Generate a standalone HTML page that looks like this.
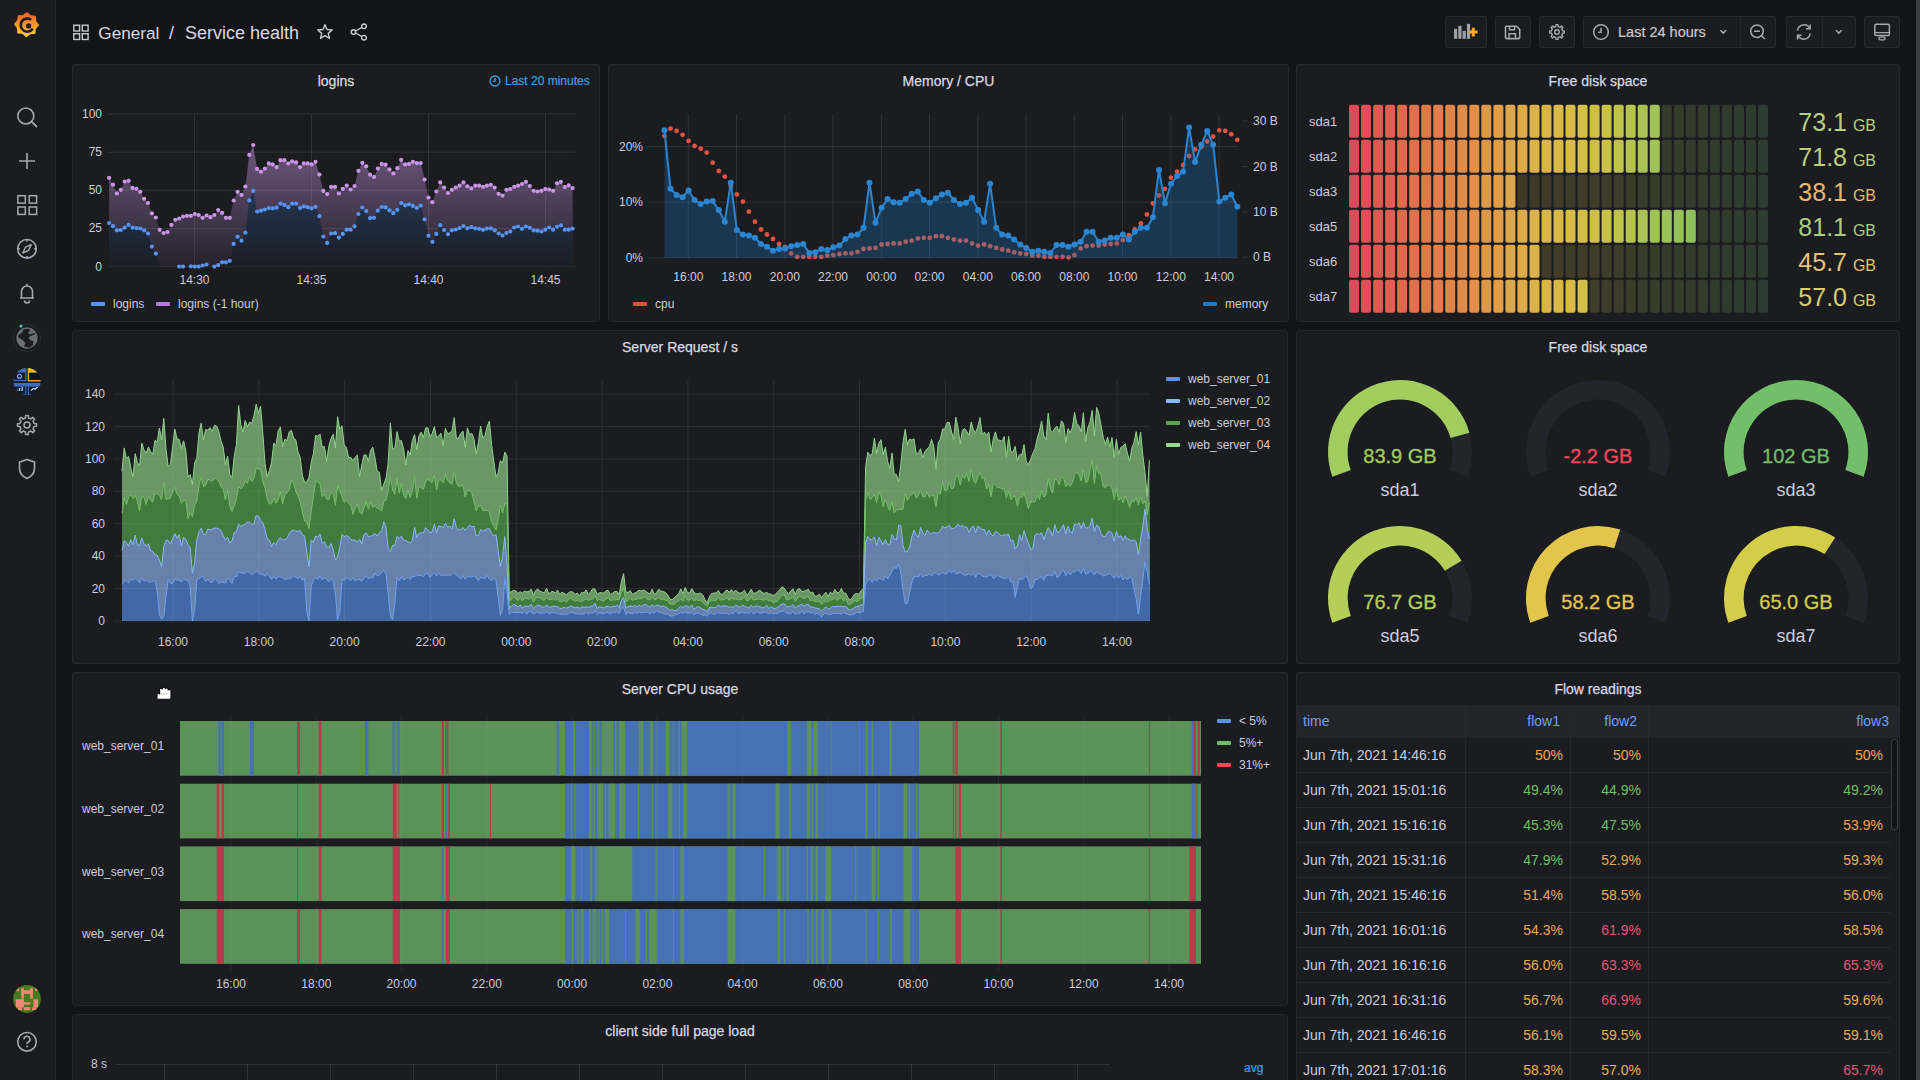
<!DOCTYPE html><html><head><meta charset="utf-8"><title>Service health - Grafana</title><style>
html,body{margin:0;padding:0;width:1920px;height:1080px;overflow:hidden;background:#131418;font-family:"Liberation Sans", sans-serif;color:#ccccdc}
.abs{position:absolute}
.panel{position:absolute;background:#1b1c20;border:1px solid #25272b;border-radius:3px;box-sizing:border-box}
.ptitle{position:absolute;text-align:center;font-size:14px;line-height:18px;height:18px;color:#d8d9e3;-webkit-text-stroke:0.25px #d8d9e3;white-space:nowrap}
.lbl{position:absolute;font-size:12px;line-height:14px;color:#ccccdc;white-space:nowrap}
svg{position:absolute;overflow:visible}
.btn{position:absolute;top:16px;height:32px;box-sizing:border-box;background:#1b1c20;border:1px solid #27292d;border-radius:2px}
</style></head><body>
<div class="abs" style="left:0;top:0;width:55px;height:1080px;background:#1b1c20;border-right:1px solid #26282c"></div>
<div class="abs" style="left:1916px;top:0;width:4px;height:1080px;background:#3e3f44"></div>
<div class="panel" style="left:72px;top:64px;width:528px;height:258px"></div>
<div class="ptitle" style="left:136.0px;top:72px;width:400px">logins</div>
<div class="panel" style="left:608px;top:64px;width:681px;height:258px"></div>
<div class="ptitle" style="left:748.5px;top:72px;width:400px">Memory / CPU</div>
<div class="panel" style="left:1296px;top:64px;width:604px;height:258px"></div>
<div class="ptitle" style="left:1398.0px;top:72px;width:400px">Free disk space</div>
<div class="panel" style="left:72px;top:330px;width:1216px;height:334px"></div>
<div class="ptitle" style="left:480.0px;top:338px;width:400px">Server Request / s</div>
<div class="panel" style="left:1296px;top:330px;width:604px;height:334px"></div>
<div class="ptitle" style="left:1398.0px;top:338px;width:400px">Free disk space</div>
<div class="panel" style="left:72px;top:672px;width:1216px;height:334px"></div>
<div class="ptitle" style="left:480.0px;top:680px;width:400px">Server CPU usage</div>
<div class="panel" style="left:1296px;top:672px;width:604px;height:420px"></div>
<div class="ptitle" style="left:1398.0px;top:680px;width:400px">Flow readings</div>
<div class="panel" style="left:72px;top:1014px;width:1216px;height:200px"></div>
<div class="ptitle" style="left:480.0px;top:1022px;width:400px">client side full page load</div>
<div class="abs" style="left:98.3px;top:22px;font-size:17.2px;line-height:22px;color:#d8d9e3;white-space:nowrap">General</div>
<div class="abs" style="left:169px;top:22px;font-size:18px;line-height:22px;color:#d8d9e3;white-space:nowrap">/</div>
<div class="abs" style="left:185px;top:22px;font-size:18px;line-height:22px;color:#d8d9e3;white-space:nowrap">Service health</div>
<svg style="left:0;top:0" width="1920" height="1080"><defs><linearGradient id="gp" gradientUnits="userSpaceOnUse" x1="0" y1="140" x2="0" y2="267"><stop offset="0" stop-color="#ca95e5" stop-opacity="0.5"/><stop offset="1" stop-color="#ca95e5" stop-opacity="0.05"/></linearGradient><linearGradient id="gb" gradientUnits="userSpaceOnUse" x1="0" y1="114" x2="0" y2="267"><stop offset="0" stop-color="#2d5080"/><stop offset="1" stop-color="#1a1d24"/></linearGradient></defs><line x1="108" x2="575" y1="266.6" y2="266.6" stroke="rgba(204,204,220,0.12)" stroke-width="1"/><line x1="108" x2="575" y1="228.5" y2="228.5" stroke="rgba(204,204,220,0.12)" stroke-width="1"/><line x1="108" x2="575" y1="190.3" y2="190.3" stroke="rgba(204,204,220,0.12)" stroke-width="1"/><line x1="108" x2="575" y1="152.2" y2="152.2" stroke="rgba(204,204,220,0.12)" stroke-width="1"/><line x1="108" x2="575" y1="114.0" y2="114.0" stroke="rgba(204,204,220,0.12)" stroke-width="1"/><line x1="194.5" x2="194.5" y1="114" y2="267" stroke="rgba(204,204,220,0.12)" stroke-width="1"/><line x1="311.5" x2="311.5" y1="114" y2="267" stroke="rgba(204,204,220,0.12)" stroke-width="1"/><line x1="428.5" x2="428.5" y1="114" y2="267" stroke="rgba(204,204,220,0.12)" stroke-width="1"/><line x1="545.5" x2="545.5" y1="114" y2="267" stroke="rgba(204,204,220,0.12)" stroke-width="1"/><polygon points="109.1,266.6 109.1,177.9 113.0,184.7 116.9,193.4 120.8,189.8 124.7,181.6 128.6,180.8 132.5,187.9 136.4,188.8 140.3,191.8 144.2,198.8 148.0,203.0 151.9,213.3 155.8,217.5 159.7,229.8 163.6,233.0 167.5,232.1 171.4,224.9 175.3,219.8 179.2,218.5 183.1,216.5 187.0,215.8 190.9,215.8 194.8,214.0 198.7,215.0 202.6,217.8 206.5,215.5 210.4,217.2 214.3,215.0 218.2,210.0 222.1,212.9 225.9,217.8 229.8,217.8 233.7,200.5 237.6,191.8 241.5,194.9 245.4,186.6 249.3,154.9 253.2,145.0 257.1,168.9 261.0,171.7 264.9,168.6 268.8,163.4 272.7,164.4 276.6,167.1 280.5,160.2 284.4,160.2 288.3,163.4 292.2,161.3 296.1,162.4 300.0,167.1 303.8,163.4 307.7,163.4 311.6,164.4 315.5,161.8 319.4,174.6 323.3,190.9 327.2,194.1 331.1,186.9 335.0,186.9 338.9,193.4 342.8,188.8 346.7,185.6 350.6,189.5 354.5,186.0 358.4,170.8 362.3,162.8 366.2,166.3 370.1,174.7 374.0,176.9 377.9,168.6 381.7,163.9 385.6,164.7 389.5,169.4 393.4,173.4 397.3,168.2 401.2,159.9 405.1,164.4 409.0,163.9 412.9,161.8 416.8,163.1 420.7,163.1 424.6,179.6 428.5,197.5 432.4,202.2 436.3,191.5 440.2,182.4 444.1,187.6 448.0,193.0 451.9,189.8 455.8,187.6 459.6,185.6 463.5,182.4 467.4,186.3 471.3,188.3 475.2,185.7 479.1,185.6 483.0,186.8 486.9,185.7 490.8,184.8 494.7,187.6 498.6,193.8 502.5,195.6 506.4,189.8 510.3,189.1 514.2,186.8 518.1,185.7 522.0,184.0 525.9,181.8 529.8,186.0 533.7,190.8 537.5,191.5 541.4,190.8 545.3,189.1 549.2,189.5 553.1,190.8 557.0,183.3 560.9,181.8 564.8,187.1 568.7,185.3 572.6,188.0 572.6,266.6" fill="url(#gp)"/><polygon points="109.1,266.6 109.1,223.0 113.0,226.2 116.9,230.3 120.8,230.0 124.7,227.7 128.6,224.9 132.5,227.7 136.4,228.1 140.3,228.5 144.2,230.4 148.0,233.5 151.9,246.6 155.8,253.6 159.7,266.6 163.6,266.6 167.5,266.6 171.4,266.6 175.3,266.6 179.2,266.6 183.1,266.6 187.0,266.6 190.9,266.3 194.8,266.6 198.7,266.6 202.6,265.5 206.5,264.5 210.4,266.6 214.3,266.6 218.2,265.2 222.1,262.3 225.9,262.3 229.8,260.8 233.7,243.9 237.6,236.8 241.5,240.7 245.4,232.7 249.3,200.4 253.2,190.9 257.1,211.5 261.0,210.7 264.9,209.5 268.8,208.0 272.7,208.3 276.6,207.7 280.5,203.7 284.4,204.9 288.3,207.2 292.2,203.7 296.1,203.7 300.0,208.0 303.8,206.3 307.7,207.2 311.6,208.3 315.5,206.8 319.4,216.2 323.3,236.5 327.2,242.9 331.1,233.5 335.0,233.2 338.9,237.6 342.8,233.9 346.7,229.7 350.6,229.7 354.5,226.3 358.4,214.0 362.3,207.5 366.2,211.1 370.1,218.2 374.0,217.8 377.9,210.6 381.7,207.1 385.6,207.4 389.5,210.3 393.4,213.2 397.3,209.8 401.2,203.1 405.1,205.3 409.0,204.3 412.9,205.9 416.8,208.0 420.7,205.6 424.6,219.3 428.5,235.8 432.4,241.9 436.3,233.9 440.2,225.2 444.1,230.0 448.0,234.2 451.9,230.3 455.8,229.5 459.6,228.0 463.5,226.0 467.4,228.3 471.3,227.2 475.2,228.3 479.1,228.8 483.0,229.8 486.9,228.6 490.8,228.3 494.7,230.3 498.6,233.5 502.5,235.5 506.4,233.0 510.3,231.5 514.2,227.5 518.1,226.5 522.0,228.8 525.9,226.5 529.8,227.8 533.7,230.3 537.5,230.7 541.4,231.5 545.3,229.7 549.2,227.5 553.1,229.7 557.0,226.8 560.9,225.4 564.8,229.7 568.7,229.7 572.6,228.6 572.6,266.6" fill="url(#gb)"/><circle cx="109.1" cy="177.9" r="2.1" fill="#ca95e5"/><circle cx="113.0" cy="184.7" r="2.1" fill="#ca95e5"/><circle cx="116.9" cy="193.4" r="2.1" fill="#ca95e5"/><circle cx="120.8" cy="189.8" r="2.1" fill="#ca95e5"/><circle cx="124.7" cy="181.6" r="2.1" fill="#ca95e5"/><circle cx="128.6" cy="180.8" r="2.1" fill="#ca95e5"/><circle cx="132.5" cy="187.9" r="2.1" fill="#ca95e5"/><circle cx="136.4" cy="188.8" r="2.1" fill="#ca95e5"/><circle cx="140.3" cy="191.8" r="2.1" fill="#ca95e5"/><circle cx="144.2" cy="198.8" r="2.1" fill="#ca95e5"/><circle cx="148.0" cy="203.0" r="2.1" fill="#ca95e5"/><circle cx="151.9" cy="213.3" r="2.1" fill="#ca95e5"/><circle cx="155.8" cy="217.5" r="2.1" fill="#ca95e5"/><circle cx="159.7" cy="229.8" r="2.1" fill="#ca95e5"/><circle cx="163.6" cy="233.0" r="2.1" fill="#ca95e5"/><circle cx="167.5" cy="232.1" r="2.1" fill="#ca95e5"/><circle cx="171.4" cy="224.9" r="2.1" fill="#ca95e5"/><circle cx="175.3" cy="219.8" r="2.1" fill="#ca95e5"/><circle cx="179.2" cy="218.5" r="2.1" fill="#ca95e5"/><circle cx="183.1" cy="216.5" r="2.1" fill="#ca95e5"/><circle cx="187.0" cy="215.8" r="2.1" fill="#ca95e5"/><circle cx="190.9" cy="215.8" r="2.1" fill="#ca95e5"/><circle cx="194.8" cy="214.0" r="2.1" fill="#ca95e5"/><circle cx="198.7" cy="215.0" r="2.1" fill="#ca95e5"/><circle cx="202.6" cy="217.8" r="2.1" fill="#ca95e5"/><circle cx="206.5" cy="215.5" r="2.1" fill="#ca95e5"/><circle cx="210.4" cy="217.2" r="2.1" fill="#ca95e5"/><circle cx="214.3" cy="215.0" r="2.1" fill="#ca95e5"/><circle cx="218.2" cy="210.0" r="2.1" fill="#ca95e5"/><circle cx="222.1" cy="212.9" r="2.1" fill="#ca95e5"/><circle cx="225.9" cy="217.8" r="2.1" fill="#ca95e5"/><circle cx="229.8" cy="217.8" r="2.1" fill="#ca95e5"/><circle cx="233.7" cy="200.5" r="2.1" fill="#ca95e5"/><circle cx="237.6" cy="191.8" r="2.1" fill="#ca95e5"/><circle cx="241.5" cy="194.9" r="2.1" fill="#ca95e5"/><circle cx="245.4" cy="186.6" r="2.1" fill="#ca95e5"/><circle cx="249.3" cy="154.9" r="2.1" fill="#ca95e5"/><circle cx="253.2" cy="145.0" r="2.1" fill="#ca95e5"/><circle cx="257.1" cy="168.9" r="2.1" fill="#ca95e5"/><circle cx="261.0" cy="171.7" r="2.1" fill="#ca95e5"/><circle cx="264.9" cy="168.6" r="2.1" fill="#ca95e5"/><circle cx="268.8" cy="163.4" r="2.1" fill="#ca95e5"/><circle cx="272.7" cy="164.4" r="2.1" fill="#ca95e5"/><circle cx="276.6" cy="167.1" r="2.1" fill="#ca95e5"/><circle cx="280.5" cy="160.2" r="2.1" fill="#ca95e5"/><circle cx="284.4" cy="160.2" r="2.1" fill="#ca95e5"/><circle cx="288.3" cy="163.4" r="2.1" fill="#ca95e5"/><circle cx="292.2" cy="161.3" r="2.1" fill="#ca95e5"/><circle cx="296.1" cy="162.4" r="2.1" fill="#ca95e5"/><circle cx="300.0" cy="167.1" r="2.1" fill="#ca95e5"/><circle cx="303.8" cy="163.4" r="2.1" fill="#ca95e5"/><circle cx="307.7" cy="163.4" r="2.1" fill="#ca95e5"/><circle cx="311.6" cy="164.4" r="2.1" fill="#ca95e5"/><circle cx="315.5" cy="161.8" r="2.1" fill="#ca95e5"/><circle cx="319.4" cy="174.6" r="2.1" fill="#ca95e5"/><circle cx="323.3" cy="190.9" r="2.1" fill="#ca95e5"/><circle cx="327.2" cy="194.1" r="2.1" fill="#ca95e5"/><circle cx="331.1" cy="186.9" r="2.1" fill="#ca95e5"/><circle cx="335.0" cy="186.9" r="2.1" fill="#ca95e5"/><circle cx="338.9" cy="193.4" r="2.1" fill="#ca95e5"/><circle cx="342.8" cy="188.8" r="2.1" fill="#ca95e5"/><circle cx="346.7" cy="185.6" r="2.1" fill="#ca95e5"/><circle cx="350.6" cy="189.5" r="2.1" fill="#ca95e5"/><circle cx="354.5" cy="186.0" r="2.1" fill="#ca95e5"/><circle cx="358.4" cy="170.8" r="2.1" fill="#ca95e5"/><circle cx="362.3" cy="162.8" r="2.1" fill="#ca95e5"/><circle cx="366.2" cy="166.3" r="2.1" fill="#ca95e5"/><circle cx="370.1" cy="174.7" r="2.1" fill="#ca95e5"/><circle cx="374.0" cy="176.9" r="2.1" fill="#ca95e5"/><circle cx="377.9" cy="168.6" r="2.1" fill="#ca95e5"/><circle cx="381.7" cy="163.9" r="2.1" fill="#ca95e5"/><circle cx="385.6" cy="164.7" r="2.1" fill="#ca95e5"/><circle cx="389.5" cy="169.4" r="2.1" fill="#ca95e5"/><circle cx="393.4" cy="173.4" r="2.1" fill="#ca95e5"/><circle cx="397.3" cy="168.2" r="2.1" fill="#ca95e5"/><circle cx="401.2" cy="159.9" r="2.1" fill="#ca95e5"/><circle cx="405.1" cy="164.4" r="2.1" fill="#ca95e5"/><circle cx="409.0" cy="163.9" r="2.1" fill="#ca95e5"/><circle cx="412.9" cy="161.8" r="2.1" fill="#ca95e5"/><circle cx="416.8" cy="163.1" r="2.1" fill="#ca95e5"/><circle cx="420.7" cy="163.1" r="2.1" fill="#ca95e5"/><circle cx="424.6" cy="179.6" r="2.1" fill="#ca95e5"/><circle cx="428.5" cy="197.5" r="2.1" fill="#ca95e5"/><circle cx="432.4" cy="202.2" r="2.1" fill="#ca95e5"/><circle cx="436.3" cy="191.5" r="2.1" fill="#ca95e5"/><circle cx="440.2" cy="182.4" r="2.1" fill="#ca95e5"/><circle cx="444.1" cy="187.6" r="2.1" fill="#ca95e5"/><circle cx="448.0" cy="193.0" r="2.1" fill="#ca95e5"/><circle cx="451.9" cy="189.8" r="2.1" fill="#ca95e5"/><circle cx="455.8" cy="187.6" r="2.1" fill="#ca95e5"/><circle cx="459.6" cy="185.6" r="2.1" fill="#ca95e5"/><circle cx="463.5" cy="182.4" r="2.1" fill="#ca95e5"/><circle cx="467.4" cy="186.3" r="2.1" fill="#ca95e5"/><circle cx="471.3" cy="188.3" r="2.1" fill="#ca95e5"/><circle cx="475.2" cy="185.7" r="2.1" fill="#ca95e5"/><circle cx="479.1" cy="185.6" r="2.1" fill="#ca95e5"/><circle cx="483.0" cy="186.8" r="2.1" fill="#ca95e5"/><circle cx="486.9" cy="185.7" r="2.1" fill="#ca95e5"/><circle cx="490.8" cy="184.8" r="2.1" fill="#ca95e5"/><circle cx="494.7" cy="187.6" r="2.1" fill="#ca95e5"/><circle cx="498.6" cy="193.8" r="2.1" fill="#ca95e5"/><circle cx="502.5" cy="195.6" r="2.1" fill="#ca95e5"/><circle cx="506.4" cy="189.8" r="2.1" fill="#ca95e5"/><circle cx="510.3" cy="189.1" r="2.1" fill="#ca95e5"/><circle cx="514.2" cy="186.8" r="2.1" fill="#ca95e5"/><circle cx="518.1" cy="185.7" r="2.1" fill="#ca95e5"/><circle cx="522.0" cy="184.0" r="2.1" fill="#ca95e5"/><circle cx="525.9" cy="181.8" r="2.1" fill="#ca95e5"/><circle cx="529.8" cy="186.0" r="2.1" fill="#ca95e5"/><circle cx="533.7" cy="190.8" r="2.1" fill="#ca95e5"/><circle cx="537.5" cy="191.5" r="2.1" fill="#ca95e5"/><circle cx="541.4" cy="190.8" r="2.1" fill="#ca95e5"/><circle cx="545.3" cy="189.1" r="2.1" fill="#ca95e5"/><circle cx="549.2" cy="189.5" r="2.1" fill="#ca95e5"/><circle cx="553.1" cy="190.8" r="2.1" fill="#ca95e5"/><circle cx="557.0" cy="183.3" r="2.1" fill="#ca95e5"/><circle cx="560.9" cy="181.8" r="2.1" fill="#ca95e5"/><circle cx="564.8" cy="187.1" r="2.1" fill="#ca95e5"/><circle cx="568.7" cy="185.3" r="2.1" fill="#ca95e5"/><circle cx="572.6" cy="188.0" r="2.1" fill="#ca95e5"/><circle cx="109.1" cy="223.0" r="2.1" fill="#5794f2"/><circle cx="113.0" cy="226.2" r="2.1" fill="#5794f2"/><circle cx="116.9" cy="230.3" r="2.1" fill="#5794f2"/><circle cx="120.8" cy="230.0" r="2.1" fill="#5794f2"/><circle cx="124.7" cy="227.7" r="2.1" fill="#5794f2"/><circle cx="128.6" cy="224.9" r="2.1" fill="#5794f2"/><circle cx="132.5" cy="227.7" r="2.1" fill="#5794f2"/><circle cx="136.4" cy="228.1" r="2.1" fill="#5794f2"/><circle cx="140.3" cy="228.5" r="2.1" fill="#5794f2"/><circle cx="144.2" cy="230.4" r="2.1" fill="#5794f2"/><circle cx="148.0" cy="233.5" r="2.1" fill="#5794f2"/><circle cx="151.9" cy="246.6" r="2.1" fill="#5794f2"/><circle cx="155.8" cy="253.6" r="2.1" fill="#5794f2"/><circle cx="179.2" cy="266.6" r="2.1" fill="#5794f2"/><circle cx="183.1" cy="266.6" r="2.1" fill="#5794f2"/><circle cx="190.9" cy="266.3" r="2.1" fill="#5794f2"/><circle cx="194.8" cy="266.6" r="2.1" fill="#5794f2"/><circle cx="198.7" cy="266.6" r="2.1" fill="#5794f2"/><circle cx="202.6" cy="265.5" r="2.1" fill="#5794f2"/><circle cx="206.5" cy="264.5" r="2.1" fill="#5794f2"/><circle cx="214.3" cy="266.6" r="2.1" fill="#5794f2"/><circle cx="218.2" cy="265.2" r="2.1" fill="#5794f2"/><circle cx="222.1" cy="262.3" r="2.1" fill="#5794f2"/><circle cx="225.9" cy="262.3" r="2.1" fill="#5794f2"/><circle cx="229.8" cy="260.8" r="2.1" fill="#5794f2"/><circle cx="233.7" cy="243.9" r="2.1" fill="#5794f2"/><circle cx="237.6" cy="236.8" r="2.1" fill="#5794f2"/><circle cx="241.5" cy="240.7" r="2.1" fill="#5794f2"/><circle cx="245.4" cy="232.7" r="2.1" fill="#5794f2"/><circle cx="249.3" cy="200.4" r="2.1" fill="#5794f2"/><circle cx="253.2" cy="190.9" r="2.1" fill="#5794f2"/><circle cx="257.1" cy="211.5" r="2.1" fill="#5794f2"/><circle cx="261.0" cy="210.7" r="2.1" fill="#5794f2"/><circle cx="264.9" cy="209.5" r="2.1" fill="#5794f2"/><circle cx="268.8" cy="208.0" r="2.1" fill="#5794f2"/><circle cx="272.7" cy="208.3" r="2.1" fill="#5794f2"/><circle cx="276.6" cy="207.7" r="2.1" fill="#5794f2"/><circle cx="280.5" cy="203.7" r="2.1" fill="#5794f2"/><circle cx="284.4" cy="204.9" r="2.1" fill="#5794f2"/><circle cx="288.3" cy="207.2" r="2.1" fill="#5794f2"/><circle cx="292.2" cy="203.7" r="2.1" fill="#5794f2"/><circle cx="296.1" cy="203.7" r="2.1" fill="#5794f2"/><circle cx="300.0" cy="208.0" r="2.1" fill="#5794f2"/><circle cx="303.8" cy="206.3" r="2.1" fill="#5794f2"/><circle cx="307.7" cy="207.2" r="2.1" fill="#5794f2"/><circle cx="311.6" cy="208.3" r="2.1" fill="#5794f2"/><circle cx="315.5" cy="206.8" r="2.1" fill="#5794f2"/><circle cx="319.4" cy="216.2" r="2.1" fill="#5794f2"/><circle cx="323.3" cy="236.5" r="2.1" fill="#5794f2"/><circle cx="327.2" cy="242.9" r="2.1" fill="#5794f2"/><circle cx="331.1" cy="233.5" r="2.1" fill="#5794f2"/><circle cx="335.0" cy="233.2" r="2.1" fill="#5794f2"/><circle cx="338.9" cy="237.6" r="2.1" fill="#5794f2"/><circle cx="342.8" cy="233.9" r="2.1" fill="#5794f2"/><circle cx="346.7" cy="229.7" r="2.1" fill="#5794f2"/><circle cx="350.6" cy="229.7" r="2.1" fill="#5794f2"/><circle cx="354.5" cy="226.3" r="2.1" fill="#5794f2"/><circle cx="358.4" cy="214.0" r="2.1" fill="#5794f2"/><circle cx="362.3" cy="207.5" r="2.1" fill="#5794f2"/><circle cx="366.2" cy="211.1" r="2.1" fill="#5794f2"/><circle cx="370.1" cy="218.2" r="2.1" fill="#5794f2"/><circle cx="374.0" cy="217.8" r="2.1" fill="#5794f2"/><circle cx="377.9" cy="210.6" r="2.1" fill="#5794f2"/><circle cx="381.7" cy="207.1" r="2.1" fill="#5794f2"/><circle cx="385.6" cy="207.4" r="2.1" fill="#5794f2"/><circle cx="389.5" cy="210.3" r="2.1" fill="#5794f2"/><circle cx="393.4" cy="213.2" r="2.1" fill="#5794f2"/><circle cx="397.3" cy="209.8" r="2.1" fill="#5794f2"/><circle cx="401.2" cy="203.1" r="2.1" fill="#5794f2"/><circle cx="405.1" cy="205.3" r="2.1" fill="#5794f2"/><circle cx="409.0" cy="204.3" r="2.1" fill="#5794f2"/><circle cx="412.9" cy="205.9" r="2.1" fill="#5794f2"/><circle cx="416.8" cy="208.0" r="2.1" fill="#5794f2"/><circle cx="420.7" cy="205.6" r="2.1" fill="#5794f2"/><circle cx="424.6" cy="219.3" r="2.1" fill="#5794f2"/><circle cx="428.5" cy="235.8" r="2.1" fill="#5794f2"/><circle cx="432.4" cy="241.9" r="2.1" fill="#5794f2"/><circle cx="436.3" cy="233.9" r="2.1" fill="#5794f2"/><circle cx="440.2" cy="225.2" r="2.1" fill="#5794f2"/><circle cx="444.1" cy="230.0" r="2.1" fill="#5794f2"/><circle cx="448.0" cy="234.2" r="2.1" fill="#5794f2"/><circle cx="451.9" cy="230.3" r="2.1" fill="#5794f2"/><circle cx="455.8" cy="229.5" r="2.1" fill="#5794f2"/><circle cx="459.6" cy="228.0" r="2.1" fill="#5794f2"/><circle cx="463.5" cy="226.0" r="2.1" fill="#5794f2"/><circle cx="467.4" cy="228.3" r="2.1" fill="#5794f2"/><circle cx="471.3" cy="227.2" r="2.1" fill="#5794f2"/><circle cx="475.2" cy="228.3" r="2.1" fill="#5794f2"/><circle cx="479.1" cy="228.8" r="2.1" fill="#5794f2"/><circle cx="483.0" cy="229.8" r="2.1" fill="#5794f2"/><circle cx="486.9" cy="228.6" r="2.1" fill="#5794f2"/><circle cx="490.8" cy="228.3" r="2.1" fill="#5794f2"/><circle cx="494.7" cy="230.3" r="2.1" fill="#5794f2"/><circle cx="498.6" cy="233.5" r="2.1" fill="#5794f2"/><circle cx="502.5" cy="235.5" r="2.1" fill="#5794f2"/><circle cx="506.4" cy="233.0" r="2.1" fill="#5794f2"/><circle cx="510.3" cy="231.5" r="2.1" fill="#5794f2"/><circle cx="514.2" cy="227.5" r="2.1" fill="#5794f2"/><circle cx="518.1" cy="226.5" r="2.1" fill="#5794f2"/><circle cx="522.0" cy="228.8" r="2.1" fill="#5794f2"/><circle cx="525.9" cy="226.5" r="2.1" fill="#5794f2"/><circle cx="529.8" cy="227.8" r="2.1" fill="#5794f2"/><circle cx="533.7" cy="230.3" r="2.1" fill="#5794f2"/><circle cx="537.5" cy="230.7" r="2.1" fill="#5794f2"/><circle cx="541.4" cy="231.5" r="2.1" fill="#5794f2"/><circle cx="545.3" cy="229.7" r="2.1" fill="#5794f2"/><circle cx="549.2" cy="227.5" r="2.1" fill="#5794f2"/><circle cx="553.1" cy="229.7" r="2.1" fill="#5794f2"/><circle cx="557.0" cy="226.8" r="2.1" fill="#5794f2"/><circle cx="560.9" cy="225.4" r="2.1" fill="#5794f2"/><circle cx="564.8" cy="229.7" r="2.1" fill="#5794f2"/><circle cx="568.7" cy="229.7" r="2.1" fill="#5794f2"/><circle cx="572.6" cy="228.6" r="2.1" fill="#5794f2"/></svg>
<div class="lbl" style="left:72px;width:30px;text-align:right;top:107px">100</div>
<div class="lbl" style="left:72px;width:30px;text-align:right;top:145px">75</div>
<div class="lbl" style="left:72px;width:30px;text-align:right;top:183px">50</div>
<div class="lbl" style="left:72px;width:30px;text-align:right;top:221px">25</div>
<div class="lbl" style="left:72px;width:30px;text-align:right;top:260px">0</div>
<div class="lbl" style="left:164.5px;width:60px;text-align:center;top:273px">14:30</div>
<div class="lbl" style="left:281.5px;width:60px;text-align:center;top:273px">14:35</div>
<div class="lbl" style="left:398.5px;width:60px;text-align:center;top:273px">14:40</div>
<div class="lbl" style="left:515.5px;width:60px;text-align:center;top:273px">14:45</div>
<div class="abs" style="left:91px;top:302px;width:14px;height:4px;border-radius:1px;background:#5794f2"></div>
<div class="lbl" style="left:113px;top:297px">logins</div>
<div class="abs" style="left:156px;top:302px;width:14px;height:4px;border-radius:1px;background:#b877d9"></div>
<div class="lbl" style="left:178px;top:297px">logins (-1 hour)</div>
<div class="abs" style="left:489px;top:74px;font-size:12px;line-height:14px;color:#33a2e5;white-space:nowrap;-webkit-text-stroke:0.2px #33a2e5"><svg style="position:relative;display:inline-block;vertical-align:-2px;margin-right:4px" width="12" height="12" viewBox="0 0 12 12"><circle cx="6" cy="6" r="5" fill="none" stroke="#33a2e5" stroke-width="1.3"/><path d="M6 3v3.2H3.8" fill="none" stroke="#33a2e5" stroke-width="1.3"/></svg>Last 20 minutes</div>
<svg style="left:0;top:0" width="1920" height="1080"><line x1="647" x2="1238" y1="257.9" y2="257.9" stroke="rgba(204,204,220,0.12)"/><line x1="647" x2="1238" y1="202.2" y2="202.2" stroke="rgba(204,204,220,0.12)"/><line x1="647" x2="1238" y1="146.5" y2="146.5" stroke="rgba(204,204,220,0.12)"/><line x1="688.3" x2="688.3" y1="114" y2="258" stroke="rgba(204,204,220,0.12)"/><line x1="736.5" x2="736.5" y1="114" y2="258" stroke="rgba(204,204,220,0.12)"/><line x1="784.8" x2="784.8" y1="114" y2="258" stroke="rgba(204,204,220,0.12)"/><line x1="833.0" x2="833.0" y1="114" y2="258" stroke="rgba(204,204,220,0.12)"/><line x1="881.3" x2="881.3" y1="114" y2="258" stroke="rgba(204,204,220,0.12)"/><line x1="929.5" x2="929.5" y1="114" y2="258" stroke="rgba(204,204,220,0.12)"/><line x1="977.8" x2="977.8" y1="114" y2="258" stroke="rgba(204,204,220,0.12)"/><line x1="1026.0" x2="1026.0" y1="114" y2="258" stroke="rgba(204,204,220,0.12)"/><line x1="1074.3" x2="1074.3" y1="114" y2="258" stroke="rgba(204,204,220,0.12)"/><line x1="1122.5" x2="1122.5" y1="114" y2="258" stroke="rgba(204,204,220,0.12)"/><line x1="1170.8" x2="1170.8" y1="114" y2="258" stroke="rgba(204,204,220,0.12)"/><line x1="1219.0" x2="1219.0" y1="114" y2="258" stroke="rgba(204,204,220,0.12)"/><line x1="1242" x2="1248" y1="120.9" y2="120.9" stroke="rgba(204,204,220,0.12)"/><line x1="1242" x2="1248" y1="166.5" y2="166.5" stroke="rgba(204,204,220,0.12)"/><line x1="1242" x2="1248" y1="212" y2="212" stroke="rgba(204,204,220,0.12)"/><line x1="1242" x2="1248" y1="257.2" y2="257.2" stroke="rgba(204,204,220,0.12)"/><circle cx="664.5" cy="135.9" r="2.4" fill="#e0533f"/><circle cx="670.5" cy="128.7" r="2.4" fill="#e0533f"/><circle cx="676.6" cy="130.9" r="2.4" fill="#e0533f"/><circle cx="682.6" cy="134.8" r="2.4" fill="#e0533f"/><circle cx="688.6" cy="140.9" r="2.4" fill="#e0533f"/><circle cx="694.6" cy="145.9" r="2.4" fill="#e0533f"/><circle cx="700.7" cy="148.7" r="2.4" fill="#e0533f"/><circle cx="706.7" cy="152.6" r="2.4" fill="#e0533f"/><circle cx="712.7" cy="162.7" r="2.4" fill="#e0533f"/><circle cx="718.8" cy="171.0" r="2.4" fill="#e0533f"/><circle cx="724.8" cy="176.6" r="2.4" fill="#e0533f"/><circle cx="730.8" cy="186.0" r="2.4" fill="#e0533f"/><circle cx="736.9" cy="194.4" r="2.4" fill="#e0533f"/><circle cx="742.9" cy="201.6" r="2.4" fill="#e0533f"/><circle cx="748.9" cy="211.7" r="2.4" fill="#e0533f"/><circle cx="755.0" cy="221.7" r="2.4" fill="#e0533f"/><circle cx="761.0" cy="229.5" r="2.4" fill="#e0533f"/><circle cx="767.0" cy="234.5" r="2.4" fill="#e0533f"/><circle cx="773.0" cy="239.0" r="2.4" fill="#e0533f"/><circle cx="779.1" cy="244.0" r="2.4" fill="#e0533f"/><circle cx="785.1" cy="246.8" r="2.4" fill="#e0533f"/><circle cx="791.1" cy="253.4" r="2.4" fill="#e0533f"/><circle cx="797.2" cy="256.8" r="2.4" fill="#e0533f"/><circle cx="803.2" cy="256.8" r="2.4" fill="#e0533f"/><circle cx="809.2" cy="256.8" r="2.4" fill="#e0533f"/><circle cx="815.2" cy="256.8" r="2.4" fill="#e0533f"/><circle cx="821.3" cy="256.8" r="2.4" fill="#e0533f"/><circle cx="827.3" cy="255.7" r="2.4" fill="#e0533f"/><circle cx="833.3" cy="255.1" r="2.4" fill="#e0533f"/><circle cx="839.4" cy="254.0" r="2.4" fill="#e0533f"/><circle cx="845.4" cy="253.4" r="2.4" fill="#e0533f"/><circle cx="851.4" cy="253.4" r="2.4" fill="#e0533f"/><circle cx="857.5" cy="251.8" r="2.4" fill="#e0533f"/><circle cx="863.5" cy="249.0" r="2.4" fill="#e0533f"/><circle cx="869.5" cy="248.4" r="2.4" fill="#e0533f"/><circle cx="875.5" cy="247.9" r="2.4" fill="#e0533f"/><circle cx="881.6" cy="244.5" r="2.4" fill="#e0533f"/><circle cx="887.6" cy="244.0" r="2.4" fill="#e0533f"/><circle cx="893.6" cy="243.4" r="2.4" fill="#e0533f"/><circle cx="899.7" cy="243.4" r="2.4" fill="#e0533f"/><circle cx="905.7" cy="241.7" r="2.4" fill="#e0533f"/><circle cx="911.7" cy="240.6" r="2.4" fill="#e0533f"/><circle cx="917.8" cy="238.4" r="2.4" fill="#e0533f"/><circle cx="923.8" cy="237.8" r="2.4" fill="#e0533f"/><circle cx="929.8" cy="237.8" r="2.4" fill="#e0533f"/><circle cx="935.9" cy="236.2" r="2.4" fill="#e0533f"/><circle cx="941.9" cy="236.2" r="2.4" fill="#e0533f"/><circle cx="947.9" cy="237.8" r="2.4" fill="#e0533f"/><circle cx="953.9" cy="239.5" r="2.4" fill="#e0533f"/><circle cx="960.0" cy="240.6" r="2.4" fill="#e0533f"/><circle cx="966.0" cy="240.6" r="2.4" fill="#e0533f"/><circle cx="972.0" cy="243.4" r="2.4" fill="#e0533f"/><circle cx="978.1" cy="245.6" r="2.4" fill="#e0533f"/><circle cx="984.1" cy="244.5" r="2.4" fill="#e0533f"/><circle cx="990.1" cy="246.2" r="2.4" fill="#e0533f"/><circle cx="996.2" cy="247.9" r="2.4" fill="#e0533f"/><circle cx="1002.2" cy="249.5" r="2.4" fill="#e0533f"/><circle cx="1008.2" cy="250.7" r="2.4" fill="#e0533f"/><circle cx="1014.2" cy="252.3" r="2.4" fill="#e0533f"/><circle cx="1020.3" cy="253.4" r="2.4" fill="#e0533f"/><circle cx="1026.3" cy="254.0" r="2.4" fill="#e0533f"/><circle cx="1032.3" cy="255.7" r="2.4" fill="#e0533f"/><circle cx="1038.4" cy="255.7" r="2.4" fill="#e0533f"/><circle cx="1044.4" cy="256.8" r="2.4" fill="#e0533f"/><circle cx="1050.4" cy="256.8" r="2.4" fill="#e0533f"/><circle cx="1056.5" cy="256.8" r="2.4" fill="#e0533f"/><circle cx="1062.5" cy="256.8" r="2.4" fill="#e0533f"/><circle cx="1068.5" cy="257.3" r="2.4" fill="#e0533f"/><circle cx="1074.5" cy="255.1" r="2.4" fill="#e0533f"/><circle cx="1080.6" cy="248.4" r="2.4" fill="#e0533f"/><circle cx="1086.6" cy="246.2" r="2.4" fill="#e0533f"/><circle cx="1092.6" cy="245.6" r="2.4" fill="#e0533f"/><circle cx="1098.7" cy="245.6" r="2.4" fill="#e0533f"/><circle cx="1104.7" cy="244.5" r="2.4" fill="#e0533f"/><circle cx="1110.7" cy="244.0" r="2.4" fill="#e0533f"/><circle cx="1116.8" cy="243.4" r="2.4" fill="#e0533f"/><circle cx="1122.8" cy="240.1" r="2.4" fill="#e0533f"/><circle cx="1128.8" cy="235.1" r="2.4" fill="#e0533f"/><circle cx="1134.8" cy="229.5" r="2.4" fill="#e0533f"/><circle cx="1140.9" cy="223.4" r="2.4" fill="#e0533f"/><circle cx="1146.9" cy="214.5" r="2.4" fill="#e0533f"/><circle cx="1152.9" cy="203.3" r="2.4" fill="#e0533f"/><circle cx="1159.0" cy="195.5" r="2.4" fill="#e0533f"/><circle cx="1165.0" cy="188.8" r="2.4" fill="#e0533f"/><circle cx="1171.0" cy="177.7" r="2.4" fill="#e0533f"/><circle cx="1177.1" cy="171.6" r="2.4" fill="#e0533f"/><circle cx="1183.1" cy="164.9" r="2.4" fill="#e0533f"/><circle cx="1189.1" cy="156.0" r="2.4" fill="#e0533f"/><circle cx="1195.1" cy="149.3" r="2.4" fill="#e0533f"/><circle cx="1201.2" cy="147.1" r="2.4" fill="#e0533f"/><circle cx="1207.2" cy="141.5" r="2.4" fill="#e0533f"/><circle cx="1213.2" cy="136.5" r="2.4" fill="#e0533f"/><circle cx="1219.3" cy="130.3" r="2.4" fill="#e0533f"/><circle cx="1225.3" cy="130.9" r="2.4" fill="#e0533f"/><circle cx="1231.3" cy="134.2" r="2.4" fill="#e0533f"/><circle cx="1237.3" cy="139.8" r="2.4" fill="#e0533f"/><polygon points="664.5,257.9 664.5,130.3 670.5,188.8 676.6,195.0 682.6,197.2 688.6,190.5 694.6,200.0 700.7,203.9 706.7,201.6 712.7,201.1 718.8,210.0 724.8,221.7 730.8,182.7 736.9,230.0 742.9,234.5 748.9,235.6 755.0,237.8 761.0,244.0 767.0,246.8 773.0,250.7 779.1,249.0 785.1,248.4 791.1,246.2 797.2,245.1 803.2,244.0 809.2,252.9 815.2,252.3 821.3,249.0 827.3,250.1 833.3,247.3 839.4,245.6 845.4,239.0 851.4,235.6 857.5,234.5 863.5,227.8 869.5,182.7 875.5,222.8 881.6,207.8 887.6,198.9 893.6,202.2 899.7,202.8 905.7,198.9 911.7,193.8 917.8,191.6 923.8,200.0 929.8,202.8 935.9,198.3 941.9,194.4 947.9,192.7 953.9,200.0 960.0,203.9 966.0,202.8 972.0,197.7 978.1,210.0 984.1,221.7 990.1,183.8 996.2,227.8 1002.2,234.5 1008.2,235.6 1014.2,239.5 1020.3,244.5 1026.3,247.9 1032.3,251.8 1038.4,250.7 1044.4,251.8 1050.4,252.9 1056.5,245.1 1062.5,245.1 1068.5,246.8 1074.5,244.5 1080.6,241.7 1086.6,231.7 1092.6,231.7 1098.7,241.7 1104.7,240.6 1110.7,237.8 1116.8,237.8 1122.8,234.5 1128.8,239.5 1134.8,231.7 1140.9,227.8 1146.9,227.8 1152.9,217.2 1159.0,169.9 1165.0,203.3 1171.0,183.8 1177.1,176.0 1183.1,171.6 1189.1,127.6 1195.1,162.1 1201.2,144.8 1207.2,130.9 1213.2,144.8 1219.3,201.6 1225.3,197.7 1231.3,194.4 1237.3,206.7 1237.3,257.9" fill="#1f78c1" fill-opacity="0.3"/><polyline points="664.5,130.3 670.5,188.8 676.6,195.0 682.6,197.2 688.6,190.5 694.6,200.0 700.7,203.9 706.7,201.6 712.7,201.1 718.8,210.0 724.8,221.7 730.8,182.7 736.9,230.0 742.9,234.5 748.9,235.6 755.0,237.8 761.0,244.0 767.0,246.8 773.0,250.7 779.1,249.0 785.1,248.4 791.1,246.2 797.2,245.1 803.2,244.0 809.2,252.9 815.2,252.3 821.3,249.0 827.3,250.1 833.3,247.3 839.4,245.6 845.4,239.0 851.4,235.6 857.5,234.5 863.5,227.8 869.5,182.7 875.5,222.8 881.6,207.8 887.6,198.9 893.6,202.2 899.7,202.8 905.7,198.9 911.7,193.8 917.8,191.6 923.8,200.0 929.8,202.8 935.9,198.3 941.9,194.4 947.9,192.7 953.9,200.0 960.0,203.9 966.0,202.8 972.0,197.7 978.1,210.0 984.1,221.7 990.1,183.8 996.2,227.8 1002.2,234.5 1008.2,235.6 1014.2,239.5 1020.3,244.5 1026.3,247.9 1032.3,251.8 1038.4,250.7 1044.4,251.8 1050.4,252.9 1056.5,245.1 1062.5,245.1 1068.5,246.8 1074.5,244.5 1080.6,241.7 1086.6,231.7 1092.6,231.7 1098.7,241.7 1104.7,240.6 1110.7,237.8 1116.8,237.8 1122.8,234.5 1128.8,239.5 1134.8,231.7 1140.9,227.8 1146.9,227.8 1152.9,217.2 1159.0,169.9 1165.0,203.3 1171.0,183.8 1177.1,176.0 1183.1,171.6 1189.1,127.6 1195.1,162.1 1201.2,144.8 1207.2,130.9 1213.2,144.8 1219.3,201.6 1225.3,197.7 1231.3,194.4 1237.3,206.7" fill="none" stroke="#2b85d0" stroke-width="2" stroke-linejoin="round"/><circle cx="664.5" cy="130.3" r="3" fill="#2b85d0"/><circle cx="670.5" cy="188.8" r="3" fill="#2b85d0"/><circle cx="676.6" cy="195.0" r="3" fill="#2b85d0"/><circle cx="682.6" cy="197.2" r="3" fill="#2b85d0"/><circle cx="688.6" cy="190.5" r="3" fill="#2b85d0"/><circle cx="694.6" cy="200.0" r="3" fill="#2b85d0"/><circle cx="700.7" cy="203.9" r="3" fill="#2b85d0"/><circle cx="706.7" cy="201.6" r="3" fill="#2b85d0"/><circle cx="712.7" cy="201.1" r="3" fill="#2b85d0"/><circle cx="718.8" cy="210.0" r="3" fill="#2b85d0"/><circle cx="724.8" cy="221.7" r="3" fill="#2b85d0"/><circle cx="730.8" cy="182.7" r="3" fill="#2b85d0"/><circle cx="736.9" cy="230.0" r="3" fill="#2b85d0"/><circle cx="742.9" cy="234.5" r="3" fill="#2b85d0"/><circle cx="748.9" cy="235.6" r="3" fill="#2b85d0"/><circle cx="755.0" cy="237.8" r="3" fill="#2b85d0"/><circle cx="761.0" cy="244.0" r="3" fill="#2b85d0"/><circle cx="767.0" cy="246.8" r="3" fill="#2b85d0"/><circle cx="773.0" cy="250.7" r="3" fill="#2b85d0"/><circle cx="779.1" cy="249.0" r="3" fill="#2b85d0"/><circle cx="785.1" cy="248.4" r="3" fill="#2b85d0"/><circle cx="791.1" cy="246.2" r="3" fill="#2b85d0"/><circle cx="797.2" cy="245.1" r="3" fill="#2b85d0"/><circle cx="803.2" cy="244.0" r="3" fill="#2b85d0"/><circle cx="809.2" cy="252.9" r="3" fill="#2b85d0"/><circle cx="815.2" cy="252.3" r="3" fill="#2b85d0"/><circle cx="821.3" cy="249.0" r="3" fill="#2b85d0"/><circle cx="827.3" cy="250.1" r="3" fill="#2b85d0"/><circle cx="833.3" cy="247.3" r="3" fill="#2b85d0"/><circle cx="839.4" cy="245.6" r="3" fill="#2b85d0"/><circle cx="845.4" cy="239.0" r="3" fill="#2b85d0"/><circle cx="851.4" cy="235.6" r="3" fill="#2b85d0"/><circle cx="857.5" cy="234.5" r="3" fill="#2b85d0"/><circle cx="863.5" cy="227.8" r="3" fill="#2b85d0"/><circle cx="869.5" cy="182.7" r="3" fill="#2b85d0"/><circle cx="875.5" cy="222.8" r="3" fill="#2b85d0"/><circle cx="881.6" cy="207.8" r="3" fill="#2b85d0"/><circle cx="887.6" cy="198.9" r="3" fill="#2b85d0"/><circle cx="893.6" cy="202.2" r="3" fill="#2b85d0"/><circle cx="899.7" cy="202.8" r="3" fill="#2b85d0"/><circle cx="905.7" cy="198.9" r="3" fill="#2b85d0"/><circle cx="911.7" cy="193.8" r="3" fill="#2b85d0"/><circle cx="917.8" cy="191.6" r="3" fill="#2b85d0"/><circle cx="923.8" cy="200.0" r="3" fill="#2b85d0"/><circle cx="929.8" cy="202.8" r="3" fill="#2b85d0"/><circle cx="935.9" cy="198.3" r="3" fill="#2b85d0"/><circle cx="941.9" cy="194.4" r="3" fill="#2b85d0"/><circle cx="947.9" cy="192.7" r="3" fill="#2b85d0"/><circle cx="953.9" cy="200.0" r="3" fill="#2b85d0"/><circle cx="960.0" cy="203.9" r="3" fill="#2b85d0"/><circle cx="966.0" cy="202.8" r="3" fill="#2b85d0"/><circle cx="972.0" cy="197.7" r="3" fill="#2b85d0"/><circle cx="978.1" cy="210.0" r="3" fill="#2b85d0"/><circle cx="984.1" cy="221.7" r="3" fill="#2b85d0"/><circle cx="990.1" cy="183.8" r="3" fill="#2b85d0"/><circle cx="996.2" cy="227.8" r="3" fill="#2b85d0"/><circle cx="1002.2" cy="234.5" r="3" fill="#2b85d0"/><circle cx="1008.2" cy="235.6" r="3" fill="#2b85d0"/><circle cx="1014.2" cy="239.5" r="3" fill="#2b85d0"/><circle cx="1020.3" cy="244.5" r="3" fill="#2b85d0"/><circle cx="1026.3" cy="247.9" r="3" fill="#2b85d0"/><circle cx="1032.3" cy="251.8" r="3" fill="#2b85d0"/><circle cx="1038.4" cy="250.7" r="3" fill="#2b85d0"/><circle cx="1044.4" cy="251.8" r="3" fill="#2b85d0"/><circle cx="1050.4" cy="252.9" r="3" fill="#2b85d0"/><circle cx="1056.5" cy="245.1" r="3" fill="#2b85d0"/><circle cx="1062.5" cy="245.1" r="3" fill="#2b85d0"/><circle cx="1068.5" cy="246.8" r="3" fill="#2b85d0"/><circle cx="1074.5" cy="244.5" r="3" fill="#2b85d0"/><circle cx="1080.6" cy="241.7" r="3" fill="#2b85d0"/><circle cx="1086.6" cy="231.7" r="3" fill="#2b85d0"/><circle cx="1092.6" cy="231.7" r="3" fill="#2b85d0"/><circle cx="1098.7" cy="241.7" r="3" fill="#2b85d0"/><circle cx="1104.7" cy="240.6" r="3" fill="#2b85d0"/><circle cx="1110.7" cy="237.8" r="3" fill="#2b85d0"/><circle cx="1116.8" cy="237.8" r="3" fill="#2b85d0"/><circle cx="1122.8" cy="234.5" r="3" fill="#2b85d0"/><circle cx="1128.8" cy="239.5" r="3" fill="#2b85d0"/><circle cx="1134.8" cy="231.7" r="3" fill="#2b85d0"/><circle cx="1140.9" cy="227.8" r="3" fill="#2b85d0"/><circle cx="1146.9" cy="227.8" r="3" fill="#2b85d0"/><circle cx="1152.9" cy="217.2" r="3" fill="#2b85d0"/><circle cx="1159.0" cy="169.9" r="3" fill="#2b85d0"/><circle cx="1165.0" cy="203.3" r="3" fill="#2b85d0"/><circle cx="1171.0" cy="183.8" r="3" fill="#2b85d0"/><circle cx="1177.1" cy="176.0" r="3" fill="#2b85d0"/><circle cx="1183.1" cy="171.6" r="3" fill="#2b85d0"/><circle cx="1189.1" cy="127.6" r="3" fill="#2b85d0"/><circle cx="1195.1" cy="162.1" r="3" fill="#2b85d0"/><circle cx="1201.2" cy="144.8" r="3" fill="#2b85d0"/><circle cx="1207.2" cy="130.9" r="3" fill="#2b85d0"/><circle cx="1213.2" cy="144.8" r="3" fill="#2b85d0"/><circle cx="1219.3" cy="201.6" r="3" fill="#2b85d0"/><circle cx="1225.3" cy="197.7" r="3" fill="#2b85d0"/><circle cx="1231.3" cy="194.4" r="3" fill="#2b85d0"/><circle cx="1237.3" cy="206.7" r="3" fill="#2b85d0"/></svg>
<div class="lbl" style="left:600px;width:43px;text-align:right;top:139.5px">20%</div>
<div class="lbl" style="left:600px;width:43px;text-align:right;top:195.3px">10%</div>
<div class="lbl" style="left:600px;width:43px;text-align:right;top:250.9px">0%</div>
<div class="lbl" style="left:1253px;top:113.9px">30 B</div>
<div class="lbl" style="left:1253px;top:159.5px">20 B</div>
<div class="lbl" style="left:1253px;top:205.0px">10 B</div>
<div class="lbl" style="left:1253px;top:250.2px">0 B</div>
<div class="lbl" style="left:658.3px;width:60px;text-align:center;top:270px">16:00</div>
<div class="lbl" style="left:706.5px;width:60px;text-align:center;top:270px">18:00</div>
<div class="lbl" style="left:754.8px;width:60px;text-align:center;top:270px">20:00</div>
<div class="lbl" style="left:803.0px;width:60px;text-align:center;top:270px">22:00</div>
<div class="lbl" style="left:851.3px;width:60px;text-align:center;top:270px">00:00</div>
<div class="lbl" style="left:899.5px;width:60px;text-align:center;top:270px">02:00</div>
<div class="lbl" style="left:947.8px;width:60px;text-align:center;top:270px">04:00</div>
<div class="lbl" style="left:996.0px;width:60px;text-align:center;top:270px">06:00</div>
<div class="lbl" style="left:1044.3px;width:60px;text-align:center;top:270px">08:00</div>
<div class="lbl" style="left:1092.5px;width:60px;text-align:center;top:270px">10:00</div>
<div class="lbl" style="left:1140.8px;width:60px;text-align:center;top:270px">12:00</div>
<div class="lbl" style="left:1189.0px;width:60px;text-align:center;top:270px">14:00</div>
<div class="abs" style="left:633px;top:302px;width:14px;height:4px;border-radius:1px;background:#e0533f"></div>
<div class="lbl" style="left:655px;top:297px">cpu</div>
<div class="abs" style="left:1203px;top:302px;width:14px;height:4px;border-radius:1px;background:#1f78c1"></div>
<div class="lbl" style="left:1225px;top:297px">memory</div>
<svg style="left:0;top:0" width="1920" height="1080"><rect x="1349.0" y="104.7" width="10" height="33" rx="2" fill="#dd4a5a"/><rect x="1361.0" y="104.7" width="10" height="33" rx="2" fill="#dd5156"/><rect x="1373.1" y="104.7" width="10" height="33" rx="2" fill="#de5953"/><rect x="1385.1" y="104.7" width="10" height="33" rx="2" fill="#de614f"/><rect x="1397.1" y="104.7" width="10" height="33" rx="2" fill="#df694c"/><rect x="1409.2" y="104.7" width="10" height="33" rx="2" fill="#e07149"/><rect x="1421.2" y="104.7" width="10" height="33" rx="2" fill="#e07749"/><rect x="1433.2" y="104.7" width="10" height="33" rx="2" fill="#e17e49"/><rect x="1445.2" y="104.7" width="10" height="33" rx="2" fill="#e18448"/><rect x="1457.3" y="104.7" width="10" height="33" rx="2" fill="#e28a48"/><rect x="1469.3" y="104.7" width="10" height="33" rx="2" fill="#e29048"/><rect x="1481.3" y="104.7" width="10" height="33" rx="2" fill="#e19748"/><rect x="1493.4" y="104.7" width="10" height="33" rx="2" fill="#e09e48"/><rect x="1505.4" y="104.7" width="10" height="33" rx="2" fill="#dfa549"/><rect x="1517.4" y="104.7" width="10" height="33" rx="2" fill="#ddab49"/><rect x="1529.5" y="104.7" width="10" height="33" rx="2" fill="#dcb149"/><rect x="1541.5" y="104.7" width="10" height="33" rx="2" fill="#dbb449"/><rect x="1553.5" y="104.7" width="10" height="33" rx="2" fill="#d9b848"/><rect x="1565.5" y="104.7" width="10" height="33" rx="2" fill="#d8bb48"/><rect x="1577.6" y="104.7" width="10" height="33" rx="2" fill="#d4be48"/><rect x="1589.6" y="104.7" width="10" height="33" rx="2" fill="#cfbf49"/><rect x="1601.6" y="104.7" width="10" height="33" rx="2" fill="#cac149"/><rect x="1613.7" y="104.7" width="10" height="33" rx="2" fill="#c1c24c"/><rect x="1625.7" y="104.7" width="10" height="33" rx="2" fill="#b5c350"/><rect x="1637.7" y="104.7" width="10" height="33" rx="2" fill="#a9c355"/><rect x="1649.8" y="104.7" width="10" height="33" rx="2" fill="#a2c357"/><rect x="1661.8" y="104.7" width="10" height="33" rx="2" fill="#343d2b"/><rect x="1673.8" y="104.7" width="10" height="33" rx="2" fill="#333d2b"/><rect x="1685.8" y="104.7" width="10" height="33" rx="2" fill="#323c2c"/><rect x="1697.9" y="104.7" width="10" height="33" rx="2" fill="#303c2c"/><rect x="1709.9" y="104.7" width="10" height="33" rx="2" fill="#2f3c2c"/><rect x="1721.9" y="104.7" width="10" height="33" rx="2" fill="#2f3c2d"/><rect x="1734.0" y="104.7" width="10" height="33" rx="2" fill="#2e3c2d"/><rect x="1746.0" y="104.7" width="10" height="33" rx="2" fill="#2d3c2e"/><rect x="1758.0" y="104.7" width="10" height="33" rx="2" fill="#2c3c2e"/><rect x="1349.0" y="139.7" width="10" height="33" rx="2" fill="#dd4a5a"/><rect x="1361.0" y="139.7" width="10" height="33" rx="2" fill="#dd5156"/><rect x="1373.1" y="139.7" width="10" height="33" rx="2" fill="#de5953"/><rect x="1385.1" y="139.7" width="10" height="33" rx="2" fill="#de614f"/><rect x="1397.1" y="139.7" width="10" height="33" rx="2" fill="#df694c"/><rect x="1409.2" y="139.7" width="10" height="33" rx="2" fill="#e07149"/><rect x="1421.2" y="139.7" width="10" height="33" rx="2" fill="#e07749"/><rect x="1433.2" y="139.7" width="10" height="33" rx="2" fill="#e17e49"/><rect x="1445.2" y="139.7" width="10" height="33" rx="2" fill="#e18448"/><rect x="1457.3" y="139.7" width="10" height="33" rx="2" fill="#e28a48"/><rect x="1469.3" y="139.7" width="10" height="33" rx="2" fill="#e29048"/><rect x="1481.3" y="139.7" width="10" height="33" rx="2" fill="#e19748"/><rect x="1493.4" y="139.7" width="10" height="33" rx="2" fill="#e09e48"/><rect x="1505.4" y="139.7" width="10" height="33" rx="2" fill="#dfa549"/><rect x="1517.4" y="139.7" width="10" height="33" rx="2" fill="#ddab49"/><rect x="1529.5" y="139.7" width="10" height="33" rx="2" fill="#dcb149"/><rect x="1541.5" y="139.7" width="10" height="33" rx="2" fill="#dbb449"/><rect x="1553.5" y="139.7" width="10" height="33" rx="2" fill="#d9b848"/><rect x="1565.5" y="139.7" width="10" height="33" rx="2" fill="#d8bb48"/><rect x="1577.6" y="139.7" width="10" height="33" rx="2" fill="#d4be48"/><rect x="1589.6" y="139.7" width="10" height="33" rx="2" fill="#cfbf49"/><rect x="1601.6" y="139.7" width="10" height="33" rx="2" fill="#cac149"/><rect x="1613.7" y="139.7" width="10" height="33" rx="2" fill="#c1c24c"/><rect x="1625.7" y="139.7" width="10" height="33" rx="2" fill="#b5c350"/><rect x="1637.7" y="139.7" width="10" height="33" rx="2" fill="#a9c355"/><rect x="1649.8" y="139.7" width="10" height="33" rx="2" fill="#a2c357"/><rect x="1661.8" y="139.7" width="10" height="33" rx="2" fill="#343d2b"/><rect x="1673.8" y="139.7" width="10" height="33" rx="2" fill="#333d2b"/><rect x="1685.8" y="139.7" width="10" height="33" rx="2" fill="#323c2c"/><rect x="1697.9" y="139.7" width="10" height="33" rx="2" fill="#303c2c"/><rect x="1709.9" y="139.7" width="10" height="33" rx="2" fill="#2f3c2c"/><rect x="1721.9" y="139.7" width="10" height="33" rx="2" fill="#2f3c2d"/><rect x="1734.0" y="139.7" width="10" height="33" rx="2" fill="#2e3c2d"/><rect x="1746.0" y="139.7" width="10" height="33" rx="2" fill="#2d3c2e"/><rect x="1758.0" y="139.7" width="10" height="33" rx="2" fill="#2c3c2e"/><rect x="1349.0" y="174.7" width="10" height="33" rx="2" fill="#dd4a5a"/><rect x="1361.0" y="174.7" width="10" height="33" rx="2" fill="#dd5156"/><rect x="1373.1" y="174.7" width="10" height="33" rx="2" fill="#de5953"/><rect x="1385.1" y="174.7" width="10" height="33" rx="2" fill="#de614f"/><rect x="1397.1" y="174.7" width="10" height="33" rx="2" fill="#df694c"/><rect x="1409.2" y="174.7" width="10" height="33" rx="2" fill="#e07149"/><rect x="1421.2" y="174.7" width="10" height="33" rx="2" fill="#e07749"/><rect x="1433.2" y="174.7" width="10" height="33" rx="2" fill="#e17e49"/><rect x="1445.2" y="174.7" width="10" height="33" rx="2" fill="#e18448"/><rect x="1457.3" y="174.7" width="10" height="33" rx="2" fill="#e28a48"/><rect x="1469.3" y="174.7" width="10" height="33" rx="2" fill="#e29048"/><rect x="1481.3" y="174.7" width="10" height="33" rx="2" fill="#e19748"/><rect x="1493.4" y="174.7" width="10" height="33" rx="2" fill="#e09e48"/><rect x="1505.4" y="174.7" width="10" height="33" rx="2" fill="#dfa549"/><rect x="1517.4" y="174.7" width="10" height="33" rx="2" fill="#413828"/><rect x="1529.5" y="174.7" width="10" height="33" rx="2" fill="#413928"/><rect x="1541.5" y="174.7" width="10" height="33" rx="2" fill="#413a28"/><rect x="1553.5" y="174.7" width="10" height="33" rx="2" fill="#413b28"/><rect x="1565.5" y="174.7" width="10" height="33" rx="2" fill="#403b28"/><rect x="1577.6" y="174.7" width="10" height="33" rx="2" fill="#403c28"/><rect x="1589.6" y="174.7" width="10" height="33" rx="2" fill="#3f3c28"/><rect x="1601.6" y="174.7" width="10" height="33" rx="2" fill="#3e3d28"/><rect x="1613.7" y="174.7" width="10" height="33" rx="2" fill="#3c3d28"/><rect x="1625.7" y="174.7" width="10" height="33" rx="2" fill="#393d29"/><rect x="1637.7" y="174.7" width="10" height="33" rx="2" fill="#373d2a"/><rect x="1649.8" y="174.7" width="10" height="33" rx="2" fill="#363d2b"/><rect x="1661.8" y="174.7" width="10" height="33" rx="2" fill="#343d2b"/><rect x="1673.8" y="174.7" width="10" height="33" rx="2" fill="#333d2b"/><rect x="1685.8" y="174.7" width="10" height="33" rx="2" fill="#323c2c"/><rect x="1697.9" y="174.7" width="10" height="33" rx="2" fill="#303c2c"/><rect x="1709.9" y="174.7" width="10" height="33" rx="2" fill="#2f3c2c"/><rect x="1721.9" y="174.7" width="10" height="33" rx="2" fill="#2f3c2d"/><rect x="1734.0" y="174.7" width="10" height="33" rx="2" fill="#2e3c2d"/><rect x="1746.0" y="174.7" width="10" height="33" rx="2" fill="#2d3c2e"/><rect x="1758.0" y="174.7" width="10" height="33" rx="2" fill="#2c3c2e"/><rect x="1349.0" y="209.7" width="10" height="33" rx="2" fill="#dd4a5a"/><rect x="1361.0" y="209.7" width="10" height="33" rx="2" fill="#dd5156"/><rect x="1373.1" y="209.7" width="10" height="33" rx="2" fill="#de5953"/><rect x="1385.1" y="209.7" width="10" height="33" rx="2" fill="#de614f"/><rect x="1397.1" y="209.7" width="10" height="33" rx="2" fill="#df694c"/><rect x="1409.2" y="209.7" width="10" height="33" rx="2" fill="#e07149"/><rect x="1421.2" y="209.7" width="10" height="33" rx="2" fill="#e07749"/><rect x="1433.2" y="209.7" width="10" height="33" rx="2" fill="#e17e49"/><rect x="1445.2" y="209.7" width="10" height="33" rx="2" fill="#e18448"/><rect x="1457.3" y="209.7" width="10" height="33" rx="2" fill="#e28a48"/><rect x="1469.3" y="209.7" width="10" height="33" rx="2" fill="#e29048"/><rect x="1481.3" y="209.7" width="10" height="33" rx="2" fill="#e19748"/><rect x="1493.4" y="209.7" width="10" height="33" rx="2" fill="#e09e48"/><rect x="1505.4" y="209.7" width="10" height="33" rx="2" fill="#dfa549"/><rect x="1517.4" y="209.7" width="10" height="33" rx="2" fill="#ddab49"/><rect x="1529.5" y="209.7" width="10" height="33" rx="2" fill="#dcb149"/><rect x="1541.5" y="209.7" width="10" height="33" rx="2" fill="#dbb449"/><rect x="1553.5" y="209.7" width="10" height="33" rx="2" fill="#d9b848"/><rect x="1565.5" y="209.7" width="10" height="33" rx="2" fill="#d8bb48"/><rect x="1577.6" y="209.7" width="10" height="33" rx="2" fill="#d4be48"/><rect x="1589.6" y="209.7" width="10" height="33" rx="2" fill="#cfbf49"/><rect x="1601.6" y="209.7" width="10" height="33" rx="2" fill="#cac149"/><rect x="1613.7" y="209.7" width="10" height="33" rx="2" fill="#c1c24c"/><rect x="1625.7" y="209.7" width="10" height="33" rx="2" fill="#b5c350"/><rect x="1637.7" y="209.7" width="10" height="33" rx="2" fill="#a9c355"/><rect x="1649.8" y="209.7" width="10" height="33" rx="2" fill="#a2c357"/><rect x="1661.8" y="209.7" width="10" height="33" rx="2" fill="#9bc259"/><rect x="1673.8" y="209.7" width="10" height="33" rx="2" fill="#94c15a"/><rect x="1685.8" y="209.7" width="10" height="33" rx="2" fill="#8ec05c"/><rect x="1697.9" y="209.7" width="10" height="33" rx="2" fill="#303c2c"/><rect x="1709.9" y="209.7" width="10" height="33" rx="2" fill="#2f3c2c"/><rect x="1721.9" y="209.7" width="10" height="33" rx="2" fill="#2f3c2d"/><rect x="1734.0" y="209.7" width="10" height="33" rx="2" fill="#2e3c2d"/><rect x="1746.0" y="209.7" width="10" height="33" rx="2" fill="#2d3c2e"/><rect x="1758.0" y="209.7" width="10" height="33" rx="2" fill="#2c3c2e"/><rect x="1349.0" y="244.7" width="10" height="33" rx="2" fill="#dd4a5a"/><rect x="1361.0" y="244.7" width="10" height="33" rx="2" fill="#dd5156"/><rect x="1373.1" y="244.7" width="10" height="33" rx="2" fill="#de5953"/><rect x="1385.1" y="244.7" width="10" height="33" rx="2" fill="#de614f"/><rect x="1397.1" y="244.7" width="10" height="33" rx="2" fill="#df694c"/><rect x="1409.2" y="244.7" width="10" height="33" rx="2" fill="#e07149"/><rect x="1421.2" y="244.7" width="10" height="33" rx="2" fill="#e07749"/><rect x="1433.2" y="244.7" width="10" height="33" rx="2" fill="#e17e49"/><rect x="1445.2" y="244.7" width="10" height="33" rx="2" fill="#e18448"/><rect x="1457.3" y="244.7" width="10" height="33" rx="2" fill="#e28a48"/><rect x="1469.3" y="244.7" width="10" height="33" rx="2" fill="#e29048"/><rect x="1481.3" y="244.7" width="10" height="33" rx="2" fill="#e19748"/><rect x="1493.4" y="244.7" width="10" height="33" rx="2" fill="#e09e48"/><rect x="1505.4" y="244.7" width="10" height="33" rx="2" fill="#dfa549"/><rect x="1517.4" y="244.7" width="10" height="33" rx="2" fill="#ddab49"/><rect x="1529.5" y="244.7" width="10" height="33" rx="2" fill="#dcb149"/><rect x="1541.5" y="244.7" width="10" height="33" rx="2" fill="#413a28"/><rect x="1553.5" y="244.7" width="10" height="33" rx="2" fill="#413b28"/><rect x="1565.5" y="244.7" width="10" height="33" rx="2" fill="#403b28"/><rect x="1577.6" y="244.7" width="10" height="33" rx="2" fill="#403c28"/><rect x="1589.6" y="244.7" width="10" height="33" rx="2" fill="#3f3c28"/><rect x="1601.6" y="244.7" width="10" height="33" rx="2" fill="#3e3d28"/><rect x="1613.7" y="244.7" width="10" height="33" rx="2" fill="#3c3d28"/><rect x="1625.7" y="244.7" width="10" height="33" rx="2" fill="#393d29"/><rect x="1637.7" y="244.7" width="10" height="33" rx="2" fill="#373d2a"/><rect x="1649.8" y="244.7" width="10" height="33" rx="2" fill="#363d2b"/><rect x="1661.8" y="244.7" width="10" height="33" rx="2" fill="#343d2b"/><rect x="1673.8" y="244.7" width="10" height="33" rx="2" fill="#333d2b"/><rect x="1685.8" y="244.7" width="10" height="33" rx="2" fill="#323c2c"/><rect x="1697.9" y="244.7" width="10" height="33" rx="2" fill="#303c2c"/><rect x="1709.9" y="244.7" width="10" height="33" rx="2" fill="#2f3c2c"/><rect x="1721.9" y="244.7" width="10" height="33" rx="2" fill="#2f3c2d"/><rect x="1734.0" y="244.7" width="10" height="33" rx="2" fill="#2e3c2d"/><rect x="1746.0" y="244.7" width="10" height="33" rx="2" fill="#2d3c2e"/><rect x="1758.0" y="244.7" width="10" height="33" rx="2" fill="#2c3c2e"/><rect x="1349.0" y="279.7" width="10" height="33" rx="2" fill="#dd4a5a"/><rect x="1361.0" y="279.7" width="10" height="33" rx="2" fill="#dd5156"/><rect x="1373.1" y="279.7" width="10" height="33" rx="2" fill="#de5953"/><rect x="1385.1" y="279.7" width="10" height="33" rx="2" fill="#de614f"/><rect x="1397.1" y="279.7" width="10" height="33" rx="2" fill="#df694c"/><rect x="1409.2" y="279.7" width="10" height="33" rx="2" fill="#e07149"/><rect x="1421.2" y="279.7" width="10" height="33" rx="2" fill="#e07749"/><rect x="1433.2" y="279.7" width="10" height="33" rx="2" fill="#e17e49"/><rect x="1445.2" y="279.7" width="10" height="33" rx="2" fill="#e18448"/><rect x="1457.3" y="279.7" width="10" height="33" rx="2" fill="#e28a48"/><rect x="1469.3" y="279.7" width="10" height="33" rx="2" fill="#e29048"/><rect x="1481.3" y="279.7" width="10" height="33" rx="2" fill="#e19748"/><rect x="1493.4" y="279.7" width="10" height="33" rx="2" fill="#e09e48"/><rect x="1505.4" y="279.7" width="10" height="33" rx="2" fill="#dfa549"/><rect x="1517.4" y="279.7" width="10" height="33" rx="2" fill="#ddab49"/><rect x="1529.5" y="279.7" width="10" height="33" rx="2" fill="#dcb149"/><rect x="1541.5" y="279.7" width="10" height="33" rx="2" fill="#dbb449"/><rect x="1553.5" y="279.7" width="10" height="33" rx="2" fill="#d9b848"/><rect x="1565.5" y="279.7" width="10" height="33" rx="2" fill="#d8bb48"/><rect x="1577.6" y="279.7" width="10" height="33" rx="2" fill="#d4be48"/><rect x="1589.6" y="279.7" width="10" height="33" rx="2" fill="#3f3c28"/><rect x="1601.6" y="279.7" width="10" height="33" rx="2" fill="#3e3d28"/><rect x="1613.7" y="279.7" width="10" height="33" rx="2" fill="#3c3d28"/><rect x="1625.7" y="279.7" width="10" height="33" rx="2" fill="#393d29"/><rect x="1637.7" y="279.7" width="10" height="33" rx="2" fill="#373d2a"/><rect x="1649.8" y="279.7" width="10" height="33" rx="2" fill="#363d2b"/><rect x="1661.8" y="279.7" width="10" height="33" rx="2" fill="#343d2b"/><rect x="1673.8" y="279.7" width="10" height="33" rx="2" fill="#333d2b"/><rect x="1685.8" y="279.7" width="10" height="33" rx="2" fill="#323c2c"/><rect x="1697.9" y="279.7" width="10" height="33" rx="2" fill="#303c2c"/><rect x="1709.9" y="279.7" width="10" height="33" rx="2" fill="#2f3c2c"/><rect x="1721.9" y="279.7" width="10" height="33" rx="2" fill="#2f3c2d"/><rect x="1734.0" y="279.7" width="10" height="33" rx="2" fill="#2e3c2d"/><rect x="1746.0" y="279.7" width="10" height="33" rx="2" fill="#2d3c2e"/><rect x="1758.0" y="279.7" width="10" height="33" rx="2" fill="#2c3c2e"/></svg>
<div class="abs" style="left:1309px;top:113.7px;font-size:13px;line-height:16px;color:#ccccdc">sda1</div>
<div class="abs" style="left:1701px;width:146px;text-align:right;top:106.7px;font-size:25px;line-height:30px;white-space:nowrap;color:#b7d07b">73.1</div>
<div class="abs" style="left:1826px;width:50px;text-align:right;top:116.2px;font-size:16px;line-height:20px;white-space:nowrap;color:#b7d07b">GB</div>
<div class="abs" style="left:1309px;top:148.7px;font-size:13px;line-height:16px;color:#ccccdc">sda2</div>
<div class="abs" style="left:1701px;width:146px;text-align:right;top:141.7px;font-size:25px;line-height:30px;white-space:nowrap;color:#b9d07b">71.8</div>
<div class="abs" style="left:1826px;width:50px;text-align:right;top:151.2px;font-size:16px;line-height:20px;white-space:nowrap;color:#b9d07b">GB</div>
<div class="abs" style="left:1309px;top:183.7px;font-size:13px;line-height:16px;color:#ccccdc">sda3</div>
<div class="abs" style="left:1701px;width:146px;text-align:right;top:176.7px;font-size:25px;line-height:30px;white-space:nowrap;color:#e6b871">38.1</div>
<div class="abs" style="left:1826px;width:50px;text-align:right;top:186.2px;font-size:16px;line-height:20px;white-space:nowrap;color:#e6b871">GB</div>
<div class="abs" style="left:1309px;top:218.7px;font-size:13px;line-height:16px;color:#ccccdc">sda5</div>
<div class="abs" style="left:1701px;width:146px;text-align:right;top:211.7px;font-size:25px;line-height:30px;white-space:nowrap;color:#a8ce7f">81.1</div>
<div class="abs" style="left:1826px;width:50px;text-align:right;top:221.2px;font-size:16px;line-height:20px;white-space:nowrap;color:#a8ce7f">GB</div>
<div class="abs" style="left:1309px;top:253.7px;font-size:13px;line-height:16px;color:#ccccdc">sda6</div>
<div class="abs" style="left:1701px;width:146px;text-align:right;top:246.7px;font-size:25px;line-height:30px;white-space:nowrap;color:#e2c371">45.7</div>
<div class="abs" style="left:1826px;width:50px;text-align:right;top:256.2px;font-size:16px;line-height:20px;white-space:nowrap;color:#e2c371">GB</div>
<div class="abs" style="left:1309px;top:288.7px;font-size:13px;line-height:16px;color:#ccccdc">sda7</div>
<div class="abs" style="left:1701px;width:146px;text-align:right;top:281.7px;font-size:25px;line-height:30px;white-space:nowrap;color:#dbcc70">57.0</div>
<div class="abs" style="left:1826px;width:50px;text-align:right;top:291.2px;font-size:16px;line-height:20px;white-space:nowrap;color:#dbcc70">GB</div>
<svg style="left:0;top:0" width="1920" height="1080"><path d="M1332.34,476.63 A72,72 0 1 1 1467.66,476.63 L1449.24,469.92 A52.4,52.4 0 1 0 1350.76,469.92 Z" fill="#22252b"/><path d="M1332.34,476.63 A72,72 0 1 1 1469.41,432.86 L1450.51,438.07 A52.4,52.4 0 1 0 1350.76,469.92 Z" fill="#a1cd5e"/><path d="M1530.34,476.63 A72,72 0 1 1 1665.66,476.63 L1647.24,469.92 A52.4,52.4 0 1 0 1548.76,469.92 Z" fill="#22252b"/><path d="M1728.34,476.63 A72,72 0 1 1 1863.66,476.63 L1845.24,469.92 A52.4,52.4 0 1 0 1746.76,469.92 Z" fill="#22252b"/><path d="M1728.34,476.63 A72,72 0 1 1 1863.66,476.63 L1845.24,469.92 A52.4,52.4 0 1 0 1746.76,469.92 Z" fill="#73bf69"/><path d="M1332.34,622.63 A72,72 0 1 1 1467.66,622.63 L1449.24,615.92 A52.4,52.4 0 1 0 1350.76,615.92 Z" fill="#22252b"/><path d="M1332.34,622.63 A72,72 0 0 1 1461.55,560.64 L1444.79,570.81 A52.4,52.4 0 0 0 1350.76,615.92 Z" fill="#b3cf58"/><path d="M1530.34,622.63 A72,72 0 1 1 1665.66,622.63 L1647.24,615.92 A52.4,52.4 0 1 0 1548.76,615.92 Z" fill="#22252b"/><path d="M1530.34,622.63 A72,72 0 0 1 1620.30,529.54 L1614.23,548.18 A52.4,52.4 0 0 0 1548.76,615.92 Z" fill="#e2c54a"/><path d="M1728.34,622.63 A72,72 0 1 1 1863.66,622.63 L1845.24,615.92 A52.4,52.4 0 1 0 1746.76,615.92 Z" fill="#22252b"/><path d="M1728.34,622.63 A72,72 0 0 1 1835.21,537.62 L1824.54,554.05 A52.4,52.4 0 0 0 1746.76,615.92 Z" fill="#d3cd4a"/></svg>
<div class="abs" style="left:1320px;width:160px;text-align:center;top:445px;font-size:20px;line-height:22px;color:#a1cd5e;-webkit-text-stroke:0.3px #a1cd5e">83.9 GB</div>
<div class="abs" style="left:1320px;width:160px;text-align:center;top:479px;font-size:18px;line-height:22px;color:#ccccdc">sda1</div>
<div class="abs" style="left:1518px;width:160px;text-align:center;top:445px;font-size:20px;line-height:22px;color:#f2495c;-webkit-text-stroke:0.3px #f2495c">-2.2 GB</div>
<div class="abs" style="left:1518px;width:160px;text-align:center;top:479px;font-size:18px;line-height:22px;color:#ccccdc">sda2</div>
<div class="abs" style="left:1716px;width:160px;text-align:center;top:445px;font-size:20px;line-height:22px;color:#73bf69;-webkit-text-stroke:0.3px #73bf69">102 GB</div>
<div class="abs" style="left:1716px;width:160px;text-align:center;top:479px;font-size:18px;line-height:22px;color:#ccccdc">sda3</div>
<div class="abs" style="left:1320px;width:160px;text-align:center;top:591px;font-size:20px;line-height:22px;color:#b3cf58;-webkit-text-stroke:0.3px #b3cf58">76.7 GB</div>
<div class="abs" style="left:1320px;width:160px;text-align:center;top:625px;font-size:18px;line-height:22px;color:#ccccdc">sda5</div>
<div class="abs" style="left:1518px;width:160px;text-align:center;top:591px;font-size:20px;line-height:22px;color:#e2c54a;-webkit-text-stroke:0.3px #e2c54a">58.2 GB</div>
<div class="abs" style="left:1518px;width:160px;text-align:center;top:625px;font-size:18px;line-height:22px;color:#ccccdc">sda6</div>
<div class="abs" style="left:1716px;width:160px;text-align:center;top:591px;font-size:20px;line-height:22px;color:#d3cd4a;-webkit-text-stroke:0.3px #d3cd4a">65.0 GB</div>
<div class="abs" style="left:1716px;width:160px;text-align:center;top:625px;font-size:18px;line-height:22px;color:#ccccdc">sda7</div>
<svg style="left:0;top:0" width="1920" height="1080"><polygon points="122,621 122.0,471.3 124.2,447.9 126.4,458.7 128.6,456.5 130.8,467.7 133.0,477.0 135.2,453.6 137.4,462.5 139.6,465.7 141.8,443.0 144.0,449.9 146.2,453.1 148.4,447.0 150.6,451.6 152.8,454.4 155.0,440.2 157.2,442.1 159.4,428.0 161.6,439.7 163.8,418.3 166.0,449.1 168.2,466.5 170.4,464.5 172.6,447.2 174.8,429.0 177.0,438.8 179.2,439.4 181.4,448.5 183.6,440.8 185.8,450.4 188.0,477.0 190.2,474.6 192.4,484.7 194.6,463.0 196.8,458.1 199.0,432.6 201.2,423.2 203.4,440.1 205.6,429.5 207.8,430.2 210.0,427.7 212.2,431.2 214.4,425.5 216.6,426.0 218.8,431.3 221.0,440.9 223.2,447.1 225.4,464.6 227.6,456.0 229.8,474.5 232.0,477.7 234.2,456.4 236.4,445.0 238.6,405.2 240.8,424.8 243.0,432.0 245.2,420.4 247.4,426.7 249.6,422.1 251.8,423.4 254.0,415.4 256.2,404.1 258.4,413.3 260.6,406.3 262.8,432.9 265.0,463.4 267.2,476.7 269.4,470.5 271.6,462.1 273.8,443.1 276.0,445.5 278.2,430.6 280.4,426.9 282.6,446.9 284.8,439.2 287.0,440.5 289.2,431.8 291.4,430.3 293.6,438.0 295.8,439.7 298.0,451.9 300.2,457.3 302.4,475.4 304.6,482.6 306.8,481.8 309.0,477.2 311.2,462.4 313.4,453.8 315.6,435.4 317.8,436.3 320.0,434.0 322.2,447.1 324.4,446.6 326.6,461.3 328.8,446.3 331.0,438.4 333.2,434.3 335.4,447.8 337.6,416.7 339.8,429.3 342.0,425.8 344.2,445.1 346.4,447.5 348.6,457.7 350.8,457.3 353.0,460.7 355.2,457.4 357.4,454.9 359.6,476.5 361.8,465.0 364.0,454.9 366.2,455.0 368.4,461.3 370.6,450.5 372.8,447.1 375.0,458.1 377.2,471.2 379.4,472.3 381.6,490.6 383.8,483.9 386.0,478.2 388.2,462.6 390.4,423.0 392.6,449.3 394.8,448.3 397.0,431.6 399.2,441.2 401.4,440.6 403.6,449.0 405.8,465.0 408.0,450.5 410.2,455.0 412.4,440.3 414.6,434.6 416.8,449.8 419.0,435.9 421.2,432.1 423.4,437.6 425.6,428.0 427.8,427.7 430.0,436.8 432.2,433.5 434.4,426.6 436.6,438.0 438.8,435.8 441.0,433.2 443.2,445.4 445.4,428.3 447.6,433.8 449.8,432.8 452.0,430.8 454.2,417.6 456.4,438.5 458.6,438.1 460.8,433.3 463.0,431.2 465.2,447.3 467.4,427.8 469.6,434.6 471.8,433.5 474.0,439.1 476.2,453.7 478.4,442.6 480.6,426.0 482.8,438.0 485.0,435.4 487.2,426.4 489.4,421.0 491.6,444.8 493.8,461.5 496.0,476.9 498.2,472.7 500.4,460.6 502.6,463.2 504.8,452.1 507.0,455.9 509.2,592.6 511.4,591.5 513.6,590.4 515.8,590.9 518.0,593.5 520.2,591.6 522.4,593.3 524.6,590.9 526.8,591.8 529.0,591.6 531.2,589.0 533.4,595.3 535.6,590.5 537.8,589.1 540.0,591.2 542.2,592.1 544.4,592.9 546.6,588.2 548.8,594.0 551.0,591.8 553.2,591.5 555.4,593.1 557.6,590.0 559.8,594.5 562.0,592.4 564.2,593.3 566.4,594.8 568.6,592.6 570.8,591.5 573.0,592.3 575.2,594.4 577.4,593.0 579.6,595.8 581.8,592.2 584.0,592.9 586.2,589.9 588.4,594.2 590.6,591.8 592.8,588.6 595.0,589.1 597.2,594.4 599.4,592.7 601.6,592.7 603.8,593.1 606.0,590.7 608.2,590.4 610.4,594.7 612.6,593.1 614.8,591.5 617.0,591.5 619.2,594.5 621.4,581.8 623.6,573.6 625.8,592.0 628.0,592.5 630.2,590.5 632.4,594.3 634.6,593.1 636.8,592.0 639.0,590.2 641.2,591.0 643.4,590.2 645.6,590.9 647.8,593.1 650.0,593.7 652.2,589.2 654.4,594.8 656.6,592.3 658.8,589.3 661.0,591.2 663.2,591.5 665.4,592.5 667.6,594.9 669.8,598.9 672.0,599.8 674.2,597.8 676.4,595.5 678.6,594.1 680.8,588.9 683.0,594.0 685.2,587.4 687.4,592.5 689.6,593.2 691.8,588.6 694.0,592.2 696.2,593.8 698.4,593.7 700.6,592.9 702.8,595.1 705.0,599.7 707.2,602.9 709.4,596.8 711.6,593.5 713.8,593.1 716.0,593.0 718.2,590.6 720.4,593.9 722.6,594.6 724.8,591.7 727.0,589.9 729.2,592.3 731.4,589.6 733.6,592.4 735.8,590.1 738.0,592.6 740.2,593.3 742.4,592.0 744.6,590.2 746.8,595.6 749.0,592.8 751.2,589.2 753.4,593.3 755.6,592.8 757.8,591.5 760.0,590.1 762.2,592.4 764.4,593.4 766.6,592.3 768.8,594.0 771.0,593.9 773.2,595.8 775.4,594.2 777.6,592.1 779.8,589.6 782.0,586.9 784.2,588.1 786.4,591.9 788.6,593.5 790.8,591.0 793.0,588.7 795.2,594.7 797.4,589.5 799.6,588.6 801.8,591.5 804.0,591.2 806.2,590.3 808.4,589.4 810.6,593.2 812.8,592.1 815.0,596.3 817.2,595.9 819.4,593.9 821.6,597.8 823.8,594.7 826.0,592.2 828.2,596.8 830.4,592.0 832.6,594.0 834.8,589.4 837.0,592.8 839.2,592.7 841.4,588.4 843.6,593.2 845.8,593.2 848.0,597.7 850.2,599.9 852.4,597.6 854.6,594.1 856.8,593.4 859.0,594.3 861.2,590.7 863.4,588.2 865.6,467.6 867.8,452.1 870.0,455.6 872.2,453.8 874.4,438.0 876.6,453.3 878.8,443.2 881.0,439.6 883.2,454.6 885.4,447.2 887.6,461.4 889.8,468.4 892.0,453.1 894.2,474.2 896.4,474.5 898.6,481.7 900.8,465.0 903.0,442.6 905.2,429.3 907.4,444.6 909.6,439.1 911.8,440.1 914.0,438.8 916.2,453.9 918.4,452.9 920.6,448.7 922.8,457.8 925.0,451.3 927.2,448.9 929.4,446.4 931.6,439.4 933.8,446.9 936.0,468.8 938.2,442.6 940.4,439.1 942.6,429.0 944.8,429.0 947.0,422.8 949.2,422.2 951.4,430.9 953.6,439.6 955.8,417.2 958.0,427.8 960.2,443.5 962.4,430.0 964.6,428.6 966.8,431.5 969.0,435.4 971.2,422.0 973.4,429.7 975.6,432.5 977.8,427.0 980.0,417.6 982.2,434.3 984.4,432.1 986.6,435.4 988.8,432.1 991.0,452.2 993.2,439.4 995.4,431.9 997.6,440.2 999.8,440.2 1002.0,441.4 1004.2,436.5 1006.4,457.2 1008.6,436.3 1010.8,451.3 1013.0,452.4 1015.2,446.2 1017.4,460.5 1019.6,454.6 1021.8,455.0 1024.0,444.6 1026.2,461.2 1028.4,464.6 1030.6,459.5 1032.8,453.5 1035.0,448.8 1037.2,438.6 1039.4,431.3 1041.6,420.9 1043.8,436.0 1046.0,439.7 1048.2,413.1 1050.4,430.1 1052.6,432.3 1054.8,428.0 1057.0,426.2 1059.2,432.4 1061.4,420.8 1063.6,423.5 1065.8,442.6 1068.0,428.5 1070.2,432.9 1072.4,427.4 1074.6,412.5 1076.8,423.6 1079.0,426.0 1081.2,431.9 1083.4,412.7 1085.6,441.8 1087.8,427.9 1090.0,422.0 1092.2,410.4 1094.4,435.8 1096.6,407.4 1098.8,413.2 1101.0,425.1 1103.2,437.1 1105.4,444.5 1107.6,437.1 1109.8,447.1 1112.0,437.5 1114.2,457.3 1116.4,439.3 1118.6,454.4 1120.8,447.4 1123.0,446.1 1125.2,443.7 1127.4,453.2 1129.6,461.2 1131.8,448.3 1134.0,442.5 1136.2,431.6 1138.4,444.8 1140.6,432.0 1142.8,455.1 1145.0,472.7 1147.2,496.4 1149.4,460.2 1150,621" fill="#6b9766"/><polygon points="122,621 122.0,513.3 124.2,497.9 126.4,504.5 128.6,497.3 130.8,494.2 133.0,498.7 135.2,495.1 137.4,501.3 139.6,510.7 141.8,495.8 144.0,497.5 146.2,504.4 148.4,496.1 150.6,500.4 152.8,501.9 155.0,492.9 157.2,494.1 159.4,495.3 161.6,500.0 163.8,482.3 166.0,499.8 168.2,498.3 170.4,498.3 172.6,491.9 174.8,487.3 177.0,494.3 179.2,496.2 181.4,503.4 183.6,500.2 185.8,500.3 188.0,518.6 190.2,513.1 192.4,516.5 194.6,505.4 196.8,501.4 199.0,485.6 201.2,476.7 203.4,486.6 205.6,485.5 207.8,479.3 210.0,479.9 212.2,481.3 214.4,478.7 216.6,478.4 218.8,481.6 221.0,486.8 223.2,488.7 225.4,499.8 227.6,490.6 229.8,506.4 232.0,511.5 234.2,505.9 236.4,499.2 238.6,486.4 240.8,489.1 243.0,486.3 245.2,481.3 247.4,482.9 249.6,476.7 251.8,481.6 254.0,478.4 256.2,468.1 258.4,468.8 260.6,469.7 262.8,481.8 265.0,487.7 267.2,498.9 269.4,504.0 271.6,503.6 273.8,498.0 276.0,503.4 278.2,499.5 280.4,491.3 282.6,504.1 284.8,494.7 287.0,492.9 289.2,489.8 291.4,479.9 293.6,483.5 295.8,491.4 298.0,496.0 300.2,501.8 302.4,511.9 304.6,520.9 306.8,522.0 309.0,528.6 311.2,511.4 313.4,497.5 315.6,480.8 317.8,481.8 320.0,484.0 322.2,496.8 324.4,494.2 326.6,498.9 328.8,499.8 331.0,492.2 333.2,494.5 335.4,505.3 337.6,485.2 339.8,490.7 342.0,496.7 344.2,502.7 346.4,499.2 348.6,503.6 350.8,505.0 353.0,514.4 355.2,507.8 357.4,504.0 359.6,512.0 361.8,514.5 364.0,507.8 366.2,501.9 368.4,509.2 370.6,502.3 372.8,507.5 375.0,505.4 377.2,508.4 379.4,508.8 381.6,511.2 383.8,501.3 386.0,500.4 388.2,490.9 390.4,476.5 392.6,490.0 394.8,494.4 397.0,478.5 399.2,493.4 401.4,483.3 403.6,495.2 405.8,498.8 408.0,489.9 410.2,497.8 412.4,490.8 414.6,476.2 416.8,498.3 419.0,486.3 421.2,487.3 423.4,489.7 425.6,482.2 427.8,478.5 430.0,481.4 432.2,482.3 434.4,475.4 436.6,489.8 438.8,480.1 441.0,480.1 443.2,483.0 445.4,474.7 447.6,480.6 449.8,482.8 452.0,484.2 454.2,472.0 456.4,482.7 458.6,486.4 460.8,486.1 463.0,485.1 465.2,497.3 467.4,490.3 469.6,490.2 471.8,492.9 474.0,502.0 476.2,511.0 478.4,506.4 480.6,505.4 482.8,510.7 485.0,510.4 487.2,510.3 489.4,512.6 491.6,521.6 493.8,525.9 496.0,530.0 498.2,519.5 500.4,505.1 502.6,513.1 504.8,503.4 507.0,504.1 509.2,600.7 511.4,599.4 513.6,596.7 515.8,598.7 518.0,600.6 520.2,597.5 522.4,601.0 524.6,598.2 526.8,598.3 529.0,599.4 531.2,596.8 533.4,602.0 535.6,598.2 537.8,597.4 540.0,597.8 542.2,599.8 544.4,600.2 546.6,597.7 548.8,599.5 551.0,599.8 553.2,598.5 555.4,600.3 557.6,599.1 559.8,601.7 562.0,601.8 564.2,600.1 566.4,602.4 568.6,599.4 570.8,598.1 573.0,599.7 575.2,601.4 577.4,600.5 579.6,601.1 581.8,601.5 584.0,600.0 586.2,598.9 588.4,600.5 590.6,599.4 592.8,599.0 595.0,595.5 597.2,600.3 599.4,599.5 601.6,600.5 603.8,601.0 606.0,599.3 608.2,597.5 610.4,600.4 612.6,600.0 614.8,600.0 617.0,599.3 619.2,599.8 621.4,592.2 623.6,587.7 625.8,601.8 628.0,600.4 630.2,598.1 632.4,600.4 634.6,599.6 636.8,599.3 639.0,598.0 641.2,598.9 643.4,597.1 645.6,597.1 647.8,599.6 650.0,599.9 652.2,597.1 654.4,599.8 656.6,599.2 658.8,597.0 661.0,600.0 663.2,598.9 665.4,600.2 667.6,600.6 669.8,603.9 672.0,604.2 674.2,604.4 676.4,602.1 678.6,600.8 680.8,598.9 683.0,601.2 685.2,595.3 687.4,600.1 689.6,600.3 691.8,598.1 694.0,600.9 696.2,599.7 698.4,600.6 700.6,600.4 702.8,602.3 705.0,604.1 707.2,606.4 709.4,601.3 711.6,600.6 713.8,600.3 716.0,600.6 718.2,597.2 720.4,600.0 722.6,599.9 724.8,599.3 727.0,597.5 729.2,600.6 731.4,597.7 733.6,599.5 735.8,598.7 738.0,599.8 740.2,599.9 742.4,598.8 744.6,596.9 746.8,600.8 749.0,600.2 751.2,596.7 753.4,600.2 755.6,599.4 757.8,599.2 760.0,599.1 762.2,599.8 764.4,600.2 766.6,599.0 768.8,601.2 771.0,599.9 773.2,603.0 775.4,601.5 777.6,601.2 779.8,597.8 782.0,595.2 784.2,594.7 786.4,599.8 788.6,599.7 790.8,598.6 793.0,596.4 795.2,601.3 797.4,598.7 799.6,596.4 801.8,597.0 804.0,599.1 806.2,597.2 808.4,596.7 810.6,601.0 812.8,599.8 815.0,601.6 817.2,601.7 819.4,600.9 821.6,604.6 823.8,602.5 826.0,600.6 828.2,602.1 830.4,600.0 832.6,599.5 834.8,598.3 837.0,600.3 839.2,598.9 841.4,597.6 843.6,601.2 845.8,598.3 848.0,604.1 850.2,604.3 852.4,603.1 854.6,600.0 856.8,601.9 859.0,600.2 861.2,598.3 863.4,597.2 865.6,500.2 867.8,492.6 870.0,499.7 872.2,497.6 874.4,494.2 876.6,502.8 878.8,491.8 881.0,495.9 883.2,506.7 885.4,499.0 887.6,506.4 889.8,510.5 892.0,501.5 894.2,513.0 896.4,510.3 898.6,509.3 900.8,509.7 903.0,509.6 905.2,493.4 907.4,500.5 909.6,496.6 911.8,494.3 914.0,492.6 916.2,498.2 918.4,495.3 920.6,490.5 922.8,496.9 925.0,496.8 927.2,491.6 929.4,497.7 931.6,495.5 933.8,495.3 936.0,507.1 938.2,492.8 940.4,494.2 942.6,481.7 944.8,490.6 947.0,490.4 949.2,481.5 951.4,488.9 953.6,488.1 955.8,477.1 958.0,475.6 960.2,484.8 962.4,475.2 964.6,478.6 966.8,473.7 969.0,481.6 971.2,468.8 973.4,480.3 975.6,483.6 977.8,476.8 980.0,472.7 982.2,478.2 984.4,478.3 986.6,489.0 988.8,484.5 991.0,496.8 993.2,484.0 995.4,484.2 997.6,487.9 999.8,487.0 1002.0,489.7 1004.2,488.1 1006.4,497.8 1008.6,491.4 1010.8,499.6 1013.0,496.6 1015.2,496.2 1017.4,506.2 1019.6,497.4 1021.8,497.6 1024.0,492.9 1026.2,500.2 1028.4,508.6 1030.6,502.2 1032.8,501.9 1035.0,501.9 1037.2,495.1 1039.4,499.6 1041.6,490.1 1043.8,497.1 1046.0,494.9 1048.2,478.4 1050.4,488.3 1052.6,493.1 1054.8,478.9 1057.0,479.7 1059.2,484.9 1061.4,476.6 1063.6,478.5 1065.8,486.8 1068.0,483.1 1070.2,486.4 1072.4,482.6 1074.6,474.8 1076.8,472.0 1079.0,475.2 1081.2,481.0 1083.4,469.5 1085.6,482.4 1087.8,481.7 1090.0,469.2 1092.2,460.0 1094.4,484.0 1096.6,465.7 1098.8,473.4 1101.0,474.6 1103.2,486.7 1105.4,487.6 1107.6,485.1 1109.8,485.9 1112.0,488.0 1114.2,499.7 1116.4,487.4 1118.6,500.7 1120.8,497.3 1123.0,502.8 1125.2,495.9 1127.4,500.8 1129.6,507.3 1131.8,500.4 1134.0,502.0 1136.2,497.6 1138.4,504.7 1140.6,496.8 1142.8,503.8 1145.0,501.0 1147.2,515.1 1149.4,502.3 1150,621" fill="#437a3d"/><polygon points="122,621 122.0,550.7 124.2,540.6 126.4,543.0 128.6,546.1 130.8,539.8 133.0,544.7 135.2,535.1 137.4,545.0 139.6,545.7 141.8,537.8 144.0,544.3 146.2,545.8 148.4,543.8 150.6,551.0 152.8,551.3 155.0,555.0 157.2,555.2 159.4,560.2 161.6,566.6 163.8,546.3 166.0,540.2 168.2,540.3 170.4,544.1 172.6,539.0 174.8,533.6 177.0,538.0 179.2,534.7 181.4,546.2 183.6,537.2 185.8,539.2 188.0,544.5 190.2,547.6 192.4,573.1 194.6,563.4 196.8,540.1 199.0,531.7 201.2,528.3 203.4,534.4 205.6,534.8 207.8,529.0 210.0,529.9 212.2,529.3 214.4,528.1 216.6,528.2 218.8,528.9 221.0,530.6 223.2,535.4 225.4,540.1 227.6,537.1 229.8,542.9 232.0,541.0 234.2,532.7 236.4,531.8 238.6,524.3 240.8,526.2 243.0,525.3 245.2,524.6 247.4,522.0 249.6,522.3 251.8,524.6 254.0,523.9 256.2,515.3 258.4,516.0 260.6,520.6 262.8,522.7 265.0,529.4 267.2,539.1 269.4,540.2 271.6,546.7 273.8,542.5 276.0,544.8 278.2,540.0 280.4,537.6 282.6,540.1 284.8,539.5 287.0,538.3 289.2,533.6 291.4,530.8 293.6,529.8 295.8,531.5 298.0,531.3 300.2,530.7 302.4,535.0 304.6,536.0 306.8,552.0 309.0,566.7 311.2,540.0 313.4,542.1 315.6,536.1 317.8,537.2 320.0,534.0 322.2,543.6 324.4,541.6 326.6,547.1 328.8,547.8 331.0,543.6 333.2,549.8 335.4,560.2 337.6,557.1 339.8,547.5 342.0,534.7 344.2,536.6 346.4,535.7 348.6,536.6 350.8,539.4 353.0,540.2 355.2,540.2 357.4,541.9 359.6,539.4 361.8,543.9 364.0,534.3 366.2,533.0 368.4,536.8 370.6,536.3 372.8,535.3 375.0,533.6 377.2,536.1 379.4,532.4 381.6,531.5 383.8,521.7 386.0,527.6 388.2,548.7 390.4,551.8 392.6,545.3 394.8,545.6 397.0,536.4 399.2,538.5 401.4,536.1 403.6,540.2 405.8,540.6 408.0,541.9 410.2,543.0 412.4,540.4 414.6,527.1 416.8,537.6 419.0,533.4 421.2,532.9 423.4,533.1 425.6,527.7 427.8,529.8 430.0,532.8 432.2,531.9 434.4,524.4 436.6,533.0 438.8,525.8 441.0,526.7 443.2,527.5 445.4,523.4 447.6,527.3 449.8,526.1 452.0,529.2 454.2,518.7 456.4,527.3 458.6,529.7 460.8,529.7 463.0,527.4 465.2,530.4 467.4,527.6 469.6,525.1 471.8,526.7 474.0,526.3 476.2,535.9 478.4,535.4 480.6,529.6 482.8,531.0 485.0,530.2 487.2,528.8 489.4,528.7 491.6,533.5 493.8,535.8 496.0,534.6 498.2,550.8 500.4,566.5 502.6,556.4 504.8,536.5 507.0,565.1 509.2,608.7 511.4,606.0 513.6,604.7 515.8,605.3 518.0,607.0 520.2,604.9 522.4,608.4 524.6,605.7 526.8,606.5 529.0,606.3 531.2,604.5 533.4,608.6 535.6,606.5 537.8,605.2 540.0,605.5 542.2,607.2 544.4,606.9 546.6,604.8 548.8,607.2 551.0,607.1 553.2,605.9 555.4,606.5 557.6,606.5 559.8,608.5 562.0,608.3 564.2,607.3 566.4,608.2 568.6,607.3 570.8,606.1 573.0,606.9 575.2,607.9 577.4,607.0 579.6,608.3 581.8,606.8 584.0,607.4 586.2,606.8 588.4,607.5 590.6,606.3 592.8,606.4 595.0,603.1 597.2,608.5 599.4,606.8 601.6,607.2 603.8,608.0 606.0,606.7 608.2,606.0 610.4,607.4 612.6,606.4 614.8,606.6 617.0,604.9 619.2,607.4 621.4,600.5 623.6,597.6 625.8,607.8 628.0,606.8 630.2,605.8 632.4,606.6 634.6,605.5 636.8,606.8 639.0,605.0 641.2,606.5 643.4,605.0 645.6,604.4 647.8,605.9 650.0,607.1 652.2,604.8 654.4,606.7 656.6,605.4 658.8,605.2 661.0,607.0 663.2,605.8 665.4,607.1 667.6,608.0 669.8,610.3 672.0,609.8 674.2,610.8 676.4,610.1 678.6,608.5 680.8,606.4 683.0,607.6 685.2,605.6 687.4,606.4 689.6,607.3 691.8,604.9 694.0,609.6 696.2,607.4 698.4,606.7 700.6,607.8 702.8,609.4 705.0,610.0 707.2,611.7 709.4,607.5 711.6,607.4 713.8,607.6 716.0,607.5 718.2,605.1 720.4,606.5 722.6,605.8 724.8,606.0 727.0,605.9 729.2,607.4 731.4,606.9 733.6,607.2 735.8,605.0 738.0,606.4 740.2,607.4 742.4,605.1 744.6,606.1 746.8,607.3 749.0,608.1 751.2,605.2 753.4,607.4 755.6,605.9 757.8,606.2 760.0,606.7 762.2,607.8 764.4,607.6 766.6,605.2 768.8,608.5 771.0,606.7 773.2,608.5 775.4,608.3 777.6,607.4 779.8,605.6 782.0,604.1 784.2,603.5 786.4,606.7 788.6,606.6 790.8,606.4 793.0,604.5 795.2,608.2 797.4,605.9 799.6,605.5 801.8,604.2 804.0,606.0 806.2,604.6 808.4,604.4 810.6,607.5 812.8,606.9 815.0,607.9 817.2,608.5 819.4,608.9 821.6,611.2 823.8,608.8 826.0,606.7 828.2,609.2 830.4,608.2 832.6,606.3 834.8,606.8 837.0,606.5 839.2,606.0 841.4,606.3 843.6,606.8 845.8,606.3 848.0,609.0 850.2,610.2 852.4,609.1 854.6,607.3 856.8,606.6 859.0,605.9 861.2,605.1 863.4,604.5 865.6,542.6 867.8,536.5 870.0,539.8 872.2,539.6 874.4,536.8 876.6,545.6 878.8,537.2 881.0,541.1 883.2,544.5 885.4,539.6 887.6,544.5 889.8,545.1 892.0,534.5 894.2,538.8 896.4,540.0 898.6,525.0 900.8,525.4 903.0,545.4 905.2,552.0 907.4,551.5 909.6,546.9 911.8,536.9 914.0,530.1 916.2,534.6 918.4,537.5 920.6,527.6 922.8,532.8 925.0,535.5 927.2,530.2 929.4,533.4 931.6,533.2 933.8,532.4 936.0,533.3 938.2,532.7 940.4,530.7 942.6,526.0 944.8,527.8 947.0,527.0 949.2,525.1 951.4,528.5 953.6,528.6 955.8,527.1 958.0,524.0 960.2,526.7 962.4,525.1 964.6,527.2 966.8,527.0 969.0,532.7 971.2,527.8 973.4,525.8 975.6,532.5 977.8,526.1 980.0,527.6 982.2,529.6 984.4,529.4 986.6,535.1 988.8,530.1 991.0,534.0 993.2,536.2 995.4,531.8 997.6,532.3 999.8,534.6 1002.0,536.1 1004.2,534.6 1006.4,535.2 1008.6,534.2 1010.8,541.5 1013.0,539.9 1015.2,549.1 1017.4,545.7 1019.6,534.5 1021.8,540.8 1024.0,530.6 1026.2,537.8 1028.4,542.7 1030.6,549.4 1032.8,548.8 1035.0,535.0 1037.2,533.4 1039.4,534.8 1041.6,532.2 1043.8,539.6 1046.0,533.7 1048.2,527.5 1050.4,530.8 1052.6,536.0 1054.8,524.6 1057.0,531.9 1059.2,532.1 1061.4,528.5 1063.6,524.7 1065.8,533.9 1068.0,526.3 1070.2,531.8 1072.4,532.8 1074.6,524.1 1076.8,524.6 1079.0,522.7 1081.2,528.7 1083.4,522.3 1085.6,528.2 1087.8,527.8 1090.0,525.6 1092.2,518.1 1094.4,531.6 1096.6,525.2 1098.8,526.7 1101.0,533.6 1103.2,536.5 1105.4,536.7 1107.6,532.0 1109.8,531.2 1112.0,533.2 1114.2,541.3 1116.4,531.3 1118.6,537.5 1120.8,535.8 1123.0,540.3 1125.2,535.8 1127.4,539.3 1129.6,539.4 1131.8,540.9 1134.0,539.8 1136.2,541.6 1138.4,554.6 1140.6,539.2 1142.8,526.3 1145.0,509.2 1147.2,527.9 1149.4,539.0 1150,621" fill="#6781aa"/><polygon points="122,621 122.0,584.3 124.2,580.9 126.4,580.8 128.6,582.9 130.8,579.4 133.0,580.4 135.2,578.3 137.4,579.9 139.6,582.7 141.8,578.1 144.0,581.1 146.2,579.9 148.4,581.8 150.6,582.2 152.8,581.3 155.0,580.4 157.2,590.6 159.4,614.8 161.6,619.0 163.8,616.6 166.0,596.0 168.2,579.4 170.4,583.2 172.6,583.6 174.8,578.8 177.0,580.2 179.2,580.2 181.4,581.8 183.6,579.2 185.8,580.1 188.0,580.2 190.2,586.1 192.4,621.0 194.6,610.8 196.8,579.8 199.0,578.5 201.2,577.1 203.4,576.4 205.6,581.4 207.8,579.1 210.0,581.9 212.2,582.6 214.4,577.7 216.6,580.6 218.8,583.2 221.0,582.2 223.2,582.0 225.4,583.2 227.6,577.5 229.8,580.2 232.0,583.5 234.2,576.7 236.4,576.5 238.6,571.8 240.8,572.4 243.0,573.7 245.2,572.9 247.4,571.3 249.6,572.7 251.8,574.8 254.0,573.1 256.2,571.4 258.4,572.8 260.6,574.1 262.8,574.0 265.0,576.3 267.2,574.0 269.4,576.1 271.6,579.3 273.8,576.2 276.0,579.0 278.2,576.9 280.4,576.9 282.6,577.5 284.8,579.3 287.0,579.0 289.2,578.7 291.4,578.1 293.6,576.0 295.8,577.0 298.0,579.0 300.2,576.6 302.4,580.6 304.6,577.8 306.8,611.6 309.0,620.7 311.2,586.4 313.4,580.0 315.6,578.0 317.8,579.3 320.0,575.9 322.2,580.0 324.4,577.9 326.6,578.9 328.8,581.8 331.0,578.2 333.2,581.9 335.4,593.5 337.6,619.8 339.8,611.3 342.0,578.9 344.2,580.5 346.4,577.6 348.6,578.6 350.8,580.3 353.0,578.0 355.2,580.6 357.4,579.3 359.6,579.7 361.8,581.1 364.0,578.3 366.2,575.6 368.4,578.7 370.6,577.6 372.8,578.2 375.0,573.3 377.2,576.0 379.4,575.0 381.6,572.7 383.8,570.0 386.0,574.0 388.2,593.8 390.4,616.2 392.6,619.8 394.8,604.0 397.0,577.5 399.2,580.7 401.4,576.5 403.6,580.0 405.8,578.8 408.0,577.5 410.2,579.4 412.4,576.4 414.6,576.7 416.8,575.0 419.0,575.4 421.2,575.4 423.4,576.8 425.6,573.9 427.8,573.3 430.0,577.5 432.2,575.0 434.4,572.8 436.6,576.2 438.8,572.8 441.0,575.8 443.2,574.7 445.4,575.9 447.6,575.0 449.8,575.3 452.0,574.6 454.2,572.1 456.4,575.0 458.6,576.8 460.8,579.1 463.0,575.4 465.2,579.4 467.4,576.8 469.6,576.6 471.8,577.1 474.0,575.5 476.2,578.0 478.4,580.5 480.6,577.3 482.8,578.0 485.0,578.8 487.2,575.4 489.4,578.9 491.6,580.7 493.8,578.0 496.0,580.5 498.2,597.3 500.4,615.5 502.6,608.9 504.8,579.6 507.0,591.7 509.2,614.8 511.4,612.0 513.6,612.4 515.8,612.7 518.0,612.6 520.2,612.4 522.4,613.6 524.6,611.5 526.8,614.2 529.0,611.0 531.2,611.4 533.4,614.0 535.6,612.9 537.8,611.5 540.0,613.4 542.2,613.1 544.4,613.3 546.6,611.8 548.8,613.5 551.0,612.9 553.2,612.4 555.4,613.1 557.6,613.7 559.8,614.2 562.0,614.4 564.2,614.0 566.4,614.6 568.6,613.6 570.8,612.6 573.0,612.8 575.2,613.7 577.4,613.9 579.6,613.9 581.8,614.2 584.0,614.1 586.2,612.2 588.4,614.3 590.6,612.9 592.8,613.5 595.0,610.5 597.2,614.6 599.4,612.7 601.6,613.2 603.8,613.6 606.0,612.6 608.2,612.7 610.4,613.9 612.6,612.5 614.8,612.5 617.0,611.6 619.2,613.5 621.4,608.3 623.6,607.6 625.8,614.4 628.0,612.4 630.2,613.0 632.4,613.8 634.6,612.0 636.8,613.4 639.0,611.9 641.2,613.0 643.4,612.2 645.6,612.2 647.8,612.4 650.0,613.9 652.2,612.0 654.4,612.9 656.6,610.9 658.8,612.4 661.0,612.2 663.2,613.7 665.4,613.9 667.6,613.9 669.8,615.7 672.0,616.2 674.2,615.1 676.4,614.6 678.6,613.8 680.8,612.3 683.0,613.3 685.2,612.2 687.4,613.0 689.6,613.1 691.8,612.6 694.0,614.9 696.2,612.8 698.4,613.5 700.6,614.0 702.8,615.6 705.0,614.9 707.2,616.3 709.4,612.9 711.6,613.3 713.8,614.5 716.0,613.6 718.2,612.2 720.4,613.5 722.6,613.2 724.8,613.3 727.0,613.0 729.2,614.5 731.4,612.9 733.6,613.4 735.8,610.0 738.0,613.1 740.2,613.3 742.4,611.9 744.6,613.0 746.8,612.6 749.0,613.7 751.2,611.4 753.4,613.5 755.6,612.5 757.8,611.8 760.0,613.2 762.2,612.9 764.4,612.3 766.6,612.2 768.8,614.0 771.0,612.7 773.2,613.8 775.4,613.6 777.6,613.5 779.8,611.7 782.0,611.3 784.2,610.4 786.4,613.0 788.6,613.7 790.8,613.8 793.0,611.3 795.2,614.4 797.4,613.2 799.6,613.4 801.8,611.2 804.0,613.9 806.2,611.8 808.4,611.6 810.6,613.1 812.8,612.4 815.0,614.4 817.2,613.4 819.4,614.2 821.6,617.2 823.8,613.9 826.0,613.2 828.2,614.5 830.4,614.3 832.6,613.6 834.8,613.4 837.0,613.2 839.2,613.8 841.4,613.9 843.6,612.6 845.8,613.7 848.0,614.2 850.2,615.2 852.4,614.3 854.6,614.0 856.8,612.1 859.0,612.8 861.2,612.0 863.4,611.7 865.6,584.2 867.8,580.4 870.0,578.8 872.2,582.5 874.4,579.2 876.6,580.9 878.8,578.1 881.0,579.0 883.2,580.4 885.4,575.7 887.6,579.0 889.8,575.5 892.0,571.3 894.2,567.5 896.4,568.6 898.6,564.2 900.8,572.3 903.0,589.8 905.2,603.8 907.4,603.6 909.6,592.6 911.8,582.5 914.0,576.7 916.2,576.3 918.4,577.2 920.6,573.5 922.8,577.3 925.0,575.4 927.2,575.6 929.4,573.6 931.6,575.9 933.8,573.7 936.0,572.2 938.2,575.2 940.4,573.9 942.6,572.6 944.8,573.6 947.0,573.8 949.2,569.8 951.4,573.0 953.6,570.3 955.8,573.8 958.0,573.5 960.2,572.2 962.4,573.9 964.6,575.1 966.8,575.0 969.0,573.7 971.2,575.3 973.4,573.2 975.6,578.0 977.8,573.3 980.0,573.9 982.2,576.0 984.4,576.9 986.6,576.9 988.8,575.8 991.0,574.0 993.2,578.5 995.4,577.1 997.6,575.5 999.8,576.8 1002.0,577.7 1004.2,578.5 1006.4,578.1 1008.6,576.6 1010.8,581.8 1013.0,582.4 1015.2,597.5 1017.4,586.8 1019.6,577.7 1021.8,580.0 1024.0,577.7 1026.2,575.3 1028.4,579.8 1030.6,588.7 1032.8,587.0 1035.0,579.1 1037.2,580.0 1039.4,577.6 1041.6,576.6 1043.8,580.4 1046.0,575.9 1048.2,575.2 1050.4,575.1 1052.6,576.1 1054.8,570.9 1057.0,577.5 1059.2,576.2 1061.4,572.1 1063.6,569.8 1065.8,575.6 1068.0,571.3 1070.2,575.1 1072.4,571.6 1074.6,572.1 1076.8,569.8 1079.0,570.2 1081.2,573.6 1083.4,568.1 1085.6,574.3 1087.8,573.4 1090.0,570.6 1092.2,572.6 1094.4,574.7 1096.6,571.7 1098.8,573.7 1101.0,574.1 1103.2,576.1 1105.4,575.0 1107.6,574.7 1109.8,573.7 1112.0,575.7 1114.2,578.3 1116.4,575.4 1118.6,578.0 1120.8,575.4 1123.0,580.1 1125.2,577.1 1127.4,579.8 1129.6,576.7 1131.8,577.7 1134.0,589.3 1136.2,598.8 1138.4,614.4 1140.6,596.7 1142.8,580.1 1145.0,561.7 1147.2,571.5 1149.4,584.1 1150,621" fill="#4268a5"/><polyline points="122.0,471.3 124.2,447.9 126.4,458.7 128.6,456.5 130.8,467.7 133.0,477.0 135.2,453.6 137.4,462.5 139.6,465.7 141.8,443.0 144.0,449.9 146.2,453.1 148.4,447.0 150.6,451.6 152.8,454.4 155.0,440.2 157.2,442.1 159.4,428.0 161.6,439.7 163.8,418.3 166.0,449.1 168.2,466.5 170.4,464.5 172.6,447.2 174.8,429.0 177.0,438.8 179.2,439.4 181.4,448.5 183.6,440.8 185.8,450.4 188.0,477.0 190.2,474.6 192.4,484.7 194.6,463.0 196.8,458.1 199.0,432.6 201.2,423.2 203.4,440.1 205.6,429.5 207.8,430.2 210.0,427.7 212.2,431.2 214.4,425.5 216.6,426.0 218.8,431.3 221.0,440.9 223.2,447.1 225.4,464.6 227.6,456.0 229.8,474.5 232.0,477.7 234.2,456.4 236.4,445.0 238.6,405.2 240.8,424.8 243.0,432.0 245.2,420.4 247.4,426.7 249.6,422.1 251.8,423.4 254.0,415.4 256.2,404.1 258.4,413.3 260.6,406.3 262.8,432.9 265.0,463.4 267.2,476.7 269.4,470.5 271.6,462.1 273.8,443.1 276.0,445.5 278.2,430.6 280.4,426.9 282.6,446.9 284.8,439.2 287.0,440.5 289.2,431.8 291.4,430.3 293.6,438.0 295.8,439.7 298.0,451.9 300.2,457.3 302.4,475.4 304.6,482.6 306.8,481.8 309.0,477.2 311.2,462.4 313.4,453.8 315.6,435.4 317.8,436.3 320.0,434.0 322.2,447.1 324.4,446.6 326.6,461.3 328.8,446.3 331.0,438.4 333.2,434.3 335.4,447.8 337.6,416.7 339.8,429.3 342.0,425.8 344.2,445.1 346.4,447.5 348.6,457.7 350.8,457.3 353.0,460.7 355.2,457.4 357.4,454.9 359.6,476.5 361.8,465.0 364.0,454.9 366.2,455.0 368.4,461.3 370.6,450.5 372.8,447.1 375.0,458.1 377.2,471.2 379.4,472.3 381.6,490.6 383.8,483.9 386.0,478.2 388.2,462.6 390.4,423.0 392.6,449.3 394.8,448.3 397.0,431.6 399.2,441.2 401.4,440.6 403.6,449.0 405.8,465.0 408.0,450.5 410.2,455.0 412.4,440.3 414.6,434.6 416.8,449.8 419.0,435.9 421.2,432.1 423.4,437.6 425.6,428.0 427.8,427.7 430.0,436.8 432.2,433.5 434.4,426.6 436.6,438.0 438.8,435.8 441.0,433.2 443.2,445.4 445.4,428.3 447.6,433.8 449.8,432.8 452.0,430.8 454.2,417.6 456.4,438.5 458.6,438.1 460.8,433.3 463.0,431.2 465.2,447.3 467.4,427.8 469.6,434.6 471.8,433.5 474.0,439.1 476.2,453.7 478.4,442.6 480.6,426.0 482.8,438.0 485.0,435.4 487.2,426.4 489.4,421.0 491.6,444.8 493.8,461.5 496.0,476.9 498.2,472.7 500.4,460.6 502.6,463.2 504.8,452.1 507.0,455.9 509.2,592.6 511.4,591.5 513.6,590.4 515.8,590.9 518.0,593.5 520.2,591.6 522.4,593.3 524.6,590.9 526.8,591.8 529.0,591.6 531.2,589.0 533.4,595.3 535.6,590.5 537.8,589.1 540.0,591.2 542.2,592.1 544.4,592.9 546.6,588.2 548.8,594.0 551.0,591.8 553.2,591.5 555.4,593.1 557.6,590.0 559.8,594.5 562.0,592.4 564.2,593.3 566.4,594.8 568.6,592.6 570.8,591.5 573.0,592.3 575.2,594.4 577.4,593.0 579.6,595.8 581.8,592.2 584.0,592.9 586.2,589.9 588.4,594.2 590.6,591.8 592.8,588.6 595.0,589.1 597.2,594.4 599.4,592.7 601.6,592.7 603.8,593.1 606.0,590.7 608.2,590.4 610.4,594.7 612.6,593.1 614.8,591.5 617.0,591.5 619.2,594.5 621.4,581.8 623.6,573.6 625.8,592.0 628.0,592.5 630.2,590.5 632.4,594.3 634.6,593.1 636.8,592.0 639.0,590.2 641.2,591.0 643.4,590.2 645.6,590.9 647.8,593.1 650.0,593.7 652.2,589.2 654.4,594.8 656.6,592.3 658.8,589.3 661.0,591.2 663.2,591.5 665.4,592.5 667.6,594.9 669.8,598.9 672.0,599.8 674.2,597.8 676.4,595.5 678.6,594.1 680.8,588.9 683.0,594.0 685.2,587.4 687.4,592.5 689.6,593.2 691.8,588.6 694.0,592.2 696.2,593.8 698.4,593.7 700.6,592.9 702.8,595.1 705.0,599.7 707.2,602.9 709.4,596.8 711.6,593.5 713.8,593.1 716.0,593.0 718.2,590.6 720.4,593.9 722.6,594.6 724.8,591.7 727.0,589.9 729.2,592.3 731.4,589.6 733.6,592.4 735.8,590.1 738.0,592.6 740.2,593.3 742.4,592.0 744.6,590.2 746.8,595.6 749.0,592.8 751.2,589.2 753.4,593.3 755.6,592.8 757.8,591.5 760.0,590.1 762.2,592.4 764.4,593.4 766.6,592.3 768.8,594.0 771.0,593.9 773.2,595.8 775.4,594.2 777.6,592.1 779.8,589.6 782.0,586.9 784.2,588.1 786.4,591.9 788.6,593.5 790.8,591.0 793.0,588.7 795.2,594.7 797.4,589.5 799.6,588.6 801.8,591.5 804.0,591.2 806.2,590.3 808.4,589.4 810.6,593.2 812.8,592.1 815.0,596.3 817.2,595.9 819.4,593.9 821.6,597.8 823.8,594.7 826.0,592.2 828.2,596.8 830.4,592.0 832.6,594.0 834.8,589.4 837.0,592.8 839.2,592.7 841.4,588.4 843.6,593.2 845.8,593.2 848.0,597.7 850.2,599.9 852.4,597.6 854.6,594.1 856.8,593.4 859.0,594.3 861.2,590.7 863.4,588.2 865.6,467.6 867.8,452.1 870.0,455.6 872.2,453.8 874.4,438.0 876.6,453.3 878.8,443.2 881.0,439.6 883.2,454.6 885.4,447.2 887.6,461.4 889.8,468.4 892.0,453.1 894.2,474.2 896.4,474.5 898.6,481.7 900.8,465.0 903.0,442.6 905.2,429.3 907.4,444.6 909.6,439.1 911.8,440.1 914.0,438.8 916.2,453.9 918.4,452.9 920.6,448.7 922.8,457.8 925.0,451.3 927.2,448.9 929.4,446.4 931.6,439.4 933.8,446.9 936.0,468.8 938.2,442.6 940.4,439.1 942.6,429.0 944.8,429.0 947.0,422.8 949.2,422.2 951.4,430.9 953.6,439.6 955.8,417.2 958.0,427.8 960.2,443.5 962.4,430.0 964.6,428.6 966.8,431.5 969.0,435.4 971.2,422.0 973.4,429.7 975.6,432.5 977.8,427.0 980.0,417.6 982.2,434.3 984.4,432.1 986.6,435.4 988.8,432.1 991.0,452.2 993.2,439.4 995.4,431.9 997.6,440.2 999.8,440.2 1002.0,441.4 1004.2,436.5 1006.4,457.2 1008.6,436.3 1010.8,451.3 1013.0,452.4 1015.2,446.2 1017.4,460.5 1019.6,454.6 1021.8,455.0 1024.0,444.6 1026.2,461.2 1028.4,464.6 1030.6,459.5 1032.8,453.5 1035.0,448.8 1037.2,438.6 1039.4,431.3 1041.6,420.9 1043.8,436.0 1046.0,439.7 1048.2,413.1 1050.4,430.1 1052.6,432.3 1054.8,428.0 1057.0,426.2 1059.2,432.4 1061.4,420.8 1063.6,423.5 1065.8,442.6 1068.0,428.5 1070.2,432.9 1072.4,427.4 1074.6,412.5 1076.8,423.6 1079.0,426.0 1081.2,431.9 1083.4,412.7 1085.6,441.8 1087.8,427.9 1090.0,422.0 1092.2,410.4 1094.4,435.8 1096.6,407.4 1098.8,413.2 1101.0,425.1 1103.2,437.1 1105.4,444.5 1107.6,437.1 1109.8,447.1 1112.0,437.5 1114.2,457.3 1116.4,439.3 1118.6,454.4 1120.8,447.4 1123.0,446.1 1125.2,443.7 1127.4,453.2 1129.6,461.2 1131.8,448.3 1134.0,442.5 1136.2,431.6 1138.4,444.8 1140.6,432.0 1142.8,455.1 1145.0,472.7 1147.2,496.4 1149.4,460.2" fill="none" stroke="#8fd48a" stroke-width="1" stroke-linejoin="round"/><polyline points="122.0,513.3 124.2,497.9 126.4,504.5 128.6,497.3 130.8,494.2 133.0,498.7 135.2,495.1 137.4,501.3 139.6,510.7 141.8,495.8 144.0,497.5 146.2,504.4 148.4,496.1 150.6,500.4 152.8,501.9 155.0,492.9 157.2,494.1 159.4,495.3 161.6,500.0 163.8,482.3 166.0,499.8 168.2,498.3 170.4,498.3 172.6,491.9 174.8,487.3 177.0,494.3 179.2,496.2 181.4,503.4 183.6,500.2 185.8,500.3 188.0,518.6 190.2,513.1 192.4,516.5 194.6,505.4 196.8,501.4 199.0,485.6 201.2,476.7 203.4,486.6 205.6,485.5 207.8,479.3 210.0,479.9 212.2,481.3 214.4,478.7 216.6,478.4 218.8,481.6 221.0,486.8 223.2,488.7 225.4,499.8 227.6,490.6 229.8,506.4 232.0,511.5 234.2,505.9 236.4,499.2 238.6,486.4 240.8,489.1 243.0,486.3 245.2,481.3 247.4,482.9 249.6,476.7 251.8,481.6 254.0,478.4 256.2,468.1 258.4,468.8 260.6,469.7 262.8,481.8 265.0,487.7 267.2,498.9 269.4,504.0 271.6,503.6 273.8,498.0 276.0,503.4 278.2,499.5 280.4,491.3 282.6,504.1 284.8,494.7 287.0,492.9 289.2,489.8 291.4,479.9 293.6,483.5 295.8,491.4 298.0,496.0 300.2,501.8 302.4,511.9 304.6,520.9 306.8,522.0 309.0,528.6 311.2,511.4 313.4,497.5 315.6,480.8 317.8,481.8 320.0,484.0 322.2,496.8 324.4,494.2 326.6,498.9 328.8,499.8 331.0,492.2 333.2,494.5 335.4,505.3 337.6,485.2 339.8,490.7 342.0,496.7 344.2,502.7 346.4,499.2 348.6,503.6 350.8,505.0 353.0,514.4 355.2,507.8 357.4,504.0 359.6,512.0 361.8,514.5 364.0,507.8 366.2,501.9 368.4,509.2 370.6,502.3 372.8,507.5 375.0,505.4 377.2,508.4 379.4,508.8 381.6,511.2 383.8,501.3 386.0,500.4 388.2,490.9 390.4,476.5 392.6,490.0 394.8,494.4 397.0,478.5 399.2,493.4 401.4,483.3 403.6,495.2 405.8,498.8 408.0,489.9 410.2,497.8 412.4,490.8 414.6,476.2 416.8,498.3 419.0,486.3 421.2,487.3 423.4,489.7 425.6,482.2 427.8,478.5 430.0,481.4 432.2,482.3 434.4,475.4 436.6,489.8 438.8,480.1 441.0,480.1 443.2,483.0 445.4,474.7 447.6,480.6 449.8,482.8 452.0,484.2 454.2,472.0 456.4,482.7 458.6,486.4 460.8,486.1 463.0,485.1 465.2,497.3 467.4,490.3 469.6,490.2 471.8,492.9 474.0,502.0 476.2,511.0 478.4,506.4 480.6,505.4 482.8,510.7 485.0,510.4 487.2,510.3 489.4,512.6 491.6,521.6 493.8,525.9 496.0,530.0 498.2,519.5 500.4,505.1 502.6,513.1 504.8,503.4 507.0,504.1 509.2,600.7 511.4,599.4 513.6,596.7 515.8,598.7 518.0,600.6 520.2,597.5 522.4,601.0 524.6,598.2 526.8,598.3 529.0,599.4 531.2,596.8 533.4,602.0 535.6,598.2 537.8,597.4 540.0,597.8 542.2,599.8 544.4,600.2 546.6,597.7 548.8,599.5 551.0,599.8 553.2,598.5 555.4,600.3 557.6,599.1 559.8,601.7 562.0,601.8 564.2,600.1 566.4,602.4 568.6,599.4 570.8,598.1 573.0,599.7 575.2,601.4 577.4,600.5 579.6,601.1 581.8,601.5 584.0,600.0 586.2,598.9 588.4,600.5 590.6,599.4 592.8,599.0 595.0,595.5 597.2,600.3 599.4,599.5 601.6,600.5 603.8,601.0 606.0,599.3 608.2,597.5 610.4,600.4 612.6,600.0 614.8,600.0 617.0,599.3 619.2,599.8 621.4,592.2 623.6,587.7 625.8,601.8 628.0,600.4 630.2,598.1 632.4,600.4 634.6,599.6 636.8,599.3 639.0,598.0 641.2,598.9 643.4,597.1 645.6,597.1 647.8,599.6 650.0,599.9 652.2,597.1 654.4,599.8 656.6,599.2 658.8,597.0 661.0,600.0 663.2,598.9 665.4,600.2 667.6,600.6 669.8,603.9 672.0,604.2 674.2,604.4 676.4,602.1 678.6,600.8 680.8,598.9 683.0,601.2 685.2,595.3 687.4,600.1 689.6,600.3 691.8,598.1 694.0,600.9 696.2,599.7 698.4,600.6 700.6,600.4 702.8,602.3 705.0,604.1 707.2,606.4 709.4,601.3 711.6,600.6 713.8,600.3 716.0,600.6 718.2,597.2 720.4,600.0 722.6,599.9 724.8,599.3 727.0,597.5 729.2,600.6 731.4,597.7 733.6,599.5 735.8,598.7 738.0,599.8 740.2,599.9 742.4,598.8 744.6,596.9 746.8,600.8 749.0,600.2 751.2,596.7 753.4,600.2 755.6,599.4 757.8,599.2 760.0,599.1 762.2,599.8 764.4,600.2 766.6,599.0 768.8,601.2 771.0,599.9 773.2,603.0 775.4,601.5 777.6,601.2 779.8,597.8 782.0,595.2 784.2,594.7 786.4,599.8 788.6,599.7 790.8,598.6 793.0,596.4 795.2,601.3 797.4,598.7 799.6,596.4 801.8,597.0 804.0,599.1 806.2,597.2 808.4,596.7 810.6,601.0 812.8,599.8 815.0,601.6 817.2,601.7 819.4,600.9 821.6,604.6 823.8,602.5 826.0,600.6 828.2,602.1 830.4,600.0 832.6,599.5 834.8,598.3 837.0,600.3 839.2,598.9 841.4,597.6 843.6,601.2 845.8,598.3 848.0,604.1 850.2,604.3 852.4,603.1 854.6,600.0 856.8,601.9 859.0,600.2 861.2,598.3 863.4,597.2 865.6,500.2 867.8,492.6 870.0,499.7 872.2,497.6 874.4,494.2 876.6,502.8 878.8,491.8 881.0,495.9 883.2,506.7 885.4,499.0 887.6,506.4 889.8,510.5 892.0,501.5 894.2,513.0 896.4,510.3 898.6,509.3 900.8,509.7 903.0,509.6 905.2,493.4 907.4,500.5 909.6,496.6 911.8,494.3 914.0,492.6 916.2,498.2 918.4,495.3 920.6,490.5 922.8,496.9 925.0,496.8 927.2,491.6 929.4,497.7 931.6,495.5 933.8,495.3 936.0,507.1 938.2,492.8 940.4,494.2 942.6,481.7 944.8,490.6 947.0,490.4 949.2,481.5 951.4,488.9 953.6,488.1 955.8,477.1 958.0,475.6 960.2,484.8 962.4,475.2 964.6,478.6 966.8,473.7 969.0,481.6 971.2,468.8 973.4,480.3 975.6,483.6 977.8,476.8 980.0,472.7 982.2,478.2 984.4,478.3 986.6,489.0 988.8,484.5 991.0,496.8 993.2,484.0 995.4,484.2 997.6,487.9 999.8,487.0 1002.0,489.7 1004.2,488.1 1006.4,497.8 1008.6,491.4 1010.8,499.6 1013.0,496.6 1015.2,496.2 1017.4,506.2 1019.6,497.4 1021.8,497.6 1024.0,492.9 1026.2,500.2 1028.4,508.6 1030.6,502.2 1032.8,501.9 1035.0,501.9 1037.2,495.1 1039.4,499.6 1041.6,490.1 1043.8,497.1 1046.0,494.9 1048.2,478.4 1050.4,488.3 1052.6,493.1 1054.8,478.9 1057.0,479.7 1059.2,484.9 1061.4,476.6 1063.6,478.5 1065.8,486.8 1068.0,483.1 1070.2,486.4 1072.4,482.6 1074.6,474.8 1076.8,472.0 1079.0,475.2 1081.2,481.0 1083.4,469.5 1085.6,482.4 1087.8,481.7 1090.0,469.2 1092.2,460.0 1094.4,484.0 1096.6,465.7 1098.8,473.4 1101.0,474.6 1103.2,486.7 1105.4,487.6 1107.6,485.1 1109.8,485.9 1112.0,488.0 1114.2,499.7 1116.4,487.4 1118.6,500.7 1120.8,497.3 1123.0,502.8 1125.2,495.9 1127.4,500.8 1129.6,507.3 1131.8,500.4 1134.0,502.0 1136.2,497.6 1138.4,504.7 1140.6,496.8 1142.8,503.8 1145.0,501.0 1147.2,515.1 1149.4,502.3" fill="none" stroke="#73bf69" stroke-width="1" stroke-linejoin="round"/><polyline points="122.0,550.7 124.2,540.6 126.4,543.0 128.6,546.1 130.8,539.8 133.0,544.7 135.2,535.1 137.4,545.0 139.6,545.7 141.8,537.8 144.0,544.3 146.2,545.8 148.4,543.8 150.6,551.0 152.8,551.3 155.0,555.0 157.2,555.2 159.4,560.2 161.6,566.6 163.8,546.3 166.0,540.2 168.2,540.3 170.4,544.1 172.6,539.0 174.8,533.6 177.0,538.0 179.2,534.7 181.4,546.2 183.6,537.2 185.8,539.2 188.0,544.5 190.2,547.6 192.4,573.1 194.6,563.4 196.8,540.1 199.0,531.7 201.2,528.3 203.4,534.4 205.6,534.8 207.8,529.0 210.0,529.9 212.2,529.3 214.4,528.1 216.6,528.2 218.8,528.9 221.0,530.6 223.2,535.4 225.4,540.1 227.6,537.1 229.8,542.9 232.0,541.0 234.2,532.7 236.4,531.8 238.6,524.3 240.8,526.2 243.0,525.3 245.2,524.6 247.4,522.0 249.6,522.3 251.8,524.6 254.0,523.9 256.2,515.3 258.4,516.0 260.6,520.6 262.8,522.7 265.0,529.4 267.2,539.1 269.4,540.2 271.6,546.7 273.8,542.5 276.0,544.8 278.2,540.0 280.4,537.6 282.6,540.1 284.8,539.5 287.0,538.3 289.2,533.6 291.4,530.8 293.6,529.8 295.8,531.5 298.0,531.3 300.2,530.7 302.4,535.0 304.6,536.0 306.8,552.0 309.0,566.7 311.2,540.0 313.4,542.1 315.6,536.1 317.8,537.2 320.0,534.0 322.2,543.6 324.4,541.6 326.6,547.1 328.8,547.8 331.0,543.6 333.2,549.8 335.4,560.2 337.6,557.1 339.8,547.5 342.0,534.7 344.2,536.6 346.4,535.7 348.6,536.6 350.8,539.4 353.0,540.2 355.2,540.2 357.4,541.9 359.6,539.4 361.8,543.9 364.0,534.3 366.2,533.0 368.4,536.8 370.6,536.3 372.8,535.3 375.0,533.6 377.2,536.1 379.4,532.4 381.6,531.5 383.8,521.7 386.0,527.6 388.2,548.7 390.4,551.8 392.6,545.3 394.8,545.6 397.0,536.4 399.2,538.5 401.4,536.1 403.6,540.2 405.8,540.6 408.0,541.9 410.2,543.0 412.4,540.4 414.6,527.1 416.8,537.6 419.0,533.4 421.2,532.9 423.4,533.1 425.6,527.7 427.8,529.8 430.0,532.8 432.2,531.9 434.4,524.4 436.6,533.0 438.8,525.8 441.0,526.7 443.2,527.5 445.4,523.4 447.6,527.3 449.8,526.1 452.0,529.2 454.2,518.7 456.4,527.3 458.6,529.7 460.8,529.7 463.0,527.4 465.2,530.4 467.4,527.6 469.6,525.1 471.8,526.7 474.0,526.3 476.2,535.9 478.4,535.4 480.6,529.6 482.8,531.0 485.0,530.2 487.2,528.8 489.4,528.7 491.6,533.5 493.8,535.8 496.0,534.6 498.2,550.8 500.4,566.5 502.6,556.4 504.8,536.5 507.0,565.1 509.2,608.7 511.4,606.0 513.6,604.7 515.8,605.3 518.0,607.0 520.2,604.9 522.4,608.4 524.6,605.7 526.8,606.5 529.0,606.3 531.2,604.5 533.4,608.6 535.6,606.5 537.8,605.2 540.0,605.5 542.2,607.2 544.4,606.9 546.6,604.8 548.8,607.2 551.0,607.1 553.2,605.9 555.4,606.5 557.6,606.5 559.8,608.5 562.0,608.3 564.2,607.3 566.4,608.2 568.6,607.3 570.8,606.1 573.0,606.9 575.2,607.9 577.4,607.0 579.6,608.3 581.8,606.8 584.0,607.4 586.2,606.8 588.4,607.5 590.6,606.3 592.8,606.4 595.0,603.1 597.2,608.5 599.4,606.8 601.6,607.2 603.8,608.0 606.0,606.7 608.2,606.0 610.4,607.4 612.6,606.4 614.8,606.6 617.0,604.9 619.2,607.4 621.4,600.5 623.6,597.6 625.8,607.8 628.0,606.8 630.2,605.8 632.4,606.6 634.6,605.5 636.8,606.8 639.0,605.0 641.2,606.5 643.4,605.0 645.6,604.4 647.8,605.9 650.0,607.1 652.2,604.8 654.4,606.7 656.6,605.4 658.8,605.2 661.0,607.0 663.2,605.8 665.4,607.1 667.6,608.0 669.8,610.3 672.0,609.8 674.2,610.8 676.4,610.1 678.6,608.5 680.8,606.4 683.0,607.6 685.2,605.6 687.4,606.4 689.6,607.3 691.8,604.9 694.0,609.6 696.2,607.4 698.4,606.7 700.6,607.8 702.8,609.4 705.0,610.0 707.2,611.7 709.4,607.5 711.6,607.4 713.8,607.6 716.0,607.5 718.2,605.1 720.4,606.5 722.6,605.8 724.8,606.0 727.0,605.9 729.2,607.4 731.4,606.9 733.6,607.2 735.8,605.0 738.0,606.4 740.2,607.4 742.4,605.1 744.6,606.1 746.8,607.3 749.0,608.1 751.2,605.2 753.4,607.4 755.6,605.9 757.8,606.2 760.0,606.7 762.2,607.8 764.4,607.6 766.6,605.2 768.8,608.5 771.0,606.7 773.2,608.5 775.4,608.3 777.6,607.4 779.8,605.6 782.0,604.1 784.2,603.5 786.4,606.7 788.6,606.6 790.8,606.4 793.0,604.5 795.2,608.2 797.4,605.9 799.6,605.5 801.8,604.2 804.0,606.0 806.2,604.6 808.4,604.4 810.6,607.5 812.8,606.9 815.0,607.9 817.2,608.5 819.4,608.9 821.6,611.2 823.8,608.8 826.0,606.7 828.2,609.2 830.4,608.2 832.6,606.3 834.8,606.8 837.0,606.5 839.2,606.0 841.4,606.3 843.6,606.8 845.8,606.3 848.0,609.0 850.2,610.2 852.4,609.1 854.6,607.3 856.8,606.6 859.0,605.9 861.2,605.1 863.4,604.5 865.6,542.6 867.8,536.5 870.0,539.8 872.2,539.6 874.4,536.8 876.6,545.6 878.8,537.2 881.0,541.1 883.2,544.5 885.4,539.6 887.6,544.5 889.8,545.1 892.0,534.5 894.2,538.8 896.4,540.0 898.6,525.0 900.8,525.4 903.0,545.4 905.2,552.0 907.4,551.5 909.6,546.9 911.8,536.9 914.0,530.1 916.2,534.6 918.4,537.5 920.6,527.6 922.8,532.8 925.0,535.5 927.2,530.2 929.4,533.4 931.6,533.2 933.8,532.4 936.0,533.3 938.2,532.7 940.4,530.7 942.6,526.0 944.8,527.8 947.0,527.0 949.2,525.1 951.4,528.5 953.6,528.6 955.8,527.1 958.0,524.0 960.2,526.7 962.4,525.1 964.6,527.2 966.8,527.0 969.0,532.7 971.2,527.8 973.4,525.8 975.6,532.5 977.8,526.1 980.0,527.6 982.2,529.6 984.4,529.4 986.6,535.1 988.8,530.1 991.0,534.0 993.2,536.2 995.4,531.8 997.6,532.3 999.8,534.6 1002.0,536.1 1004.2,534.6 1006.4,535.2 1008.6,534.2 1010.8,541.5 1013.0,539.9 1015.2,549.1 1017.4,545.7 1019.6,534.5 1021.8,540.8 1024.0,530.6 1026.2,537.8 1028.4,542.7 1030.6,549.4 1032.8,548.8 1035.0,535.0 1037.2,533.4 1039.4,534.8 1041.6,532.2 1043.8,539.6 1046.0,533.7 1048.2,527.5 1050.4,530.8 1052.6,536.0 1054.8,524.6 1057.0,531.9 1059.2,532.1 1061.4,528.5 1063.6,524.7 1065.8,533.9 1068.0,526.3 1070.2,531.8 1072.4,532.8 1074.6,524.1 1076.8,524.6 1079.0,522.7 1081.2,528.7 1083.4,522.3 1085.6,528.2 1087.8,527.8 1090.0,525.6 1092.2,518.1 1094.4,531.6 1096.6,525.2 1098.8,526.7 1101.0,533.6 1103.2,536.5 1105.4,536.7 1107.6,532.0 1109.8,531.2 1112.0,533.2 1114.2,541.3 1116.4,531.3 1118.6,537.5 1120.8,535.8 1123.0,540.3 1125.2,535.8 1127.4,539.3 1129.6,539.4 1131.8,540.9 1134.0,539.8 1136.2,541.6 1138.4,554.6 1140.6,539.2 1142.8,526.3 1145.0,509.2 1147.2,527.9 1149.4,539.0" fill="none" stroke="#8ab8ff" stroke-width="1" stroke-linejoin="round"/><polyline points="122.0,584.3 124.2,580.9 126.4,580.8 128.6,582.9 130.8,579.4 133.0,580.4 135.2,578.3 137.4,579.9 139.6,582.7 141.8,578.1 144.0,581.1 146.2,579.9 148.4,581.8 150.6,582.2 152.8,581.3 155.0,580.4 157.2,590.6 159.4,614.8 161.6,619.0 163.8,616.6 166.0,596.0 168.2,579.4 170.4,583.2 172.6,583.6 174.8,578.8 177.0,580.2 179.2,580.2 181.4,581.8 183.6,579.2 185.8,580.1 188.0,580.2 190.2,586.1 192.4,621.0 194.6,610.8 196.8,579.8 199.0,578.5 201.2,577.1 203.4,576.4 205.6,581.4 207.8,579.1 210.0,581.9 212.2,582.6 214.4,577.7 216.6,580.6 218.8,583.2 221.0,582.2 223.2,582.0 225.4,583.2 227.6,577.5 229.8,580.2 232.0,583.5 234.2,576.7 236.4,576.5 238.6,571.8 240.8,572.4 243.0,573.7 245.2,572.9 247.4,571.3 249.6,572.7 251.8,574.8 254.0,573.1 256.2,571.4 258.4,572.8 260.6,574.1 262.8,574.0 265.0,576.3 267.2,574.0 269.4,576.1 271.6,579.3 273.8,576.2 276.0,579.0 278.2,576.9 280.4,576.9 282.6,577.5 284.8,579.3 287.0,579.0 289.2,578.7 291.4,578.1 293.6,576.0 295.8,577.0 298.0,579.0 300.2,576.6 302.4,580.6 304.6,577.8 306.8,611.6 309.0,620.7 311.2,586.4 313.4,580.0 315.6,578.0 317.8,579.3 320.0,575.9 322.2,580.0 324.4,577.9 326.6,578.9 328.8,581.8 331.0,578.2 333.2,581.9 335.4,593.5 337.6,619.8 339.8,611.3 342.0,578.9 344.2,580.5 346.4,577.6 348.6,578.6 350.8,580.3 353.0,578.0 355.2,580.6 357.4,579.3 359.6,579.7 361.8,581.1 364.0,578.3 366.2,575.6 368.4,578.7 370.6,577.6 372.8,578.2 375.0,573.3 377.2,576.0 379.4,575.0 381.6,572.7 383.8,570.0 386.0,574.0 388.2,593.8 390.4,616.2 392.6,619.8 394.8,604.0 397.0,577.5 399.2,580.7 401.4,576.5 403.6,580.0 405.8,578.8 408.0,577.5 410.2,579.4 412.4,576.4 414.6,576.7 416.8,575.0 419.0,575.4 421.2,575.4 423.4,576.8 425.6,573.9 427.8,573.3 430.0,577.5 432.2,575.0 434.4,572.8 436.6,576.2 438.8,572.8 441.0,575.8 443.2,574.7 445.4,575.9 447.6,575.0 449.8,575.3 452.0,574.6 454.2,572.1 456.4,575.0 458.6,576.8 460.8,579.1 463.0,575.4 465.2,579.4 467.4,576.8 469.6,576.6 471.8,577.1 474.0,575.5 476.2,578.0 478.4,580.5 480.6,577.3 482.8,578.0 485.0,578.8 487.2,575.4 489.4,578.9 491.6,580.7 493.8,578.0 496.0,580.5 498.2,597.3 500.4,615.5 502.6,608.9 504.8,579.6 507.0,591.7 509.2,614.8 511.4,612.0 513.6,612.4 515.8,612.7 518.0,612.6 520.2,612.4 522.4,613.6 524.6,611.5 526.8,614.2 529.0,611.0 531.2,611.4 533.4,614.0 535.6,612.9 537.8,611.5 540.0,613.4 542.2,613.1 544.4,613.3 546.6,611.8 548.8,613.5 551.0,612.9 553.2,612.4 555.4,613.1 557.6,613.7 559.8,614.2 562.0,614.4 564.2,614.0 566.4,614.6 568.6,613.6 570.8,612.6 573.0,612.8 575.2,613.7 577.4,613.9 579.6,613.9 581.8,614.2 584.0,614.1 586.2,612.2 588.4,614.3 590.6,612.9 592.8,613.5 595.0,610.5 597.2,614.6 599.4,612.7 601.6,613.2 603.8,613.6 606.0,612.6 608.2,612.7 610.4,613.9 612.6,612.5 614.8,612.5 617.0,611.6 619.2,613.5 621.4,608.3 623.6,607.6 625.8,614.4 628.0,612.4 630.2,613.0 632.4,613.8 634.6,612.0 636.8,613.4 639.0,611.9 641.2,613.0 643.4,612.2 645.6,612.2 647.8,612.4 650.0,613.9 652.2,612.0 654.4,612.9 656.6,610.9 658.8,612.4 661.0,612.2 663.2,613.7 665.4,613.9 667.6,613.9 669.8,615.7 672.0,616.2 674.2,615.1 676.4,614.6 678.6,613.8 680.8,612.3 683.0,613.3 685.2,612.2 687.4,613.0 689.6,613.1 691.8,612.6 694.0,614.9 696.2,612.8 698.4,613.5 700.6,614.0 702.8,615.6 705.0,614.9 707.2,616.3 709.4,612.9 711.6,613.3 713.8,614.5 716.0,613.6 718.2,612.2 720.4,613.5 722.6,613.2 724.8,613.3 727.0,613.0 729.2,614.5 731.4,612.9 733.6,613.4 735.8,610.0 738.0,613.1 740.2,613.3 742.4,611.9 744.6,613.0 746.8,612.6 749.0,613.7 751.2,611.4 753.4,613.5 755.6,612.5 757.8,611.8 760.0,613.2 762.2,612.9 764.4,612.3 766.6,612.2 768.8,614.0 771.0,612.7 773.2,613.8 775.4,613.6 777.6,613.5 779.8,611.7 782.0,611.3 784.2,610.4 786.4,613.0 788.6,613.7 790.8,613.8 793.0,611.3 795.2,614.4 797.4,613.2 799.6,613.4 801.8,611.2 804.0,613.9 806.2,611.8 808.4,611.6 810.6,613.1 812.8,612.4 815.0,614.4 817.2,613.4 819.4,614.2 821.6,617.2 823.8,613.9 826.0,613.2 828.2,614.5 830.4,614.3 832.6,613.6 834.8,613.4 837.0,613.2 839.2,613.8 841.4,613.9 843.6,612.6 845.8,613.7 848.0,614.2 850.2,615.2 852.4,614.3 854.6,614.0 856.8,612.1 859.0,612.8 861.2,612.0 863.4,611.7 865.6,584.2 867.8,580.4 870.0,578.8 872.2,582.5 874.4,579.2 876.6,580.9 878.8,578.1 881.0,579.0 883.2,580.4 885.4,575.7 887.6,579.0 889.8,575.5 892.0,571.3 894.2,567.5 896.4,568.6 898.6,564.2 900.8,572.3 903.0,589.8 905.2,603.8 907.4,603.6 909.6,592.6 911.8,582.5 914.0,576.7 916.2,576.3 918.4,577.2 920.6,573.5 922.8,577.3 925.0,575.4 927.2,575.6 929.4,573.6 931.6,575.9 933.8,573.7 936.0,572.2 938.2,575.2 940.4,573.9 942.6,572.6 944.8,573.6 947.0,573.8 949.2,569.8 951.4,573.0 953.6,570.3 955.8,573.8 958.0,573.5 960.2,572.2 962.4,573.9 964.6,575.1 966.8,575.0 969.0,573.7 971.2,575.3 973.4,573.2 975.6,578.0 977.8,573.3 980.0,573.9 982.2,576.0 984.4,576.9 986.6,576.9 988.8,575.8 991.0,574.0 993.2,578.5 995.4,577.1 997.6,575.5 999.8,576.8 1002.0,577.7 1004.2,578.5 1006.4,578.1 1008.6,576.6 1010.8,581.8 1013.0,582.4 1015.2,597.5 1017.4,586.8 1019.6,577.7 1021.8,580.0 1024.0,577.7 1026.2,575.3 1028.4,579.8 1030.6,588.7 1032.8,587.0 1035.0,579.1 1037.2,580.0 1039.4,577.6 1041.6,576.6 1043.8,580.4 1046.0,575.9 1048.2,575.2 1050.4,575.1 1052.6,576.1 1054.8,570.9 1057.0,577.5 1059.2,576.2 1061.4,572.1 1063.6,569.8 1065.8,575.6 1068.0,571.3 1070.2,575.1 1072.4,571.6 1074.6,572.1 1076.8,569.8 1079.0,570.2 1081.2,573.6 1083.4,568.1 1085.6,574.3 1087.8,573.4 1090.0,570.6 1092.2,572.6 1094.4,574.7 1096.6,571.7 1098.8,573.7 1101.0,574.1 1103.2,576.1 1105.4,575.0 1107.6,574.7 1109.8,573.7 1112.0,575.7 1114.2,578.3 1116.4,575.4 1118.6,578.0 1120.8,575.4 1123.0,580.1 1125.2,577.1 1127.4,579.8 1129.6,576.7 1131.8,577.7 1134.0,589.3 1136.2,598.8 1138.4,614.4 1140.6,596.7 1142.8,580.1 1145.0,561.7 1147.2,571.5 1149.4,584.1" fill="none" stroke="#6ea2f2" stroke-width="1" stroke-linejoin="round"/><line x1="114" x2="1150" y1="621.0" y2="621.0" stroke="rgba(204,204,220,0.1)"/><line x1="114" x2="1150" y1="588.6" y2="588.6" stroke="rgba(204,204,220,0.1)"/><line x1="114" x2="1150" y1="556.2" y2="556.2" stroke="rgba(204,204,220,0.1)"/><line x1="114" x2="1150" y1="523.7" y2="523.7" stroke="rgba(204,204,220,0.1)"/><line x1="114" x2="1150" y1="491.3" y2="491.3" stroke="rgba(204,204,220,0.1)"/><line x1="114" x2="1150" y1="458.9" y2="458.9" stroke="rgba(204,204,220,0.1)"/><line x1="114" x2="1150" y1="426.5" y2="426.5" stroke="rgba(204,204,220,0.1)"/><line x1="114" x2="1150" y1="394.1" y2="394.1" stroke="rgba(204,204,220,0.1)"/><line x1="173.0" x2="173.0" y1="380" y2="621" stroke="rgba(204,204,220,0.1)"/><line x1="258.8" x2="258.8" y1="380" y2="621" stroke="rgba(204,204,220,0.1)"/><line x1="344.6" x2="344.6" y1="380" y2="621" stroke="rgba(204,204,220,0.1)"/><line x1="430.5" x2="430.5" y1="380" y2="621" stroke="rgba(204,204,220,0.1)"/><line x1="516.3" x2="516.3" y1="380" y2="621" stroke="rgba(204,204,220,0.1)"/><line x1="602.1" x2="602.1" y1="380" y2="621" stroke="rgba(204,204,220,0.1)"/><line x1="687.9" x2="687.9" y1="380" y2="621" stroke="rgba(204,204,220,0.1)"/><line x1="773.7" x2="773.7" y1="380" y2="621" stroke="rgba(204,204,220,0.1)"/><line x1="859.5" x2="859.5" y1="380" y2="621" stroke="rgba(204,204,220,0.1)"/><line x1="945.4" x2="945.4" y1="380" y2="621" stroke="rgba(204,204,220,0.1)"/><line x1="1031.2" x2="1031.2" y1="380" y2="621" stroke="rgba(204,204,220,0.1)"/><line x1="1117.0" x2="1117.0" y1="380" y2="621" stroke="rgba(204,204,220,0.1)"/></svg>
<div class="lbl" style="left:72px;width:33px;text-align:right;top:614.0px">0</div>
<div class="lbl" style="left:72px;width:33px;text-align:right;top:581.6px">20</div>
<div class="lbl" style="left:72px;width:33px;text-align:right;top:549.2px">40</div>
<div class="lbl" style="left:72px;width:33px;text-align:right;top:516.7px">60</div>
<div class="lbl" style="left:72px;width:33px;text-align:right;top:484.3px">80</div>
<div class="lbl" style="left:72px;width:33px;text-align:right;top:451.9px">100</div>
<div class="lbl" style="left:72px;width:33px;text-align:right;top:419.5px">120</div>
<div class="lbl" style="left:72px;width:33px;text-align:right;top:387.1px">140</div>
<div class="lbl" style="left:143.0px;width:60px;text-align:center;top:635px">16:00</div>
<div class="lbl" style="left:228.8px;width:60px;text-align:center;top:635px">18:00</div>
<div class="lbl" style="left:314.6px;width:60px;text-align:center;top:635px">20:00</div>
<div class="lbl" style="left:400.5px;width:60px;text-align:center;top:635px">22:00</div>
<div class="lbl" style="left:486.3px;width:60px;text-align:center;top:635px">00:00</div>
<div class="lbl" style="left:572.1px;width:60px;text-align:center;top:635px">02:00</div>
<div class="lbl" style="left:657.9px;width:60px;text-align:center;top:635px">04:00</div>
<div class="lbl" style="left:743.7px;width:60px;text-align:center;top:635px">06:00</div>
<div class="lbl" style="left:829.5px;width:60px;text-align:center;top:635px">08:00</div>
<div class="lbl" style="left:915.4px;width:60px;text-align:center;top:635px">10:00</div>
<div class="lbl" style="left:1001.2px;width:60px;text-align:center;top:635px">12:00</div>
<div class="lbl" style="left:1087.0px;width:60px;text-align:center;top:635px">14:00</div>
<div class="abs" style="left:1166px;top:377px;width:14px;height:4px;border-radius:1px;background:#5794f2"></div>
<div class="lbl" style="left:1188px;top:372px">web_server_01</div>
<div class="abs" style="left:1166px;top:399px;width:14px;height:4px;border-radius:1px;background:#8ab8ff"></div>
<div class="lbl" style="left:1188px;top:394px">web_server_02</div>
<div class="abs" style="left:1166px;top:421px;width:14px;height:4px;border-radius:1px;background:#56a64b"></div>
<div class="lbl" style="left:1188px;top:416px">web_server_03</div>
<div class="abs" style="left:1166px;top:443px;width:14px;height:4px;border-radius:1px;background:#96d98d"></div>
<div class="lbl" style="left:1188px;top:438px">web_server_04</div>
<svg style="left:0;top:0" width="1920" height="1080"><rect x="180" y="721.0" width="1021" height="54.7" fill="#5b9258"/><rect x="565.0" y="721.0" width="354.0" height="54.7" fill="#4672b4"/><rect x="573.6" y="721.0" width="1.4" height="54.7" fill="#5b9258"/><rect x="589.0" y="721.0" width="3.1" height="54.7" fill="#5b9258"/><rect x="593.7" y="721.0" width="1.2" height="54.7" fill="#5b9258"/><rect x="597.2" y="721.0" width="1.7" height="54.7" fill="#5b9258"/><rect x="602.0" y="721.0" width="11.3" height="54.7" fill="#5b9258"/><rect x="615.0" y="721.0" width="1.7" height="54.7" fill="#5b9258"/><rect x="619.0" y="721.0" width="6.1" height="54.7" fill="#5b9258"/><rect x="638.6" y="721.0" width="4.7" height="54.7" fill="#5b9258"/><rect x="649.7" y="721.0" width="3.5" height="54.7" fill="#5b9258"/><rect x="655.6" y="721.0" width="0.8" height="54.7" fill="#5b9258"/><rect x="665.7" y="721.0" width="3.5" height="54.7" fill="#5b9258"/><rect x="672.8" y="721.0" width="0.8" height="54.7" fill="#5b9258"/><rect x="678.7" y="721.0" width="1.2" height="54.7" fill="#5b9258"/><rect x="681.6" y="721.0" width="5.4" height="54.7" fill="#5b9258"/><rect x="787.4" y="721.0" width="3.5" height="54.7" fill="#5b9258"/><rect x="806.7" y="721.0" width="5.0" height="54.7" fill="#5b9258"/><rect x="813.3" y="721.0" width="4.3" height="54.7" fill="#5b9258"/><rect x="830.6" y="721.0" width="0.9" height="54.7" fill="#5b9258"/><rect x="858.9" y="721.0" width="0.9" height="54.7" fill="#5b9258"/><rect x="865.8" y="721.0" width="1.9" height="54.7" fill="#5b9258"/><rect x="871.7" y="721.0" width="1.4" height="54.7" fill="#5b9258"/><rect x="889.4" y="721.0" width="2.4" height="54.7" fill="#5b9258"/><rect x="557.8" y="721.0" width="0.9" height="54.7" fill="#4672b4"/><rect x="218.3" y="721.0" width="5.7" height="54.7" fill="#4672b4"/><rect x="220.7" y="721.0" width="1.0" height="54.7" fill="#5b9258"/><rect x="250.0" y="721.0" width="4.0" height="54.7" fill="#4672b4"/><rect x="297.0" y="721.0" width="3.0" height="54.7" fill="#b63c4c"/><rect x="318.7" y="721.0" width="2.7" height="54.7" fill="#b63c4c"/><rect x="365.0" y="721.0" width="3.3" height="54.7" fill="#4672b4"/><rect x="392.7" y="721.0" width="2.0" height="54.7" fill="#4672b4"/><rect x="397.3" y="721.0" width="2.0" height="54.7" fill="#4672b4"/><rect x="441.7" y="721.0" width="2.3" height="54.7" fill="#b63c4c"/><rect x="445.0" y="721.0" width="1.7" height="54.7" fill="#4672b4"/><rect x="446.7" y="721.0" width="1.7" height="54.7" fill="#b63c4c"/><rect x="556.7" y="721.0" width="1.7" height="54.7" fill="#4672b4"/><rect x="952.8" y="721.0" width="1.6" height="54.7" fill="#b63c4c"/><rect x="955.1" y="721.0" width="2.6" height="54.7" fill="#b63c4c"/><rect x="1000.3" y="721.0" width="1.6" height="54.7" fill="#b63c4c"/><rect x="1148.8" y="721.0" width="1.3" height="54.7" fill="#b63c4c"/><rect x="1191.8" y="721.0" width="1.6" height="54.7" fill="#4672b4"/><rect x="1193.4" y="721.0" width="2.6" height="54.7" fill="#b63c4c"/><rect x="1197.6" y="721.0" width="2.3" height="54.7" fill="#b63c4c"/><rect x="180" y="783.7" width="1021" height="54.7" fill="#5b9258"/><rect x="565.0" y="783.7" width="354.0" height="54.7" fill="#4672b4"/><rect x="570.8" y="783.7" width="0.9" height="54.7" fill="#5b9258"/><rect x="574.3" y="783.7" width="1.2" height="54.7" fill="#5b9258"/><rect x="589.0" y="783.7" width="3.5" height="54.7" fill="#5b9258"/><rect x="593.7" y="783.7" width="1.2" height="54.7" fill="#5b9258"/><rect x="597.2" y="783.7" width="5.9" height="54.7" fill="#5b9258"/><rect x="604.8" y="783.7" width="1.4" height="54.7" fill="#5b9258"/><rect x="608.6" y="783.7" width="6.4" height="54.7" fill="#5b9258"/><rect x="619.0" y="783.7" width="6.1" height="54.7" fill="#5b9258"/><rect x="637.9" y="783.7" width="1.4" height="54.7" fill="#5b9258"/><rect x="652.0" y="783.7" width="0.8" height="54.7" fill="#5b9258"/><rect x="655.6" y="783.7" width="0.8" height="54.7" fill="#5b9258"/><rect x="668.1" y="783.7" width="4.3" height="54.7" fill="#5b9258"/><rect x="678.7" y="783.7" width="1.2" height="54.7" fill="#5b9258"/><rect x="683.4" y="783.7" width="3.5" height="54.7" fill="#5b9258"/><rect x="727.6" y="783.7" width="1.9" height="54.7" fill="#5b9258"/><rect x="732.6" y="783.7" width="2.8" height="54.7" fill="#5b9258"/><rect x="775.6" y="783.7" width="4.0" height="54.7" fill="#5b9258"/><rect x="789.0" y="783.7" width="1.9" height="54.7" fill="#5b9258"/><rect x="806.7" y="783.7" width="3.1" height="54.7" fill="#5b9258"/><rect x="811.7" y="783.7" width="1.7" height="54.7" fill="#5b9258"/><rect x="815.7" y="783.7" width="2.4" height="54.7" fill="#5b9258"/><rect x="865.3" y="783.7" width="2.4" height="54.7" fill="#5b9258"/><rect x="874.8" y="783.7" width="1.2" height="54.7" fill="#5b9258"/><rect x="878.3" y="783.7" width="1.7" height="54.7" fill="#5b9258"/><rect x="903.6" y="783.7" width="3.5" height="54.7" fill="#5b9258"/><rect x="909.0" y="783.7" width="1.2" height="54.7" fill="#5b9258"/><rect x="916.1" y="783.7" width="1.2" height="54.7" fill="#5b9258"/><rect x="216.7" y="783.7" width="2.3" height="54.7" fill="#b63c4c"/><rect x="221.7" y="783.7" width="2.3" height="54.7" fill="#b63c4c"/><rect x="297.0" y="783.7" width="1.0" height="54.7" fill="#b63c4c"/><rect x="318.7" y="783.7" width="2.7" height="54.7" fill="#b63c4c"/><rect x="392.7" y="783.7" width="4.0" height="54.7" fill="#b63c4c"/><rect x="398.3" y="783.7" width="1.0" height="54.7" fill="#b63c4c"/><rect x="441.7" y="783.7" width="2.3" height="54.7" fill="#b63c4c"/><rect x="445.0" y="783.7" width="1.7" height="54.7" fill="#4672b4"/><rect x="447.7" y="783.7" width="2.3" height="54.7" fill="#b63c4c"/><rect x="490.0" y="783.7" width="1.0" height="54.7" fill="#b63c4c"/><rect x="952.8" y="783.7" width="1.0" height="54.7" fill="#b63c4c"/><rect x="955.1" y="783.7" width="1.3" height="54.7" fill="#b63c4c"/><rect x="958.7" y="783.7" width="2.3" height="54.7" fill="#b63c4c"/><rect x="1000.3" y="783.7" width="1.6" height="54.7" fill="#b63c4c"/><rect x="1148.8" y="783.7" width="1.3" height="54.7" fill="#b63c4c"/><rect x="1191.8" y="783.7" width="4.2" height="54.7" fill="#4672b4"/><rect x="1196.6" y="783.7" width="1.0" height="54.7" fill="#b63c4c"/><rect x="180" y="846.4" width="1021" height="54.7" fill="#5b9258"/><rect x="565.0" y="846.4" width="354.0" height="54.7" fill="#4672b4"/><rect x="571.3" y="846.4" width="4.0" height="54.7" fill="#5b9258"/><rect x="580.7" y="846.4" width="1.2" height="54.7" fill="#5b9258"/><rect x="590.2" y="846.4" width="1.9" height="54.7" fill="#5b9258"/><rect x="594.9" y="846.4" width="1.7" height="54.7" fill="#5b9258"/><rect x="597.2" y="846.4" width="35.0" height="54.7" fill="#5b9258"/><rect x="655.6" y="846.4" width="1.2" height="54.7" fill="#5b9258"/><rect x="672.8" y="846.4" width="1.2" height="54.7" fill="#5b9258"/><rect x="680.4" y="846.4" width="3.5" height="54.7" fill="#5b9258"/><rect x="727.6" y="846.4" width="7.8" height="54.7" fill="#5b9258"/><rect x="763.7" y="846.4" width="1.2" height="54.7" fill="#5b9258"/><rect x="776.7" y="846.4" width="4.3" height="54.7" fill="#5b9258"/><rect x="782.6" y="846.4" width="1.2" height="54.7" fill="#5b9258"/><rect x="786.7" y="846.4" width="1.9" height="54.7" fill="#5b9258"/><rect x="806.7" y="846.4" width="1.2" height="54.7" fill="#5b9258"/><rect x="811.0" y="846.4" width="1.7" height="54.7" fill="#5b9258"/><rect x="815.7" y="846.4" width="2.4" height="54.7" fill="#5b9258"/><rect x="825.2" y="846.4" width="5.9" height="54.7" fill="#5b9258"/><rect x="855.1" y="846.4" width="1.2" height="54.7" fill="#5b9258"/><rect x="871.7" y="846.4" width="3.5" height="54.7" fill="#5b9258"/><rect x="877.8" y="846.4" width="1.2" height="54.7" fill="#5b9258"/><rect x="903.6" y="846.4" width="8.3" height="54.7" fill="#5b9258"/><rect x="216.7" y="846.4" width="7.3" height="54.7" fill="#b63c4c"/><rect x="297.0" y="846.4" width="1.0" height="54.7" fill="#b63c4c"/><rect x="318.7" y="846.4" width="2.7" height="54.7" fill="#b63c4c"/><rect x="392.7" y="846.4" width="7.3" height="54.7" fill="#b63c4c"/><rect x="441.7" y="846.4" width="1.7" height="54.7" fill="#4672b4"/><rect x="446.0" y="846.4" width="4.0" height="54.7" fill="#b63c4c"/><rect x="955.4" y="846.4" width="5.5" height="54.7" fill="#b63c4c"/><rect x="1000.3" y="846.4" width="1.6" height="54.7" fill="#b63c4c"/><rect x="1148.8" y="846.4" width="1.3" height="54.7" fill="#b63c4c"/><rect x="1189.5" y="846.4" width="6.5" height="54.7" fill="#b63c4c"/><rect x="180" y="909.1" width="1021" height="54.7" fill="#5b9258"/><rect x="565.0" y="909.1" width="354.0" height="54.7" fill="#4672b4"/><rect x="571.7" y="909.1" width="1.4" height="54.7" fill="#5b9258"/><rect x="577.2" y="909.1" width="1.7" height="54.7" fill="#5b9258"/><rect x="580.7" y="909.1" width="2.8" height="54.7" fill="#5b9258"/><rect x="589.0" y="909.1" width="1.7" height="54.7" fill="#5b9258"/><rect x="592.5" y="909.1" width="4.0" height="54.7" fill="#5b9258"/><rect x="598.4" y="909.1" width="1.2" height="54.7" fill="#5b9258"/><rect x="601.5" y="909.1" width="1.7" height="54.7" fill="#5b9258"/><rect x="604.8" y="909.1" width="4.3" height="54.7" fill="#5b9258"/><rect x="625.1" y="909.1" width="0.9" height="54.7" fill="#5b9258"/><rect x="635.5" y="909.1" width="4.3" height="54.7" fill="#5b9258"/><rect x="645.7" y="909.1" width="1.2" height="54.7" fill="#5b9258"/><rect x="649.2" y="909.1" width="7.6" height="54.7" fill="#5b9258"/><rect x="672.8" y="909.1" width="1.2" height="54.7" fill="#5b9258"/><rect x="680.4" y="909.1" width="3.5" height="54.7" fill="#5b9258"/><rect x="727.6" y="909.1" width="7.8" height="54.7" fill="#5b9258"/><rect x="777.9" y="909.1" width="1.9" height="54.7" fill="#5b9258"/><rect x="783.8" y="909.1" width="1.2" height="54.7" fill="#5b9258"/><rect x="807.4" y="909.1" width="1.2" height="54.7" fill="#5b9258"/><rect x="811.7" y="909.1" width="1.7" height="54.7" fill="#5b9258"/><rect x="815.7" y="909.1" width="2.4" height="54.7" fill="#5b9258"/><rect x="821.6" y="909.1" width="2.4" height="54.7" fill="#5b9258"/><rect x="828.7" y="909.1" width="2.8" height="54.7" fill="#5b9258"/><rect x="865.3" y="909.1" width="1.2" height="54.7" fill="#5b9258"/><rect x="877.8" y="909.1" width="0.9" height="54.7" fill="#5b9258"/><rect x="890.1" y="909.1" width="1.7" height="54.7" fill="#5b9258"/><rect x="903.6" y="909.1" width="6.6" height="54.7" fill="#5b9258"/><rect x="216.7" y="909.1" width="7.3" height="54.7" fill="#b63c4c"/><rect x="297.0" y="909.1" width="3.0" height="54.7" fill="#b63c4c"/><rect x="318.7" y="909.1" width="2.7" height="54.7" fill="#b63c4c"/><rect x="392.7" y="909.1" width="7.3" height="54.7" fill="#b63c4c"/><rect x="441.7" y="909.1" width="1.7" height="54.7" fill="#4672b4"/><rect x="446.0" y="909.1" width="4.0" height="54.7" fill="#b63c4c"/><rect x="955.4" y="909.1" width="5.5" height="54.7" fill="#b63c4c"/><rect x="1000.3" y="909.1" width="1.6" height="54.7" fill="#b63c4c"/><rect x="1148.8" y="909.1" width="1.3" height="54.7" fill="#b63c4c"/><rect x="1189.5" y="909.1" width="6.5" height="54.7" fill="#b63c4c"/><line x1="231.0" x2="231.0" y1="715" y2="971" stroke="rgba(204,204,220,0.07)"/><line x1="316.3" x2="316.3" y1="715" y2="971" stroke="rgba(204,204,220,0.07)"/><line x1="401.5" x2="401.5" y1="715" y2="971" stroke="rgba(204,204,220,0.07)"/><line x1="486.8" x2="486.8" y1="715" y2="971" stroke="rgba(204,204,220,0.07)"/><line x1="572.1" x2="572.1" y1="715" y2="971" stroke="rgba(204,204,220,0.07)"/><line x1="657.4" x2="657.4" y1="715" y2="971" stroke="rgba(204,204,220,0.07)"/><line x1="742.6" x2="742.6" y1="715" y2="971" stroke="rgba(204,204,220,0.07)"/><line x1="827.9" x2="827.9" y1="715" y2="971" stroke="rgba(204,204,220,0.07)"/><line x1="913.2" x2="913.2" y1="715" y2="971" stroke="rgba(204,204,220,0.07)"/><line x1="998.5" x2="998.5" y1="715" y2="971" stroke="rgba(204,204,220,0.07)"/><line x1="1083.7" x2="1083.7" y1="715" y2="971" stroke="rgba(204,204,220,0.07)"/><line x1="1169.0" x2="1169.0" y1="715" y2="971" stroke="rgba(204,204,220,0.07)"/></svg>
<div class="lbl" style="left:82px;top:739.3px">web_server_01</div>
<div class="lbl" style="left:82px;top:802.0px">web_server_02</div>
<div class="lbl" style="left:82px;top:864.7px">web_server_03</div>
<div class="lbl" style="left:82px;top:927.4px">web_server_04</div>
<div class="lbl" style="left:201.0px;width:60px;text-align:center;top:977px">16:00</div>
<div class="lbl" style="left:286.3px;width:60px;text-align:center;top:977px">18:00</div>
<div class="lbl" style="left:371.5px;width:60px;text-align:center;top:977px">20:00</div>
<div class="lbl" style="left:456.8px;width:60px;text-align:center;top:977px">22:00</div>
<div class="lbl" style="left:542.1px;width:60px;text-align:center;top:977px">00:00</div>
<div class="lbl" style="left:627.4px;width:60px;text-align:center;top:977px">02:00</div>
<div class="lbl" style="left:712.6px;width:60px;text-align:center;top:977px">04:00</div>
<div class="lbl" style="left:797.9px;width:60px;text-align:center;top:977px">06:00</div>
<div class="lbl" style="left:883.2px;width:60px;text-align:center;top:977px">08:00</div>
<div class="lbl" style="left:968.5px;width:60px;text-align:center;top:977px">10:00</div>
<div class="lbl" style="left:1053.7px;width:60px;text-align:center;top:977px">12:00</div>
<div class="lbl" style="left:1139.0px;width:60px;text-align:center;top:977px">14:00</div>
<div class="abs" style="left:1217px;top:719px;width:14px;height:4px;border-radius:1px;background:#5794f2"></div>
<div class="lbl" style="left:1239px;top:714px">&lt; 5%</div>
<div class="abs" style="left:1217px;top:741px;width:14px;height:4px;border-radius:1px;background:#73bf69"></div>
<div class="lbl" style="left:1239px;top:736px">5%+</div>
<div class="abs" style="left:1217px;top:763px;width:14px;height:4px;border-radius:1px;background:#f2495c"></div>
<div class="lbl" style="left:1239px;top:758px">31%+</div>
<div class="abs" style="left:1297px;top:705px;width:602px;height:33px;background:#22252b"></div>
<div class="abs" style="left:1465px;top:705px;width:1px;height:380px;background:#26292e"></div>
<div class="abs" style="left:1570px;top:705px;width:1px;height:380px;background:#26292e"></div>
<div class="abs" style="left:1648px;top:705px;width:1px;height:380px;background:#26292e"></div>
<div class="abs" style="left:1303px;top:713px;font-size:14px;line-height:16px;color:#6e9fff">time</div>
<div class="abs" style="left:1460px;width:100px;text-align:right;top:713px;font-size:14px;line-height:16px;color:#6e9fff">flow1</div>
<div class="abs" style="left:1537px;width:100px;text-align:right;top:713px;font-size:14px;line-height:16px;color:#6e9fff">flow2</div>
<div class="abs" style="left:1789px;width:100px;text-align:right;top:713px;font-size:14px;line-height:16px;color:#6e9fff">flow3</div>
<div class="abs" style="left:1303px;top:746.6px;font-size:14px;line-height:16px;color:#ccccdc;white-space:nowrap">Jun 7th, 2021 14:46:16</div>
<div class="abs" style="left:1463px;width:100px;text-align:right;top:746.6px;font-size:14px;line-height:16px;color:#eca653">50%</div>
<div class="abs" style="left:1541px;width:100px;text-align:right;top:746.6px;font-size:14px;line-height:16px;color:#eca653">50%</div>
<div class="abs" style="left:1783px;width:100px;text-align:right;top:746.6px;font-size:14px;line-height:16px;color:#eca653">50%</div>
<div class="abs" style="left:1297px;top:771.6px;width:593px;height:1px;background:#26292e"></div>
<div class="abs" style="left:1303px;top:781.6px;font-size:14px;line-height:16px;color:#ccccdc;white-space:nowrap">Jun 7th, 2021 15:01:16</div>
<div class="abs" style="left:1463px;width:100px;text-align:right;top:781.6px;font-size:14px;line-height:16px;color:#73bf69">49.4%</div>
<div class="abs" style="left:1541px;width:100px;text-align:right;top:781.6px;font-size:14px;line-height:16px;color:#73bf69">44.9%</div>
<div class="abs" style="left:1783px;width:100px;text-align:right;top:781.6px;font-size:14px;line-height:16px;color:#73bf69">49.2%</div>
<div class="abs" style="left:1297px;top:806.6px;width:593px;height:1px;background:#26292e"></div>
<div class="abs" style="left:1303px;top:816.6px;font-size:14px;line-height:16px;color:#ccccdc;white-space:nowrap">Jun 7th, 2021 15:16:16</div>
<div class="abs" style="left:1463px;width:100px;text-align:right;top:816.6px;font-size:14px;line-height:16px;color:#73bf69">45.3%</div>
<div class="abs" style="left:1541px;width:100px;text-align:right;top:816.6px;font-size:14px;line-height:16px;color:#73bf69">47.5%</div>
<div class="abs" style="left:1783px;width:100px;text-align:right;top:816.6px;font-size:14px;line-height:16px;color:#eca653">53.9%</div>
<div class="abs" style="left:1297px;top:841.6px;width:593px;height:1px;background:#26292e"></div>
<div class="abs" style="left:1303px;top:851.6px;font-size:14px;line-height:16px;color:#ccccdc;white-space:nowrap">Jun 7th, 2021 15:31:16</div>
<div class="abs" style="left:1463px;width:100px;text-align:right;top:851.6px;font-size:14px;line-height:16px;color:#73bf69">47.9%</div>
<div class="abs" style="left:1541px;width:100px;text-align:right;top:851.6px;font-size:14px;line-height:16px;color:#eca653">52.9%</div>
<div class="abs" style="left:1783px;width:100px;text-align:right;top:851.6px;font-size:14px;line-height:16px;color:#e9b050">59.3%</div>
<div class="abs" style="left:1297px;top:876.6px;width:593px;height:1px;background:#26292e"></div>
<div class="abs" style="left:1303px;top:886.6px;font-size:14px;line-height:16px;color:#ccccdc;white-space:nowrap">Jun 7th, 2021 15:46:16</div>
<div class="abs" style="left:1463px;width:100px;text-align:right;top:886.6px;font-size:14px;line-height:16px;color:#eca653">51.4%</div>
<div class="abs" style="left:1541px;width:100px;text-align:right;top:886.6px;font-size:14px;line-height:16px;color:#e9b050">58.5%</div>
<div class="abs" style="left:1783px;width:100px;text-align:right;top:886.6px;font-size:14px;line-height:16px;color:#e9b050">56.0%</div>
<div class="abs" style="left:1297px;top:911.6px;width:593px;height:1px;background:#26292e"></div>
<div class="abs" style="left:1303px;top:921.6px;font-size:14px;line-height:16px;color:#ccccdc;white-space:nowrap">Jun 7th, 2021 16:01:16</div>
<div class="abs" style="left:1463px;width:100px;text-align:right;top:921.6px;font-size:14px;line-height:16px;color:#eca653">54.3%</div>
<div class="abs" style="left:1541px;width:100px;text-align:right;top:921.6px;font-size:14px;line-height:16px;color:#e0577a">61.9%</div>
<div class="abs" style="left:1783px;width:100px;text-align:right;top:921.6px;font-size:14px;line-height:16px;color:#e9b050">58.5%</div>
<div class="abs" style="left:1297px;top:946.6px;width:593px;height:1px;background:#26292e"></div>
<div class="abs" style="left:1303px;top:956.6px;font-size:14px;line-height:16px;color:#ccccdc;white-space:nowrap">Jun 7th, 2021 16:16:16</div>
<div class="abs" style="left:1463px;width:100px;text-align:right;top:956.6px;font-size:14px;line-height:16px;color:#e9b050">56.0%</div>
<div class="abs" style="left:1541px;width:100px;text-align:right;top:956.6px;font-size:14px;line-height:16px;color:#e0577a">63.3%</div>
<div class="abs" style="left:1783px;width:100px;text-align:right;top:956.6px;font-size:14px;line-height:16px;color:#e0577a">65.3%</div>
<div class="abs" style="left:1297px;top:981.6px;width:593px;height:1px;background:#26292e"></div>
<div class="abs" style="left:1303px;top:991.6px;font-size:14px;line-height:16px;color:#ccccdc;white-space:nowrap">Jun 7th, 2021 16:31:16</div>
<div class="abs" style="left:1463px;width:100px;text-align:right;top:991.6px;font-size:14px;line-height:16px;color:#e9b050">56.7%</div>
<div class="abs" style="left:1541px;width:100px;text-align:right;top:991.6px;font-size:14px;line-height:16px;color:#e0577a">66.9%</div>
<div class="abs" style="left:1783px;width:100px;text-align:right;top:991.6px;font-size:14px;line-height:16px;color:#e9b050">59.6%</div>
<div class="abs" style="left:1297px;top:1016.6px;width:593px;height:1px;background:#26292e"></div>
<div class="abs" style="left:1303px;top:1026.6px;font-size:14px;line-height:16px;color:#ccccdc;white-space:nowrap">Jun 7th, 2021 16:46:16</div>
<div class="abs" style="left:1463px;width:100px;text-align:right;top:1026.6px;font-size:14px;line-height:16px;color:#e9b050">56.1%</div>
<div class="abs" style="left:1541px;width:100px;text-align:right;top:1026.6px;font-size:14px;line-height:16px;color:#e9b050">59.5%</div>
<div class="abs" style="left:1783px;width:100px;text-align:right;top:1026.6px;font-size:14px;line-height:16px;color:#e9b050">59.1%</div>
<div class="abs" style="left:1297px;top:1051.6px;width:593px;height:1px;background:#26292e"></div>
<div class="abs" style="left:1303px;top:1061.6px;font-size:14px;line-height:16px;color:#ccccdc;white-space:nowrap">Jun 7th, 2021 17:01:16</div>
<div class="abs" style="left:1463px;width:100px;text-align:right;top:1061.6px;font-size:14px;line-height:16px;color:#e9b050">58.3%</div>
<div class="abs" style="left:1541px;width:100px;text-align:right;top:1061.6px;font-size:14px;line-height:16px;color:#e9b050">57.0%</div>
<div class="abs" style="left:1783px;width:100px;text-align:right;top:1061.6px;font-size:14px;line-height:16px;color:#e0577a">65.7%</div>
<div class="abs" style="left:1891px;top:739px;width:7px;height:91px;border-radius:3px;background:#131418;border:1px solid #3a3c42;box-sizing:border-box"></div>
<svg style="left:0;top:0" width="1920" height="1080"><line x1="115" x2="1110" y1="1064.5" y2="1064.5" stroke="rgba(204,204,220,0.12)"/><line x1="164.5" x2="164.5" y1="1064" y2="1080" stroke="rgba(204,204,220,0.12)"/><line x1="247.5" x2="247.5" y1="1064" y2="1080" stroke="rgba(204,204,220,0.12)"/><line x1="330.5" x2="330.5" y1="1064" y2="1080" stroke="rgba(204,204,220,0.12)"/><line x1="413.5" x2="413.5" y1="1064" y2="1080" stroke="rgba(204,204,220,0.12)"/><line x1="496.5" x2="496.5" y1="1064" y2="1080" stroke="rgba(204,204,220,0.12)"/><line x1="579.5" x2="579.5" y1="1064" y2="1080" stroke="rgba(204,204,220,0.12)"/><line x1="662.5" x2="662.5" y1="1064" y2="1080" stroke="rgba(204,204,220,0.12)"/><line x1="745.5" x2="745.5" y1="1064" y2="1080" stroke="rgba(204,204,220,0.12)"/><line x1="828.5" x2="828.5" y1="1064" y2="1080" stroke="rgba(204,204,220,0.12)"/><line x1="911.5" x2="911.5" y1="1064" y2="1080" stroke="rgba(204,204,220,0.12)"/><line x1="994.5" x2="994.5" y1="1064" y2="1080" stroke="rgba(204,204,220,0.12)"/><line x1="1077.5" x2="1077.5" y1="1064" y2="1080" stroke="rgba(204,204,220,0.12)"/></svg>
<div class="lbl" style="left:72px;width:35px;text-align:right;top:1057px">8 s</div>
<div class="abs" style="left:1244px;top:1061px;font-size:12px;line-height:14px;color:#33a2e5;-webkit-text-stroke:0.2px #33a2e5">avg</div>
<svg style="left:155px;top:686px" width="18" height="15" viewBox="0 0 18 15"><path d="M2 13.3 L2 8.8 Q2 7.2 3.4 7.2 Q4.6 7.2 4.6 8.5 L4.6 3.6 Q4.6 2.2 6.1 2.2 Q7.4 2.2 7.4 3.6 L7.4 2.6 Q7.4 1.3 8.9 1.3 Q10.3 1.3 10.3 2.6 L10.3 3.2 Q10.3 2.0 11.8 2.0 Q13.2 2.0 13.2 3.4 L13.2 4.6 Q13.2 3.5 14.6 3.5 Q16 3.5 16 4.9 L16 12 Q16 13.3 14.7 13.3 Z" fill="#ffffff" stroke="#0c0c0c" stroke-width="1.1"/><path d="M6.3 8.3v-1.2M9 8.3v-1.2M11.8 8.3v-1.2" stroke="#777" stroke-width="0.8"/></svg>
<svg style="left:0;top:0" width="56" height="1080"><defs><linearGradient id="lg" x1="0" y1="1" x2="0" y2="0"><stop offset="0" stop-color="#fcd22c"/><stop offset="1" stop-color="#f05a28"/></linearGradient></defs><path d="M25.16,13.31 Q27.07,11.01 28.83,13.44 Q30.58,15.86 33.56,15.59 Q36.55,15.32 36.07,18.28 Q35.59,21.24 37.89,23.16 Q40.19,25.07 37.76,26.83 Q35.34,28.58 35.61,31.56 Q35.88,34.55 32.92,34.07 Q29.96,33.59 28.04,35.89 Q26.13,38.19 24.37,35.76 Q22.62,33.34 19.64,33.61 Q16.65,33.88 17.13,30.92 Q17.61,27.96 15.31,26.04 Q13.01,24.13 15.44,22.37 Q17.86,20.62 17.59,17.64 Q17.32,14.65 20.28,15.13 Q23.24,15.61 25.16,13.31 Z" fill="url(#lg)"/><path d="M31.09,19.69 A6.6,6.6 0 1 0 32.77,28.79" fill="none" stroke="#1b1c20" stroke-width="2.6"/><circle cx="28.6" cy="25.9" r="2.6" fill="#1b1c20"/><circle cx="25.8" cy="116" r="8" fill="none" stroke="#a7a8b1" stroke-width="1.6"/><line x1="31.5" y1="121.7" x2="36.5" y2="126.5" stroke="#a7a8b1" stroke-width="1.8" stroke-linecap="round"/><path d="M27 153v16M19 161h16" stroke="#a7a8b1" stroke-width="1.6"/><rect x="17.9" y="195.7" width="7.4" height="7.4" fill="none" stroke="#a7a8b1" stroke-width="1.5"/><rect x="17.9" y="207.0" width="7.4" height="7.4" fill="none" stroke="#a7a8b1" stroke-width="1.5"/><rect x="29.2" y="195.7" width="7.4" height="7.4" fill="none" stroke="#a7a8b1" stroke-width="1.5"/><rect x="29.2" y="207.0" width="7.4" height="7.4" fill="none" stroke="#a7a8b1" stroke-width="1.5"/><circle cx="27" cy="248.8" r="9.3" fill="none" stroke="#a7a8b1" stroke-width="1.6"/><path d="M27 239.5v2.2M27 256v2.2M17.7 248.8h2.2M34.1 248.8h2.2" stroke="#a7a8b1" stroke-width="1.4"/><path d="M31.2 244.6 L28.6 250.4 L22.8 253 L25.4 247.2 Z" fill="none" stroke="#a7a8b1" stroke-width="1.4" stroke-linejoin="round"/><path d="M20 298h14M21.5 298v-6.5a5.5 5.5 0 0 1 11 0V298M27 285.8v-2M24.5 300.5a2.5 2.5 0 0 0 5 0" fill="none" stroke="#a7a8b1" stroke-width="1.6" stroke-linejoin="round"/><circle cx="27" cy="338" r="13.6" fill="#181b1e" stroke="#24302f" stroke-width="1"/><circle cx="27" cy="338" r="11" fill="#6d6f75"/><path d="M23.3,329.3 L29.3,328.7 L30,331.3 L28,332.7 L29.3,334.3 L31.3,334 L34.7,332.7 L35.3,334 L31.3,335.7 L28.7,337.3 L30,340 L33.3,341.3 L32.7,345.3 L29.3,347.7 L24,346.7 L25.3,343 L22.7,340 L18,337.3 L18.7,334.7 L21.3,333.3 L23,331.3 Z" fill="#1a1c1f"/><circle cx="27" cy="338" r="11.3" fill="none" stroke="#1a1c1f" stroke-width="1.2"/><circle cx="21" cy="326" r="1.6" fill="#5fb8c0"/><clipPath id="plc"><circle cx="27.1" cy="381.6" r="13.6"/></clipPath><g clip-path="url(#plc)"><rect x="13" y="368" width="29" height="28" fill="#0f1c33"/><rect x="13.5" y="369" width="12.3" height="11.5" fill="none" stroke="#3d6cc0" stroke-width="1.2"/><rect x="13" y="368" width="13" height="4.5" fill="#3d6cc0"/><rect x="28.4" y="369" width="14" height="11.8" fill="none" stroke="#f2b52e" stroke-width="1.3"/><rect x="28" y="368" width="15" height="4.6" fill="#f2b52e"/><rect x="29.4" y="373" width="11" height="6.6" fill="#0a1322"/><rect x="13" y="383" width="29" height="3.2" fill="#3d6cc0"/><rect x="13.5" y="386" width="12.3" height="9" fill="none" stroke="#3d6cc0" stroke-width="1.1"/><rect x="28.4" y="386" width="13" height="9" fill="none" stroke="#3d6cc0" stroke-width="1.1"/><circle cx="19.5" cy="376.3" r="2" fill="none" stroke="#8ab4f8" stroke-width="1.1"/><path d="M16.8 391v-1.3M19.5 391v-3M22.2 391v-4" stroke="#c4d6f5" stroke-width="1.3"/><path d="M31 390.5 L33.5 388.5 L35 389.3 L37.5 387" fill="none" stroke="#c4d6f5" stroke-width="1.2"/></g><path d="M34.03,423.46 L36.51,423.68 L36.51,426.32 L34.03,426.54 L33.06,428.88 L34.65,430.79 L32.79,432.65 L30.88,431.06 L28.54,432.03 L28.32,434.51 L25.68,434.51 L25.46,432.03 L23.12,431.06 L21.21,432.65 L19.35,430.79 L20.94,428.88 L19.97,426.54 L17.49,426.32 L17.49,423.68 L19.97,423.46 L20.94,421.12 L19.35,419.21 L21.21,417.35 L23.12,418.94 L25.46,417.97 L25.68,415.49 L28.32,415.49 L28.54,417.97 L30.88,418.94 L32.79,417.35 L34.65,419.21 L33.06,421.12 Z" fill="none" stroke="#a7a8b1" stroke-width="1.5" stroke-linejoin="round"/><circle cx="27" cy="425" r="3" fill="none" stroke="#a7a8b1" stroke-width="1.5"/><path d="M27 459.5 L34.5 462 V468.5 Q34.5 475 27 478.5 Q19.5 475 19.5 468.5 V462 Z" fill="none" stroke="#a7a8b1" stroke-width="1.6" stroke-linejoin="round"/><clipPath id="avc"><circle cx="27" cy="999" r="13.9"/></clipPath><g clip-path="url(#avc)"><rect x="13" y="985" width="28" height="28" fill="#4a7a1e"/><rect x="21.3" y="988.1" width="2.6" height="10.6" fill="#f08878"/><rect x="30.2" y="988.1" width="2.6" height="10.6" fill="#f08878"/><rect x="21.3" y="990.2" width="11.5" height="3.6" fill="#f08878"/><rect x="16.3" y="988.1" width="2.8" height="3.0" fill="#f08878"/><rect x="35.2" y="988.1" width="2.5" height="3.0" fill="#f08878"/><rect x="15.8" y="999.2" width="8.1" height="8.3" fill="#f08878"/><rect x="18" y="1007.5" width="4.0" height="2.5" fill="#f08878"/><rect x="33.3" y="999.2" width="4.7" height="8.3" fill="#f08878"/><rect x="32" y="1007.5" width="4.5" height="2.5" fill="#f08878"/><rect x="23.9" y="1002.2" width="6.3" height="2.5" fill="#f08878"/><rect x="23.9" y="1007.2" width="6.3" height="3.0" fill="#f08878"/></g><circle cx="27" cy="1041.8" r="9.3" fill="none" stroke="#a7a8b1" stroke-width="1.6"/><path d="M24 1039.3 a3 3 0 1 1 4.3 2.7 q-1.3 .6 -1.3 2" fill="none" stroke="#a7a8b1" stroke-width="1.6"/><circle cx="27" cy="1046.5" r="1" fill="#a7a8b1"/></svg>
<svg style="left:60px;top:0" width="1860" height="60"><rect x="13.8" y="25.2" width="5.8" height="5.8" fill="none" stroke="#c7c8d0" stroke-width="1.4"/><rect x="13.8" y="33.7" width="5.8" height="5.8" fill="none" stroke="#c7c8d0" stroke-width="1.4"/><rect x="22.3" y="25.2" width="5.8" height="5.8" fill="none" stroke="#c7c8d0" stroke-width="1.4"/><rect x="22.3" y="33.7" width="5.8" height="5.8" fill="none" stroke="#c7c8d0" stroke-width="1.4"/><path d="M265.00,24.70 L267.00,29.55 L272.23,29.95 L268.23,33.35 L269.47,38.45 L265.00,35.70 L260.53,38.45 L261.77,33.35 L257.77,29.95 L263.00,29.55 Z" fill="none" stroke="#c7c8d0" stroke-width="1.4" stroke-linejoin="round"/><circle cx="293.5" cy="32" r="2.3" fill="none" stroke="#c7c8d0" stroke-width="1.4"/><circle cx="304" cy="26.3" r="2.3" fill="none" stroke="#c7c8d0" stroke-width="1.4"/><circle cx="304" cy="37.7" r="2.3" fill="none" stroke="#c7c8d0" stroke-width="1.4"/><path d="M295.5 31 L302 27.3 M295.5 33 L302 36.7" stroke="#c7c8d0" stroke-width="1.4"/></svg>
<div class="btn" style="left:1445px;width:42px"></div>
<div class="btn" style="left:1495px;width:36px"></div>
<div class="btn" style="left:1539px;width:36px"></div>
<div class="btn" style="left:1583px;width:193px"></div>
<div class="btn" style="left:1786px;width:70px"></div>
<div class="btn" style="left:1864px;width:36px"></div>
<div class="abs" style="left:1740px;top:17px;width:1px;height:30px;background:#26282d"></div>
<div class="abs" style="left:1822px;top:17px;width:1px;height:30px;background:#26282d"></div>
<svg style="left:1440px;top:0" width="480" height="60"><rect x="14.0" y="28.8" width="3.2" height="10" fill="#9fa1a9"/><rect x="18.3" y="25.8" width="3.2" height="13" fill="#9fa1a9"/><rect x="22.6" y="30.8" width="3.2" height="8" fill="#9fa1a9"/><rect x="26.9" y="23.8" width="3.2" height="15" fill="#9fa1a9"/><path d="M33.299999999999955 27.8v8.6M29 32.1h8.6" stroke="#f5a623" stroke-width="3"/><path d="M66.5 26.2 h10 l3.2 3.2 v8.2 q0 1 -1 1 h-12.2 q-1 0 -1 -1 v-10.4 q0 -1 1 -1 z" fill="none" stroke="#a7a8b1" stroke-width="1.6" stroke-linejoin="round"/><path d="M69.5 26.5 v3.3 h5 v-3.3 M69 38.3 v-4.5 h6.5 v4.5" fill="none" stroke="#a7a8b1" stroke-width="1.5"/><path d="M122.47,30.80 L124.33,30.99 L124.33,33.01 L122.47,33.20 L121.72,35.02 L122.90,36.47 L121.47,37.90 L120.02,36.72 L118.20,37.47 L118.01,39.33 L115.99,39.33 L115.80,37.47 L113.98,36.72 L112.53,37.90 L111.10,36.47 L112.28,35.02 L111.53,33.20 L109.67,33.01 L109.67,30.99 L111.53,30.80 L112.28,28.98 L111.10,27.53 L112.53,26.10 L113.98,27.28 L115.80,26.53 L115.99,24.67 L118.01,24.67 L118.20,26.53 L120.02,27.28 L121.47,26.10 L122.90,27.53 L121.72,28.98 Z" fill="none" stroke="#a7a8b1" stroke-width="1.4" stroke-linejoin="round"/><circle cx="117" cy="32" r="2.3" fill="none" stroke="#a7a8b1" stroke-width="1.4"/><circle cx="161" cy="32" r="7.3" fill="none" stroke="#a7a8b1" stroke-width="1.5"/><path d="M161 27.8 v4.5 h-2.8" fill="none" stroke="#a7a8b1" stroke-width="1.5"/><path d="M280.5 30.3 l2.8 2.8 l2.8 -2.8" fill="none" stroke="#a7a8b1" stroke-width="1.5"/><circle cx="317" cy="31.2" r="6.3" fill="none" stroke="#a7a8b1" stroke-width="1.5"/><path d="M314 31.2 h6 M321.5999999999999 35.8 l3.2 3.2" stroke="#a7a8b1" stroke-width="1.5"/><path d="M357.5 30.5 a6.6 6.6 0 0 1 12.3 -2.2 M370.20000000000005 33.5 a6.6 6.6 0 0 1 -12.3 2.2" fill="none" stroke="#a7a8b1" stroke-width="1.5"/><path d="M370.20000000000005 24.5 v4.2 h-4.2 M357.5 39.5 v-4.2 h4.2" fill="none" stroke="#a7a8b1" stroke-width="1.5"/><path d="M396 30.3 l2.8 2.8 l2.8 -2.8" fill="none" stroke="#a7a8b1" stroke-width="1.5"/><rect x="434.79999999999995" y="24.2" width="14.6" height="11.4" rx="1.5" fill="none" stroke="#a7a8b1" stroke-width="1.5"/><path d="M435 32.6 h14.2" stroke="#a7a8b1" stroke-width="1.3"/><rect x="438.9000000000001" y="37.2" width="6.2" height="2.6" rx="1.2" fill="none" stroke="#a7a8b1" stroke-width="1.3"/></svg>
<div class="abs" style="left:1618px;top:24px;font-size:14.5px;line-height:17px;color:#c7c8d0;white-space:nowrap;-webkit-text-stroke:0.2px #c7c8d0">Last 24 hours</div>
</body></html>
